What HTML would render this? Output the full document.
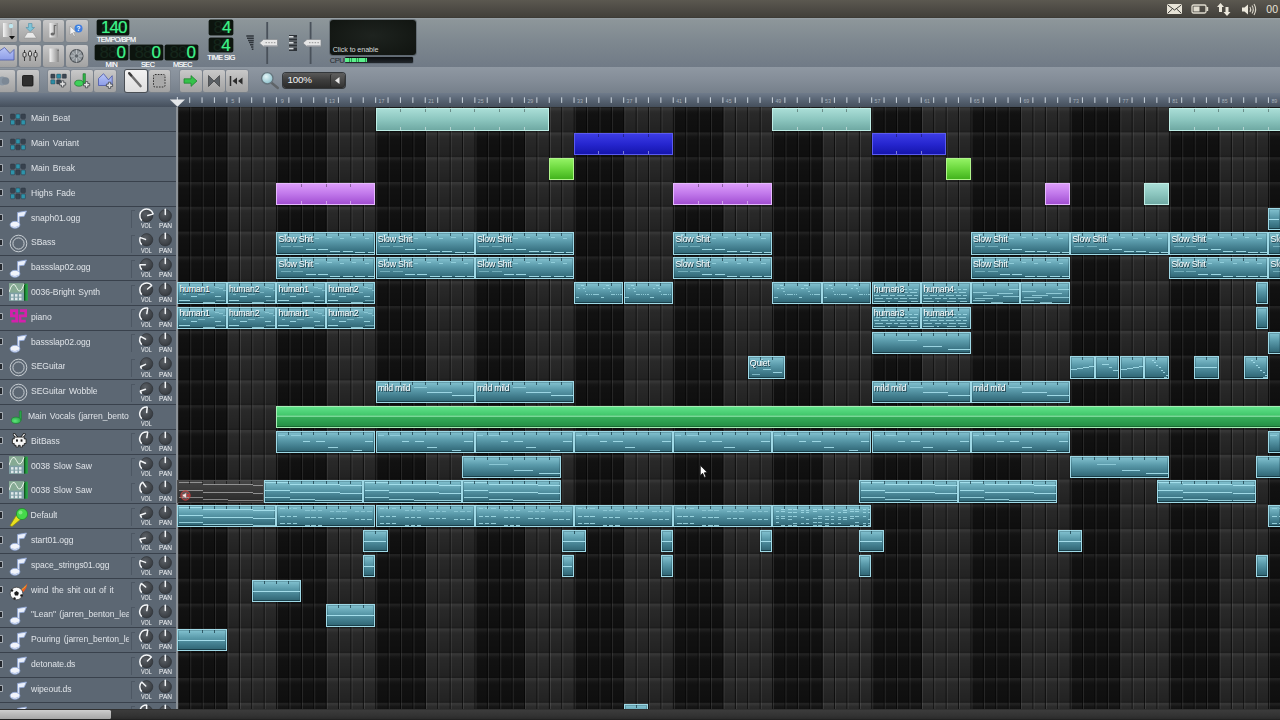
<!DOCTYPE html>
<html><head><meta charset="utf-8"><title>LMMS Song-Editor</title>
<style>
html,body{margin:0;padding:0;background:#2a2a2a;}
body{width:1280px;height:720px;overflow:hidden;position:relative;font-family:"Liberation Sans","DejaVu Sans",sans-serif;}
.abs{position:absolute;}
#top{position:absolute;left:0;top:0;width:1280px;height:18px;background:linear-gradient(#5b5850,#4e4b45 50%,#43413b 92%,#3a3833);}
#tb1{position:absolute;left:0;top:18px;width:1280px;height:50px;background:linear-gradient(#9aa3a8 0,#8d969a 4%,#7d878f 50%,#707a86);}
#tb2{position:absolute;left:0;top:67px;width:1280px;height:26px;background:linear-gradient(#8f98a2,#848d98 50%,#76808b);}
#tl{position:absolute;left:0;top:93px;width:1280px;height:14px;background:linear-gradient(#6f7b8b,#586473 50%,#454f5c);}
.btn{position:absolute;width:21.700px;height:22px;border-radius:2px;background:linear-gradient(#c9c9c9,#b4b4b4 50%,#a2a2a2);box-shadow:0 0 0 1px rgba(120,128,136,.55);}
.btn.on{background:linear-gradient(#f2f2f2,#dedede);box-shadow:0 0 0 1px #4a4f55;}
.lcd{position:absolute;background:#0c140e;border-radius:1.500px;box-shadow:0 0 0 .4px #1c241f;color:#3cf386;font-family:"Liberation Sans","DejaVu Sans",sans-serif;overflow:hidden;}
.lcd span{position:absolute;right:3px;top:0;letter-spacing:-1px;white-space:nowrap;text-shadow:0 0 1px rgba(60,243,134,.6)}
.lcd span.g{color:#15261b;text-shadow:none}
.lcdl{position:absolute;color:#f2f4f6;font-size:7.300px;letter-spacing:-0.55px;white-space:nowrap;text-shadow:0 0 .4px #f2f4f6;}
.trk{position:absolute;left:0;width:177px;background:#5c6773;border-bottom:1px solid #39414c;box-sizing:border-box;overflow:hidden;}
.tn{position:absolute;top:6px;font-size:8.600px;color:#dfe3e8;white-space:nowrap;letter-spacing:-0.05px;word-spacing:1.100px;overflow:hidden;}
.kl{position:absolute;font-size:7.900px;color:#f3f5f7;top:14.300px;transform-origin:0 0;transform:scaleX(.74);white-space:nowrap;}
.clip{position:absolute;box-sizing:border-box;overflow:hidden;}
.pat{background:linear-gradient(#84c3d1,#5a9aaa 40%,#3f7a8a 75%,#2f6472);border:1px solid #9fd9e6;box-shadow:inset 0 -1px 0 0 rgba(15,45,55,.6),inset 0 0 0 1px rgba(20,55,68,.25);}
.pat span{position:absolute;left:1.300px;top:.8px;font-size:8.800px;color:#fff;text-shadow:.7px .7px 0 rgba(15,40,50,.9);white-space:nowrap;letter-spacing:-0.25px;}
.bb{border:1px solid;}
.n{position:absolute;height:1px;background:#a9e2ee;opacity:.85}
.tk{position:absolute;top:0;width:1px;height:3px;background:rgba(10,40,50,.65);}
#w{position:absolute;left:0;top:0;width:1280px;height:720px;overflow:hidden;filter:blur(.35px);}
</style></head><body><div id="w">

<div id="top">
<svg class="abs" style="left:1166px;top:3px" width="18" height="13" viewBox="0 0 18 13"><rect x="1" y="1" width="15" height="10" rx="1.5" fill="#e8e4d8"/><path d="M2 2.2 L8.5 7 L15 2.2 M2 10 L6.3 6 M15 10 L10.7 6" stroke="#3d3c38" stroke-width="1" fill="none"/></svg>
<svg class="abs" style="left:1191px;top:4px" width="18" height="11" viewBox="0 0 18 11"><rect x="1" y="1" width="14" height="8" rx="1.5" fill="none" stroke="#e0dccf" stroke-width="1.3"/><rect x="15.4" y="3" width="1.8" height="4" fill="#e0dccf"/><rect x="2.5" y="2.5" width="6" height="5" fill="#e0dccf"/></svg>
<svg class="abs" style="left:1216px;top:2px" width="16" height="15" viewBox="0 0 16 15"><path d="M4.5 1 L8 5 L6 5 L6 10 L3 10 L3 5 L1 5 Z" fill="#ece8dc"/><path d="M11 14 L7.5 10 L9.5 10 L9.5 5 L12.500 5 L12.5 10 L14.5 10 Z" fill="#ece8dc"/></svg>
<svg class="abs" style="left:1241px;top:2px" width="18" height="15" viewBox="0 0 18 15"><path d="M1 5.5 L3.5 5.500 L7 2.5 L7 12.5 L3.5 9.5 L1 9.5 Z" fill="#ece8dc"/><path d="M9 5 Q10.5 7.5 9 10 M11 3.5 Q13.500 7.5 11 11.5 M13 2 Q16.300 7.500 13 13" stroke="#d9d5c9" stroke-width="1.100" fill="none"/></svg>
<div class="abs" style="left:1266.300px;top:2.800px;color:#e8e4d8;font-size:10.500px;white-space:nowrap">00</div>
</div>
<div id="tb1"></div><div id="tb2"></div><div id="tl"></div>
<div class="btn" style="left:-4.5px;top:19.6px"></div>
<div class="btn" style="left:-4.5px;top:44.8px"></div>
<div class="btn" style="left:19.2px;top:19.6px"></div>
<div class="btn" style="left:19.2px;top:44.8px"></div>
<div class="btn" style="left:42.6px;top:19.6px"></div>
<div class="btn" style="left:42.6px;top:44.8px"></div>
<div class="btn" style="left:65.9px;top:19.6px"></div>
<div class="btn" style="left:65.9px;top:44.8px"></div>
<div class="btn" style="left:-6.5px;top:70px"></div>
<div class="btn" style="left:16.9px;top:70px"></div>
<div class="btn" style="left:47.9px;top:70px"></div>
<div class="btn" style="left:70.9px;top:70px"></div>
<div class="btn" style="left:94.2px;top:70px"></div>
<div class="btn" style="left:148.5px;top:70px"></div>
<div class="btn" style="left:180px;top:70px"></div>
<div class="btn" style="left:203px;top:70px"></div>
<div class="btn" style="left:226px;top:70px"></div>
<div class="btn on" style="left:125px;top:70px"></div>
<svg class="abs" style="left:0;top:18px" width="430" height="76" viewBox="0 18 430 76">
<defs>
<linearGradient id="gpaper" x1="0" y1="0" x2="1" y2="0"><stop offset="0" stop-color="#f4f4f4"/><stop offset="1" stop-color="#9a9a9a"/></linearGradient>
<radialGradient id="glens" cx=".4" cy=".35" r=".7"><stop offset="0" stop-color="#e4f6f8"/><stop offset="1" stop-color="#86bcc8"/></radialGradient><linearGradient id="gblue" x1="0" y1="0" x2="0" y2="1"><stop offset="0" stop-color="#b9c6f6"/><stop offset="1" stop-color="#8d9de8"/></linearGradient>
</defs>
<!-- new-from-template -->
<path d="M3 23 h9 v14 h-9 z" fill="url(#gpaper)"/><path d="M9 36 l6 0 l-3 3.500 z" fill="#111"/><circle cx="11" cy="26" r="2.200" fill="#bfe6ee"/>
<!-- open/download -->
<path d="M28.500 23.500 h3.500 v4 h2.500 l-4.300 4 l-4.300 -4 h2.600 z" fill="#7fc4d8" stroke="#4f8fa6" stroke-width=".6"/><path d="M24 38 l3.500 -5.500 h5.500 l3.500 5.500 z" fill="#e9e9e9" stroke="#8a8a8a" stroke-width=".5"/>
<!-- note page -->
<path d="M49.500 23 h8.500 v14.500 h-8.500 z" fill="url(#gpaper)"/><ellipse cx="52.600" cy="34" rx="2.100" ry="1.600" fill="#6b6b6b"/><path d="M54.300 34 v-8.500 h2" stroke="#6b6b6b" stroke-width="1.200" fill="none"/>
<!-- whatsthis -->
<path d="M70 26 l0 9 l2.200 -2 l1.700 3.300 l1.300 -.7 l-1.600 -3.200 l2.900 -.2 z" fill="#f1f1f1" stroke="#8c8c8c" stroke-width=".5"/><circle cx="78.500" cy="28.500" r="4" fill="#3f7fe0"/><text x="78.500" y="30.800" font-size="6.500" font-weight="bold" fill="#fff" text-anchor="middle" font-family="Liberation Sans, sans-serif">?</text>
<!-- automation -->
<path d="M-2 60 l0 -8 l6.500 -4.500 l5.500 6 l4 -4 l0 10.500 z" fill="url(#gblue)" stroke="#4a58a8" stroke-width=".8"/>
<!-- mixer -->
<g stroke="#2c2c2c" stroke-width=".9" fill="#d8d8d8"><path d="M24.500 50 v11 M30 50 v11 M35.500 50 v11" fill="none"/><rect x="23" y="52.500" width="3" height="4.500" rx="1"/><rect x="28.500" y="51.500" width="3" height="4.500" rx="1"/><rect x="34" y="52.500" width="3" height="4.500" rx="1"/></g>
<!-- project notes -->
<path d="M49.500 48.500 h8 v13.500 h-8 z" fill="url(#gpaper)"/><path d="M57.300 51 l1.600 0 l0 11 l-1.600 0 z" fill="#8f8f8f"/><path d="M58.100 48.500 l.8 2.500 l-1.600 0 z" fill="#555"/>
<!-- controller rack -->
<circle cx="76.500" cy="56" r="6.500" fill="#8e9499" stroke="#4c5156" stroke-width="1.100"/><path d="M76.500 49.500 v13 M70 56 h13 M72 51.500 l9 9 M81 51.500 l-9 9" stroke="#cfd3d7" stroke-width=".7"/><circle cx="76.500" cy="56" r="1.800" fill="#5f656b"/>
<!-- play (cut) / stop -->
<circle cx="2" cy="81" r="4.500" fill="#8996a3"/><circle cx="5.500" cy="81" r="3.800" fill="#7c8895"/>
<rect x="22.500" y="75.500" width="10.500" height="10.500" rx="1" fill="#2f2f2f" stroke="#111" stroke-width=".8"/>
<!-- add bb -->
<g><rect x="50.8" y="74.1" width="4.200" height="4.200" rx=".6" fill="#3c4652" stroke="#27303a" stroke-width=".4"/><rect x="56.6" y="74.1" width="4.200" height="4.200" rx=".6" fill="#2b8da6" stroke="#27303a" stroke-width=".4"/><rect x="62.2" y="74.1" width="4.200" height="4.200" rx=".6" fill="#3c4652" stroke="#27303a" stroke-width=".4"/><rect x="50.8" y="79.8" width="4.200" height="4.200" rx=".6" fill="#2b8da6" stroke="#27303a" stroke-width=".4"/><rect x="56.6" y="79.8" width="4.200" height="4.200" rx=".6" fill="#3c4652" stroke="#27303a" stroke-width=".4"/><path d="M61.45 80.80 h2.30 v1.95 h1.95 v2.30 h-1.95 v1.95 h-2.30 v-1.95 h-1.95 v-2.30 h1.95 z" fill="#e2e2e2" stroke="#3f4347" stroke-width=".8" stroke-linejoin="round"/></g>
<!-- add sample -->
<path d="M83 84 v-10.300 h2.400 v10.300" fill="#2fb648" stroke="#19742a" stroke-width=".6"/><ellipse cx="79" cy="83.200" rx="4.300" ry="3" fill="#3fd15a" stroke="#19742a" stroke-width=".7"/><path d="M85.45 81.60 h2.30 v1.95 h1.95 v2.30 h-1.95 v1.95 h-2.30 v-1.95 h-1.95 v-2.30 h1.95 z" fill="#e2e2e2" stroke="#3f4347" stroke-width=".8" stroke-linejoin="round"/>
<!-- add automation -->
<path d="M98.500 85.500 l0 -7 l5 -4.800 l5 6.200 l3.700 -4.200 l0 9.800 z" fill="url(#gblue)" stroke="#4a58a8" stroke-width=".8" stroke-linejoin="round"/><path d="M108.35 82.20 h2.30 v1.95 h1.95 v2.30 h-1.95 v1.95 h-2.30 v-1.95 h-1.95 v-2.30 h1.95 z" fill="#e2e2e2" stroke="#3f4347" stroke-width=".8" stroke-linejoin="round"/>
<!-- draw mode pencil -->
<path d="M129.500 73.500 l11 12.500" stroke="#6e6e6e" stroke-width="2.600" stroke-linecap="round"/><path d="M129.200 73.200 l2 2.300" stroke="#3a3a3a" stroke-width="2.200" stroke-linecap="round"/>
<!-- select -->
<rect x="153.500" y="74.500" width="11.500" height="12.500" rx="1.500" fill="#a9a9a9" stroke="#333" stroke-width="1" stroke-dasharray="1.600 1.200"/>
<!-- autoscroll arrow -->
<path d="M184 78.800 h7 v-3.200 l6 5.400 l-6 5.400 v-3.200 h-7 z" fill="#35c24a" stroke="#1a7a28" stroke-width=".7"/>
<!-- loop points -->
<path d="M208.500 75.500 l0 11 l5.500 -5.500 z M219.500 75.500 l0 11 l-5.500 -5.500 z" fill="#5a5f64" stroke="#2d2f31" stroke-width=".6"/>
<!-- back to zero -->
<path d="M230.500 76 v10" stroke="#2b2b2b" stroke-width="1.500"/><path d="M237 77.500 l-4.500 3.500 l4.500 3.500 z M242.500 77.500 l-4.500 3.500 l4.500 3.500 z" fill="#2b2b2b"/>
<!-- zoom magnifier -->
<path d="M271.500 82.800 l6.300 5.200" stroke="#5f6468" stroke-width="2.400" stroke-linecap="round"/><circle cx="267.300" cy="78.300" r="5.700" fill="url(#glens)" stroke="#66757d" stroke-width="1.300"/>
<!-- master vol icon -->
<path d="M246.300 36 h7.500 M247 38.200 h6.800 M248 40.400 h5.800 M249 42.600 h4.600 M250 44.800 h3.400 M251 47 h2.400 M251.800 49.200 h1.600" stroke="#30363c" stroke-width="1.500"/>
<!-- sliders -->
<rect x="266.300" y="22" width="1.800" height="42" fill="#49515a"/><rect x="309.700" y="22" width="1.800" height="42" fill="#49515a"/>
<path d="M263.500 39.400 h14 v7.200 h-14 l-4 -3.600 z" fill="#e6e6e6" stroke="#7f8489" stroke-width=".7" stroke-linejoin="round"/><path d="M263.500 45.600 h14" stroke="#a9adb1" stroke-width="1"/><path d="M265.500 42.700 h1.500 M268.300 42.700 h1.500 M271.100 42.700 h1.500 M273.900 42.700 h1.500" stroke="#8a8a8a" stroke-width=".9"/>
<path d="M307 39.400 h14 v7.200 h-14 l-4 -3.600 z" fill="#e6e6e6" stroke="#7f8489" stroke-width=".7" stroke-linejoin="round"/><path d="M307 45.600 h14" stroke="#a9adb1" stroke-width="1"/><path d="M309 42.700 h1.500 M311.800 42.700 h1.500 M314.600 42.700 h1.500 M317.400 42.700 h1.500" stroke="#8a8a8a" stroke-width=".9"/>
<!-- master pitch icon -->
<rect x="289" y="35" width="8" height="16" fill="#2e3338"/><path d="M289 38 h8 M289 41 h8 M289 44 h8 M289 47 h8" stroke="#9ea6ae" stroke-width=".7"/><rect x="289" y="36" width="4.500" height="1.600" fill="#d7dbde"/><rect x="289" y="42" width="4.500" height="1.600" fill="#d7dbde"/><rect x="289" y="47.800" width="4.500" height="1.600" fill="#d7dbde"/>
</svg>
<div class="lcd" style="left:96.9px;top:20px;width:32.5px;height:14.7px;font-size:17px;line-height:15.899999999999999px;"><span class="g">888</span><span>140</span></div>
<div class="lcd" style="left:95px;top:45px;width:32.9px;height:14.5px;font-size:17px;line-height:15.7px;"><span class="g">888</span><span>0</span></div>
<div class="lcd" style="left:130.25px;top:45px;width:32.7px;height:14.5px;font-size:17px;line-height:15.7px;"><span class="g">888</span><span>0</span></div>
<div class="lcd" style="left:165.25px;top:45px;width:32.7px;height:14.5px;font-size:17px;line-height:15.7px;"><span class="g">888</span><span>0</span></div>
<div class="lcd" style="left:209.4px;top:20px;width:24.1px;height:14.7px;font-size:17px;line-height:15.899999999999999px;"><span class="g">88</span><span>4</span></div>
<div class="lcd" style="left:208.5px;top:38.2px;width:24.1px;height:14px;font-size:17px;line-height:15.2px;"><span class="g">88</span><span>4</span></div>
<div class="lcdl" style="left:96.800px;top:35.200px">TEMPO/BPM</div>
<div class="lcdl" style="left:105.500px;top:59.600px">MIN</div>
<div class="lcdl" style="left:141px;top:59.600px">SEC</div>
<div class="lcdl" style="left:173px;top:59.600px">MSEC</div>
<div class="lcdl" style="left:207.300px;top:53px">TIME SIG</div>
<div class="abs" style="left:330px;top:19.500px;width:85.500px;height:35px;border-radius:3px;background:radial-gradient(ellipse at 50% 45%,#1e231f,#111511 90%);box-shadow:0 0 0 1px rgba(70,78,86,.5)"></div>
<div class="abs" style="left:332.700px;top:45.300px;font-size:7.200px;letter-spacing:-.1px;color:#d4d8d6;white-space:nowrap">Click to enable</div>
<div class="abs" style="left:329.800px;top:55.600px;font-size:7.600px;letter-spacing:-.5px;color:#252b31;white-space:nowrap">CPU</div>
<div class="abs" style="left:344.500px;top:57.300px;width:68.500px;height:5.400px;border-radius:1px;background:linear-gradient(#0a0c0e,#22282d);box-shadow:0 0 0 .5px rgba(50,58,66,.5)"><div style="position:absolute;left:.8px;top:.9px;width:21.500px;height:3.600px;background:repeating-linear-gradient(90deg,#5cf08c 0,#5cf08c 1.700px,#2a9a50 1.700px,#2a9a50 2.300px)"></div></div>
<div class="abs" style="left:283px;top:72.500px;width:62px;height:15.500px;border-radius:3px;background:linear-gradient(#5a5a5a,#3e3e3e 45%,#2a2a2a);box-shadow:0 0 0 1px #33373b"></div>
<div class="abs" style="left:287.500px;top:74.300px;font-size:9.800px;color:#f4f4f4;letter-spacing:-.2px">100%</div>
<div class="abs" style="left:331px;top:73.500px;width:13px;height:13.500px;border-radius:2px;background:linear-gradient(#5e5e5e,#343434);box-shadow:-1px 0 0 #2a2a2a"></div>
<svg class="abs" style="left:334px;top:76px" width="7" height="9"><path d="M5.500 1 L5.500 8 L1 4.500 Z" fill="#e8e8e8"/></svg>
<svg class="abs" style="left:0;top:93px" width="1280" height="14" viewBox="0 93 1280 14" font-family="Liberation Sans, sans-serif">
<rect x="189.10" y="97.300" width="1.100" height="5.600" fill="#c9d1da" opacity=".92"/>
<rect x="201.50" y="97.300" width="1.100" height="5.600" fill="#c9d1da" opacity=".92"/>
<rect x="213.90" y="97.300" width="1.100" height="5.600" fill="#c9d1da" opacity=".92"/>
<rect x="226.30" y="97.300" width="1.100" height="5.600" fill="#c9d1da" opacity=".92"/>
<text x="232.70" y="102.800" font-size="5.400" fill="#c3cbd4" opacity=".75" text-anchor="middle" textLength="3.1" lengthAdjust="spacingAndGlyphs">5</text>
<rect x="238.70" y="97.300" width="1.100" height="5.600" fill="#c9d1da" opacity=".92"/>
<rect x="251.10" y="97.300" width="1.100" height="5.600" fill="#c9d1da" opacity=".92"/>
<rect x="263.50" y="97.300" width="1.100" height="5.600" fill="#c9d1da" opacity=".92"/>
<rect x="275.90" y="97.300" width="1.100" height="5.600" fill="#c9d1da" opacity=".92"/>
<text x="282.30" y="102.800" font-size="5.400" fill="#c3cbd4" opacity=".75" text-anchor="middle" textLength="3.1" lengthAdjust="spacingAndGlyphs">9</text>
<rect x="288.30" y="97.300" width="1.100" height="5.600" fill="#c9d1da" opacity=".92"/>
<rect x="300.70" y="97.300" width="1.100" height="5.600" fill="#c9d1da" opacity=".92"/>
<rect x="313.10" y="97.300" width="1.100" height="5.600" fill="#c9d1da" opacity=".92"/>
<rect x="325.50" y="97.300" width="1.100" height="5.600" fill="#c9d1da" opacity=".92"/>
<text x="331.90" y="102.800" font-size="5.400" fill="#c3cbd4" opacity=".75" text-anchor="middle" textLength="5.8" lengthAdjust="spacingAndGlyphs">13</text>
<rect x="337.90" y="97.300" width="1.100" height="5.600" fill="#c9d1da" opacity=".92"/>
<rect x="350.30" y="97.300" width="1.100" height="5.600" fill="#c9d1da" opacity=".92"/>
<rect x="362.70" y="97.300" width="1.100" height="5.600" fill="#c9d1da" opacity=".92"/>
<rect x="375.10" y="97.300" width="1.100" height="5.600" fill="#c9d1da" opacity=".92"/>
<text x="381.50" y="102.800" font-size="5.400" fill="#c3cbd4" opacity=".75" text-anchor="middle" textLength="5.8" lengthAdjust="spacingAndGlyphs">17</text>
<rect x="387.50" y="97.300" width="1.100" height="5.600" fill="#c9d1da" opacity=".92"/>
<rect x="399.90" y="97.300" width="1.100" height="5.600" fill="#c9d1da" opacity=".92"/>
<rect x="412.30" y="97.300" width="1.100" height="5.600" fill="#c9d1da" opacity=".92"/>
<rect x="424.70" y="97.300" width="1.100" height="5.600" fill="#c9d1da" opacity=".92"/>
<text x="431.10" y="102.800" font-size="5.400" fill="#c3cbd4" opacity=".75" text-anchor="middle" textLength="5.8" lengthAdjust="spacingAndGlyphs">21</text>
<rect x="437.10" y="97.300" width="1.100" height="5.600" fill="#c9d1da" opacity=".92"/>
<rect x="449.50" y="97.300" width="1.100" height="5.600" fill="#c9d1da" opacity=".92"/>
<rect x="461.90" y="97.300" width="1.100" height="5.600" fill="#c9d1da" opacity=".92"/>
<rect x="474.30" y="97.300" width="1.100" height="5.600" fill="#c9d1da" opacity=".92"/>
<text x="480.70" y="102.800" font-size="5.400" fill="#c3cbd4" opacity=".75" text-anchor="middle" textLength="5.8" lengthAdjust="spacingAndGlyphs">25</text>
<rect x="486.70" y="97.300" width="1.100" height="5.600" fill="#c9d1da" opacity=".92"/>
<rect x="499.10" y="97.300" width="1.100" height="5.600" fill="#c9d1da" opacity=".92"/>
<rect x="511.50" y="97.300" width="1.100" height="5.600" fill="#c9d1da" opacity=".92"/>
<rect x="523.90" y="97.300" width="1.100" height="5.600" fill="#c9d1da" opacity=".92"/>
<text x="530.30" y="102.800" font-size="5.400" fill="#c3cbd4" opacity=".75" text-anchor="middle" textLength="5.8" lengthAdjust="spacingAndGlyphs">29</text>
<rect x="536.30" y="97.300" width="1.100" height="5.600" fill="#c9d1da" opacity=".92"/>
<rect x="548.70" y="97.300" width="1.100" height="5.600" fill="#c9d1da" opacity=".92"/>
<rect x="561.10" y="97.300" width="1.100" height="5.600" fill="#c9d1da" opacity=".92"/>
<rect x="573.50" y="97.300" width="1.100" height="5.600" fill="#c9d1da" opacity=".92"/>
<text x="579.90" y="102.800" font-size="5.400" fill="#c3cbd4" opacity=".75" text-anchor="middle" textLength="5.8" lengthAdjust="spacingAndGlyphs">33</text>
<rect x="585.90" y="97.300" width="1.100" height="5.600" fill="#c9d1da" opacity=".92"/>
<rect x="598.30" y="97.300" width="1.100" height="5.600" fill="#c9d1da" opacity=".92"/>
<rect x="610.70" y="97.300" width="1.100" height="5.600" fill="#c9d1da" opacity=".92"/>
<rect x="623.10" y="97.300" width="1.100" height="5.600" fill="#c9d1da" opacity=".92"/>
<text x="629.50" y="102.800" font-size="5.400" fill="#c3cbd4" opacity=".75" text-anchor="middle" textLength="5.8" lengthAdjust="spacingAndGlyphs">37</text>
<rect x="635.50" y="97.300" width="1.100" height="5.600" fill="#c9d1da" opacity=".92"/>
<rect x="647.90" y="97.300" width="1.100" height="5.600" fill="#c9d1da" opacity=".92"/>
<rect x="660.30" y="97.300" width="1.100" height="5.600" fill="#c9d1da" opacity=".92"/>
<rect x="672.70" y="97.300" width="1.100" height="5.600" fill="#c9d1da" opacity=".92"/>
<text x="679.10" y="102.800" font-size="5.400" fill="#c3cbd4" opacity=".75" text-anchor="middle" textLength="5.8" lengthAdjust="spacingAndGlyphs">41</text>
<rect x="685.10" y="97.300" width="1.100" height="5.600" fill="#c9d1da" opacity=".92"/>
<rect x="697.50" y="97.300" width="1.100" height="5.600" fill="#c9d1da" opacity=".92"/>
<rect x="709.90" y="97.300" width="1.100" height="5.600" fill="#c9d1da" opacity=".92"/>
<rect x="722.30" y="97.300" width="1.100" height="5.600" fill="#c9d1da" opacity=".92"/>
<text x="728.70" y="102.800" font-size="5.400" fill="#c3cbd4" opacity=".75" text-anchor="middle" textLength="5.8" lengthAdjust="spacingAndGlyphs">45</text>
<rect x="734.70" y="97.300" width="1.100" height="5.600" fill="#c9d1da" opacity=".92"/>
<rect x="747.10" y="97.300" width="1.100" height="5.600" fill="#c9d1da" opacity=".92"/>
<rect x="759.50" y="97.300" width="1.100" height="5.600" fill="#c9d1da" opacity=".92"/>
<rect x="771.90" y="97.300" width="1.100" height="5.600" fill="#c9d1da" opacity=".92"/>
<text x="778.30" y="102.800" font-size="5.400" fill="#c3cbd4" opacity=".75" text-anchor="middle" textLength="5.8" lengthAdjust="spacingAndGlyphs">49</text>
<rect x="784.30" y="97.300" width="1.100" height="5.600" fill="#c9d1da" opacity=".92"/>
<rect x="796.70" y="97.300" width="1.100" height="5.600" fill="#c9d1da" opacity=".92"/>
<rect x="809.10" y="97.300" width="1.100" height="5.600" fill="#c9d1da" opacity=".92"/>
<rect x="821.50" y="97.300" width="1.100" height="5.600" fill="#c9d1da" opacity=".92"/>
<text x="827.90" y="102.800" font-size="5.400" fill="#c3cbd4" opacity=".75" text-anchor="middle" textLength="5.8" lengthAdjust="spacingAndGlyphs">53</text>
<rect x="833.90" y="97.300" width="1.100" height="5.600" fill="#c9d1da" opacity=".92"/>
<rect x="846.30" y="97.300" width="1.100" height="5.600" fill="#c9d1da" opacity=".92"/>
<rect x="858.70" y="97.300" width="1.100" height="5.600" fill="#c9d1da" opacity=".92"/>
<rect x="871.10" y="97.300" width="1.100" height="5.600" fill="#c9d1da" opacity=".92"/>
<text x="877.50" y="102.800" font-size="5.400" fill="#c3cbd4" opacity=".75" text-anchor="middle" textLength="5.8" lengthAdjust="spacingAndGlyphs">57</text>
<rect x="883.50" y="97.300" width="1.100" height="5.600" fill="#c9d1da" opacity=".92"/>
<rect x="895.90" y="97.300" width="1.100" height="5.600" fill="#c9d1da" opacity=".92"/>
<rect x="908.30" y="97.300" width="1.100" height="5.600" fill="#c9d1da" opacity=".92"/>
<rect x="920.70" y="97.300" width="1.100" height="5.600" fill="#c9d1da" opacity=".92"/>
<text x="927.10" y="102.800" font-size="5.400" fill="#c3cbd4" opacity=".75" text-anchor="middle" textLength="5.8" lengthAdjust="spacingAndGlyphs">61</text>
<rect x="933.10" y="97.300" width="1.100" height="5.600" fill="#c9d1da" opacity=".92"/>
<rect x="945.50" y="97.300" width="1.100" height="5.600" fill="#c9d1da" opacity=".92"/>
<rect x="957.90" y="97.300" width="1.100" height="5.600" fill="#c9d1da" opacity=".92"/>
<rect x="970.30" y="97.300" width="1.100" height="5.600" fill="#c9d1da" opacity=".92"/>
<text x="976.70" y="102.800" font-size="5.400" fill="#c3cbd4" opacity=".75" text-anchor="middle" textLength="5.8" lengthAdjust="spacingAndGlyphs">65</text>
<rect x="982.70" y="97.300" width="1.100" height="5.600" fill="#c9d1da" opacity=".92"/>
<rect x="995.10" y="97.300" width="1.100" height="5.600" fill="#c9d1da" opacity=".92"/>
<rect x="1007.50" y="97.300" width="1.100" height="5.600" fill="#c9d1da" opacity=".92"/>
<rect x="1019.90" y="97.300" width="1.100" height="5.600" fill="#c9d1da" opacity=".92"/>
<text x="1026.30" y="102.800" font-size="5.400" fill="#c3cbd4" opacity=".75" text-anchor="middle" textLength="5.8" lengthAdjust="spacingAndGlyphs">69</text>
<rect x="1032.30" y="97.300" width="1.100" height="5.600" fill="#c9d1da" opacity=".92"/>
<rect x="1044.70" y="97.300" width="1.100" height="5.600" fill="#c9d1da" opacity=".92"/>
<rect x="1057.10" y="97.300" width="1.100" height="5.600" fill="#c9d1da" opacity=".92"/>
<rect x="1069.50" y="97.300" width="1.100" height="5.600" fill="#c9d1da" opacity=".92"/>
<text x="1075.90" y="102.800" font-size="5.400" fill="#c3cbd4" opacity=".75" text-anchor="middle" textLength="5.8" lengthAdjust="spacingAndGlyphs">73</text>
<rect x="1081.90" y="97.300" width="1.100" height="5.600" fill="#c9d1da" opacity=".92"/>
<rect x="1094.30" y="97.300" width="1.100" height="5.600" fill="#c9d1da" opacity=".92"/>
<rect x="1106.70" y="97.300" width="1.100" height="5.600" fill="#c9d1da" opacity=".92"/>
<rect x="1119.10" y="97.300" width="1.100" height="5.600" fill="#c9d1da" opacity=".92"/>
<text x="1125.50" y="102.800" font-size="5.400" fill="#c3cbd4" opacity=".75" text-anchor="middle" textLength="5.8" lengthAdjust="spacingAndGlyphs">77</text>
<rect x="1131.50" y="97.300" width="1.100" height="5.600" fill="#c9d1da" opacity=".92"/>
<rect x="1143.90" y="97.300" width="1.100" height="5.600" fill="#c9d1da" opacity=".92"/>
<rect x="1156.30" y="97.300" width="1.100" height="5.600" fill="#c9d1da" opacity=".92"/>
<rect x="1168.70" y="97.300" width="1.100" height="5.600" fill="#c9d1da" opacity=".92"/>
<text x="1175.10" y="102.800" font-size="5.400" fill="#c3cbd4" opacity=".75" text-anchor="middle" textLength="5.8" lengthAdjust="spacingAndGlyphs">81</text>
<rect x="1181.10" y="97.300" width="1.100" height="5.600" fill="#c9d1da" opacity=".92"/>
<rect x="1193.50" y="97.300" width="1.100" height="5.600" fill="#c9d1da" opacity=".92"/>
<rect x="1205.90" y="97.300" width="1.100" height="5.600" fill="#c9d1da" opacity=".92"/>
<rect x="1218.30" y="97.300" width="1.100" height="5.600" fill="#c9d1da" opacity=".92"/>
<text x="1224.70" y="102.800" font-size="5.400" fill="#c3cbd4" opacity=".75" text-anchor="middle" textLength="5.8" lengthAdjust="spacingAndGlyphs">85</text>
<rect x="1230.70" y="97.300" width="1.100" height="5.600" fill="#c9d1da" opacity=".92"/>
<rect x="1243.10" y="97.300" width="1.100" height="5.600" fill="#c9d1da" opacity=".92"/>
<rect x="1255.50" y="97.300" width="1.100" height="5.600" fill="#c9d1da" opacity=".92"/>
<rect x="1267.90" y="97.300" width="1.100" height="5.600" fill="#c9d1da" opacity=".92"/>
<text x="1274.30" y="102.800" font-size="5.400" fill="#c3cbd4" opacity=".75" text-anchor="middle" textLength="5.8" lengthAdjust="spacingAndGlyphs">89</text>
<rect x="1280.30" y="97.300" width="1.100" height="5.600" fill="#c9d1da" opacity=".92"/>
<rect x="176.800" y="97" width="1.200" height="3" fill="#c9d1da"/><path d="M170.300 99.700 L184.500 99.700 L177.400 106.600 Z" fill="#e4e7ea" stroke="#f2f4f6" stroke-width=".4"/>
</svg>
<svg class="abs" style="left:177px;top:106.800px" width="1103" height="603.200" viewBox="177 106.800 1103 603.200">
<defs><linearGradient id="rowg" x1="0" y1="0" x2="0" y2="1"><stop offset="0" stop-color="#fff" stop-opacity=".075"/><stop offset=".07" stop-color="#fff" stop-opacity=".06"/><stop offset=".15" stop-color="#fff" stop-opacity=".02"/><stop offset=".35" stop-color="#000" stop-opacity="0"/><stop offset=".9" stop-color="#000" stop-opacity=".14"/><stop offset="1" stop-color="#000" stop-opacity=".3"/></linearGradient></defs>
<rect x="177" y="106" width="1103" height="604" fill="#151515"/>
<rect x="178.00" y="106" width="49.60" height="604" fill="#111111"/>
<rect x="227.60" y="106" width="49.60" height="604" fill="#282828"/>
<rect x="277.20" y="106" width="49.60" height="604" fill="#111111"/>
<rect x="326.80" y="106" width="49.60" height="604" fill="#282828"/>
<rect x="376.40" y="106" width="49.60" height="604" fill="#111111"/>
<rect x="426.00" y="106" width="49.60" height="604" fill="#282828"/>
<rect x="475.60" y="106" width="49.60" height="604" fill="#111111"/>
<rect x="525.20" y="106" width="49.60" height="604" fill="#282828"/>
<rect x="574.80" y="106" width="49.60" height="604" fill="#111111"/>
<rect x="624.40" y="106" width="49.60" height="604" fill="#282828"/>
<rect x="674.00" y="106" width="49.60" height="604" fill="#111111"/>
<rect x="723.60" y="106" width="49.60" height="604" fill="#282828"/>
<rect x="773.20" y="106" width="49.60" height="604" fill="#111111"/>
<rect x="822.80" y="106" width="49.60" height="604" fill="#282828"/>
<rect x="872.40" y="106" width="49.60" height="604" fill="#111111"/>
<rect x="922.00" y="106" width="49.60" height="604" fill="#282828"/>
<rect x="971.60" y="106" width="49.60" height="604" fill="#111111"/>
<rect x="1021.20" y="106" width="49.60" height="604" fill="#282828"/>
<rect x="1070.80" y="106" width="49.60" height="604" fill="#111111"/>
<rect x="1120.40" y="106" width="49.60" height="604" fill="#282828"/>
<rect x="1170.00" y="106" width="49.60" height="604" fill="#111111"/>
<rect x="1219.60" y="106" width="49.60" height="604" fill="#282828"/>
<rect x="1269.20" y="106" width="49.60" height="604" fill="#111111"/>
<rect x="177" y="107.40" width="1103" height="24.80" fill="url(#rowg)"/>
<rect x="177" y="132.20" width="1103" height="24.80" fill="url(#rowg)"/>
<rect x="177" y="157.00" width="1103" height="24.80" fill="url(#rowg)"/>
<rect x="177" y="181.80" width="1103" height="24.80" fill="url(#rowg)"/>
<rect x="177" y="206.60" width="1103" height="24.80" fill="url(#rowg)"/>
<rect x="177" y="231.40" width="1103" height="24.80" fill="url(#rowg)"/>
<rect x="177" y="256.20" width="1103" height="24.80" fill="url(#rowg)"/>
<rect x="177" y="281.00" width="1103" height="24.80" fill="url(#rowg)"/>
<rect x="177" y="305.80" width="1103" height="24.80" fill="url(#rowg)"/>
<rect x="177" y="330.60" width="1103" height="24.80" fill="url(#rowg)"/>
<rect x="177" y="355.40" width="1103" height="24.80" fill="url(#rowg)"/>
<rect x="177" y="380.20" width="1103" height="24.80" fill="url(#rowg)"/>
<rect x="177" y="405.00" width="1103" height="24.80" fill="url(#rowg)"/>
<rect x="177" y="429.80" width="1103" height="24.80" fill="url(#rowg)"/>
<rect x="177" y="454.60" width="1103" height="24.80" fill="url(#rowg)"/>
<rect x="177" y="479.40" width="1103" height="24.80" fill="url(#rowg)"/>
<rect x="177" y="504.20" width="1103" height="24.80" fill="url(#rowg)"/>
<rect x="177" y="529.00" width="1103" height="24.80" fill="url(#rowg)"/>
<rect x="177" y="553.80" width="1103" height="24.80" fill="url(#rowg)"/>
<rect x="177" y="578.60" width="1103" height="24.80" fill="url(#rowg)"/>
<rect x="177" y="603.40" width="1103" height="24.80" fill="url(#rowg)"/>
<rect x="177" y="628.20" width="1103" height="24.80" fill="url(#rowg)"/>
<rect x="177" y="653.00" width="1103" height="24.80" fill="url(#rowg)"/>
<rect x="177" y="677.80" width="1103" height="24.80" fill="url(#rowg)"/>
<rect x="177" y="702.60" width="1103" height="24.80" fill="url(#rowg)"/>
<rect x="176.90" y="106" width="1" height="604" fill="#050505" opacity=".75"/><rect x="177.90" y="106" width=".9" height="604" fill="#fff" opacity=".12"/>
<rect x="189.30" y="106" width="1" height="604" fill="#050505" opacity=".75"/><rect x="190.30" y="106" width=".9" height="604" fill="#fff" opacity=".12"/>
<rect x="201.70" y="106" width="1" height="604" fill="#050505" opacity=".75"/><rect x="202.70" y="106" width=".9" height="604" fill="#fff" opacity=".12"/>
<rect x="214.10" y="106" width="1" height="604" fill="#050505" opacity=".75"/><rect x="215.10" y="106" width=".9" height="604" fill="#fff" opacity=".12"/>
<rect x="226.50" y="106" width="1" height="604" fill="#050505" opacity=".75"/><rect x="227.50" y="106" width=".9" height="604" fill="#fff" opacity=".12"/>
<rect x="238.90" y="106" width="1" height="604" fill="#050505" opacity=".75"/><rect x="239.90" y="106" width=".9" height="604" fill="#fff" opacity=".12"/>
<rect x="251.30" y="106" width="1" height="604" fill="#050505" opacity=".75"/><rect x="252.30" y="106" width=".9" height="604" fill="#fff" opacity=".12"/>
<rect x="263.70" y="106" width="1" height="604" fill="#050505" opacity=".75"/><rect x="264.70" y="106" width=".9" height="604" fill="#fff" opacity=".12"/>
<rect x="276.10" y="106" width="1" height="604" fill="#050505" opacity=".75"/><rect x="277.10" y="106" width=".9" height="604" fill="#fff" opacity=".12"/>
<rect x="288.50" y="106" width="1" height="604" fill="#050505" opacity=".75"/><rect x="289.50" y="106" width=".9" height="604" fill="#fff" opacity=".12"/>
<rect x="300.90" y="106" width="1" height="604" fill="#050505" opacity=".75"/><rect x="301.90" y="106" width=".9" height="604" fill="#fff" opacity=".12"/>
<rect x="313.30" y="106" width="1" height="604" fill="#050505" opacity=".75"/><rect x="314.30" y="106" width=".9" height="604" fill="#fff" opacity=".12"/>
<rect x="325.70" y="106" width="1" height="604" fill="#050505" opacity=".75"/><rect x="326.70" y="106" width=".9" height="604" fill="#fff" opacity=".12"/>
<rect x="338.10" y="106" width="1" height="604" fill="#050505" opacity=".75"/><rect x="339.10" y="106" width=".9" height="604" fill="#fff" opacity=".12"/>
<rect x="350.50" y="106" width="1" height="604" fill="#050505" opacity=".75"/><rect x="351.50" y="106" width=".9" height="604" fill="#fff" opacity=".12"/>
<rect x="362.90" y="106" width="1" height="604" fill="#050505" opacity=".75"/><rect x="363.90" y="106" width=".9" height="604" fill="#fff" opacity=".12"/>
<rect x="375.30" y="106" width="1" height="604" fill="#050505" opacity=".75"/><rect x="376.30" y="106" width=".9" height="604" fill="#fff" opacity=".12"/>
<rect x="387.70" y="106" width="1" height="604" fill="#050505" opacity=".75"/><rect x="388.70" y="106" width=".9" height="604" fill="#fff" opacity=".12"/>
<rect x="400.10" y="106" width="1" height="604" fill="#050505" opacity=".75"/><rect x="401.10" y="106" width=".9" height="604" fill="#fff" opacity=".12"/>
<rect x="412.50" y="106" width="1" height="604" fill="#050505" opacity=".75"/><rect x="413.50" y="106" width=".9" height="604" fill="#fff" opacity=".12"/>
<rect x="424.90" y="106" width="1" height="604" fill="#050505" opacity=".75"/><rect x="425.90" y="106" width=".9" height="604" fill="#fff" opacity=".12"/>
<rect x="437.30" y="106" width="1" height="604" fill="#050505" opacity=".75"/><rect x="438.30" y="106" width=".9" height="604" fill="#fff" opacity=".12"/>
<rect x="449.70" y="106" width="1" height="604" fill="#050505" opacity=".75"/><rect x="450.70" y="106" width=".9" height="604" fill="#fff" opacity=".12"/>
<rect x="462.10" y="106" width="1" height="604" fill="#050505" opacity=".75"/><rect x="463.10" y="106" width=".9" height="604" fill="#fff" opacity=".12"/>
<rect x="474.50" y="106" width="1" height="604" fill="#050505" opacity=".75"/><rect x="475.50" y="106" width=".9" height="604" fill="#fff" opacity=".12"/>
<rect x="486.90" y="106" width="1" height="604" fill="#050505" opacity=".75"/><rect x="487.90" y="106" width=".9" height="604" fill="#fff" opacity=".12"/>
<rect x="499.30" y="106" width="1" height="604" fill="#050505" opacity=".75"/><rect x="500.30" y="106" width=".9" height="604" fill="#fff" opacity=".12"/>
<rect x="511.70" y="106" width="1" height="604" fill="#050505" opacity=".75"/><rect x="512.70" y="106" width=".9" height="604" fill="#fff" opacity=".12"/>
<rect x="524.10" y="106" width="1" height="604" fill="#050505" opacity=".75"/><rect x="525.10" y="106" width=".9" height="604" fill="#fff" opacity=".12"/>
<rect x="536.50" y="106" width="1" height="604" fill="#050505" opacity=".75"/><rect x="537.50" y="106" width=".9" height="604" fill="#fff" opacity=".12"/>
<rect x="548.90" y="106" width="1" height="604" fill="#050505" opacity=".75"/><rect x="549.90" y="106" width=".9" height="604" fill="#fff" opacity=".12"/>
<rect x="561.30" y="106" width="1" height="604" fill="#050505" opacity=".75"/><rect x="562.30" y="106" width=".9" height="604" fill="#fff" opacity=".12"/>
<rect x="573.70" y="106" width="1" height="604" fill="#050505" opacity=".75"/><rect x="574.70" y="106" width=".9" height="604" fill="#fff" opacity=".12"/>
<rect x="586.10" y="106" width="1" height="604" fill="#050505" opacity=".75"/><rect x="587.10" y="106" width=".9" height="604" fill="#fff" opacity=".12"/>
<rect x="598.50" y="106" width="1" height="604" fill="#050505" opacity=".75"/><rect x="599.50" y="106" width=".9" height="604" fill="#fff" opacity=".12"/>
<rect x="610.90" y="106" width="1" height="604" fill="#050505" opacity=".75"/><rect x="611.90" y="106" width=".9" height="604" fill="#fff" opacity=".12"/>
<rect x="623.30" y="106" width="1" height="604" fill="#050505" opacity=".75"/><rect x="624.30" y="106" width=".9" height="604" fill="#fff" opacity=".12"/>
<rect x="635.70" y="106" width="1" height="604" fill="#050505" opacity=".75"/><rect x="636.70" y="106" width=".9" height="604" fill="#fff" opacity=".12"/>
<rect x="648.10" y="106" width="1" height="604" fill="#050505" opacity=".75"/><rect x="649.10" y="106" width=".9" height="604" fill="#fff" opacity=".12"/>
<rect x="660.50" y="106" width="1" height="604" fill="#050505" opacity=".75"/><rect x="661.50" y="106" width=".9" height="604" fill="#fff" opacity=".12"/>
<rect x="672.90" y="106" width="1" height="604" fill="#050505" opacity=".75"/><rect x="673.90" y="106" width=".9" height="604" fill="#fff" opacity=".12"/>
<rect x="685.30" y="106" width="1" height="604" fill="#050505" opacity=".75"/><rect x="686.30" y="106" width=".9" height="604" fill="#fff" opacity=".12"/>
<rect x="697.70" y="106" width="1" height="604" fill="#050505" opacity=".75"/><rect x="698.70" y="106" width=".9" height="604" fill="#fff" opacity=".12"/>
<rect x="710.10" y="106" width="1" height="604" fill="#050505" opacity=".75"/><rect x="711.10" y="106" width=".9" height="604" fill="#fff" opacity=".12"/>
<rect x="722.50" y="106" width="1" height="604" fill="#050505" opacity=".75"/><rect x="723.50" y="106" width=".9" height="604" fill="#fff" opacity=".12"/>
<rect x="734.90" y="106" width="1" height="604" fill="#050505" opacity=".75"/><rect x="735.90" y="106" width=".9" height="604" fill="#fff" opacity=".12"/>
<rect x="747.30" y="106" width="1" height="604" fill="#050505" opacity=".75"/><rect x="748.30" y="106" width=".9" height="604" fill="#fff" opacity=".12"/>
<rect x="759.70" y="106" width="1" height="604" fill="#050505" opacity=".75"/><rect x="760.70" y="106" width=".9" height="604" fill="#fff" opacity=".12"/>
<rect x="772.10" y="106" width="1" height="604" fill="#050505" opacity=".75"/><rect x="773.10" y="106" width=".9" height="604" fill="#fff" opacity=".12"/>
<rect x="784.50" y="106" width="1" height="604" fill="#050505" opacity=".75"/><rect x="785.50" y="106" width=".9" height="604" fill="#fff" opacity=".12"/>
<rect x="796.90" y="106" width="1" height="604" fill="#050505" opacity=".75"/><rect x="797.90" y="106" width=".9" height="604" fill="#fff" opacity=".12"/>
<rect x="809.30" y="106" width="1" height="604" fill="#050505" opacity=".75"/><rect x="810.30" y="106" width=".9" height="604" fill="#fff" opacity=".12"/>
<rect x="821.70" y="106" width="1" height="604" fill="#050505" opacity=".75"/><rect x="822.70" y="106" width=".9" height="604" fill="#fff" opacity=".12"/>
<rect x="834.10" y="106" width="1" height="604" fill="#050505" opacity=".75"/><rect x="835.10" y="106" width=".9" height="604" fill="#fff" opacity=".12"/>
<rect x="846.50" y="106" width="1" height="604" fill="#050505" opacity=".75"/><rect x="847.50" y="106" width=".9" height="604" fill="#fff" opacity=".12"/>
<rect x="858.90" y="106" width="1" height="604" fill="#050505" opacity=".75"/><rect x="859.90" y="106" width=".9" height="604" fill="#fff" opacity=".12"/>
<rect x="871.30" y="106" width="1" height="604" fill="#050505" opacity=".75"/><rect x="872.30" y="106" width=".9" height="604" fill="#fff" opacity=".12"/>
<rect x="883.70" y="106" width="1" height="604" fill="#050505" opacity=".75"/><rect x="884.70" y="106" width=".9" height="604" fill="#fff" opacity=".12"/>
<rect x="896.10" y="106" width="1" height="604" fill="#050505" opacity=".75"/><rect x="897.10" y="106" width=".9" height="604" fill="#fff" opacity=".12"/>
<rect x="908.50" y="106" width="1" height="604" fill="#050505" opacity=".75"/><rect x="909.50" y="106" width=".9" height="604" fill="#fff" opacity=".12"/>
<rect x="920.90" y="106" width="1" height="604" fill="#050505" opacity=".75"/><rect x="921.90" y="106" width=".9" height="604" fill="#fff" opacity=".12"/>
<rect x="933.30" y="106" width="1" height="604" fill="#050505" opacity=".75"/><rect x="934.30" y="106" width=".9" height="604" fill="#fff" opacity=".12"/>
<rect x="945.70" y="106" width="1" height="604" fill="#050505" opacity=".75"/><rect x="946.70" y="106" width=".9" height="604" fill="#fff" opacity=".12"/>
<rect x="958.10" y="106" width="1" height="604" fill="#050505" opacity=".75"/><rect x="959.10" y="106" width=".9" height="604" fill="#fff" opacity=".12"/>
<rect x="970.50" y="106" width="1" height="604" fill="#050505" opacity=".75"/><rect x="971.50" y="106" width=".9" height="604" fill="#fff" opacity=".12"/>
<rect x="982.90" y="106" width="1" height="604" fill="#050505" opacity=".75"/><rect x="983.90" y="106" width=".9" height="604" fill="#fff" opacity=".12"/>
<rect x="995.30" y="106" width="1" height="604" fill="#050505" opacity=".75"/><rect x="996.30" y="106" width=".9" height="604" fill="#fff" opacity=".12"/>
<rect x="1007.70" y="106" width="1" height="604" fill="#050505" opacity=".75"/><rect x="1008.70" y="106" width=".9" height="604" fill="#fff" opacity=".12"/>
<rect x="1020.10" y="106" width="1" height="604" fill="#050505" opacity=".75"/><rect x="1021.10" y="106" width=".9" height="604" fill="#fff" opacity=".12"/>
<rect x="1032.50" y="106" width="1" height="604" fill="#050505" opacity=".75"/><rect x="1033.50" y="106" width=".9" height="604" fill="#fff" opacity=".12"/>
<rect x="1044.90" y="106" width="1" height="604" fill="#050505" opacity=".75"/><rect x="1045.90" y="106" width=".9" height="604" fill="#fff" opacity=".12"/>
<rect x="1057.30" y="106" width="1" height="604" fill="#050505" opacity=".75"/><rect x="1058.30" y="106" width=".9" height="604" fill="#fff" opacity=".12"/>
<rect x="1069.70" y="106" width="1" height="604" fill="#050505" opacity=".75"/><rect x="1070.70" y="106" width=".9" height="604" fill="#fff" opacity=".12"/>
<rect x="1082.10" y="106" width="1" height="604" fill="#050505" opacity=".75"/><rect x="1083.10" y="106" width=".9" height="604" fill="#fff" opacity=".12"/>
<rect x="1094.50" y="106" width="1" height="604" fill="#050505" opacity=".75"/><rect x="1095.50" y="106" width=".9" height="604" fill="#fff" opacity=".12"/>
<rect x="1106.90" y="106" width="1" height="604" fill="#050505" opacity=".75"/><rect x="1107.90" y="106" width=".9" height="604" fill="#fff" opacity=".12"/>
<rect x="1119.30" y="106" width="1" height="604" fill="#050505" opacity=".75"/><rect x="1120.30" y="106" width=".9" height="604" fill="#fff" opacity=".12"/>
<rect x="1131.70" y="106" width="1" height="604" fill="#050505" opacity=".75"/><rect x="1132.70" y="106" width=".9" height="604" fill="#fff" opacity=".12"/>
<rect x="1144.10" y="106" width="1" height="604" fill="#050505" opacity=".75"/><rect x="1145.10" y="106" width=".9" height="604" fill="#fff" opacity=".12"/>
<rect x="1156.50" y="106" width="1" height="604" fill="#050505" opacity=".75"/><rect x="1157.50" y="106" width=".9" height="604" fill="#fff" opacity=".12"/>
<rect x="1168.90" y="106" width="1" height="604" fill="#050505" opacity=".75"/><rect x="1169.90" y="106" width=".9" height="604" fill="#fff" opacity=".12"/>
<rect x="1181.30" y="106" width="1" height="604" fill="#050505" opacity=".75"/><rect x="1182.30" y="106" width=".9" height="604" fill="#fff" opacity=".12"/>
<rect x="1193.70" y="106" width="1" height="604" fill="#050505" opacity=".75"/><rect x="1194.70" y="106" width=".9" height="604" fill="#fff" opacity=".12"/>
<rect x="1206.10" y="106" width="1" height="604" fill="#050505" opacity=".75"/><rect x="1207.10" y="106" width=".9" height="604" fill="#fff" opacity=".12"/>
<rect x="1218.50" y="106" width="1" height="604" fill="#050505" opacity=".75"/><rect x="1219.50" y="106" width=".9" height="604" fill="#fff" opacity=".12"/>
<rect x="1230.90" y="106" width="1" height="604" fill="#050505" opacity=".75"/><rect x="1231.90" y="106" width=".9" height="604" fill="#fff" opacity=".12"/>
<rect x="1243.30" y="106" width="1" height="604" fill="#050505" opacity=".75"/><rect x="1244.30" y="106" width=".9" height="604" fill="#fff" opacity=".12"/>
<rect x="1255.70" y="106" width="1" height="604" fill="#050505" opacity=".75"/><rect x="1256.70" y="106" width=".9" height="604" fill="#fff" opacity=".12"/>
<rect x="1268.10" y="106" width="1" height="604" fill="#050505" opacity=".75"/><rect x="1269.10" y="106" width=".9" height="604" fill="#fff" opacity=".12"/>
<rect x="1280.50" y="106" width="1" height="604" fill="#050505" opacity=".75"/><rect x="1281.50" y="106" width=".9" height="604" fill="#fff" opacity=".12"/>
</svg>
<svg width="0" height="0" style="position:absolute"><defs><radialGradient id="kg" cx=".4" cy=".35" r=".8"><stop offset="0" stop-color="#5a5f65"/><stop offset="1" stop-color="#2e3237"/></radialGradient></defs></svg>
<div class="trk" style="top:107.40px;height:25.10px">
<div class="abs" style="left:-1px;top:8.300px;width:3.200px;height:5.400px;background:#23272d;box-shadow:0 0 0 .7px #c4c9ce"></div>
<svg class="abs" style="left:10px;top:5.500px" width="17" height="14" viewBox="0 0 17 14"><g><rect x="0.5" y="1.0" width="4.300" height="4.800" rx=".8" fill="#38424e" stroke="#2b3440" stroke-width=".5"/><rect x="5.8" y="1.0" width="4.300" height="4.800" rx=".8" fill="#2e93aa" stroke="#2b3440" stroke-width=".5"/><rect x="11.1" y="1.0" width="4.300" height="4.800" rx=".8" fill="#38424e" stroke="#2b3440" stroke-width=".5"/><rect x="0.5" y="7.0" width="4.300" height="4.800" rx=".8" fill="#2e93aa" stroke="#2b3440" stroke-width=".5"/><rect x="5.8" y="7.0" width="4.300" height="4.800" rx=".8" fill="#38424e" stroke="#2b3440" stroke-width=".5"/><rect x="11.1" y="7.0" width="4.300" height="4.800" rx=".8" fill="#2e93aa" stroke="#2b3440" stroke-width=".5"/></g></svg>
<div class="tn" style="left:31px;max-width:97.6px">Main Beat</div>
</div>
<div class="trk" style="top:132.20px;height:25.10px">
<div class="abs" style="left:-1px;top:8.300px;width:3.200px;height:5.400px;background:#23272d;box-shadow:0 0 0 .7px #c4c9ce"></div>
<svg class="abs" style="left:10px;top:5.500px" width="17" height="14" viewBox="0 0 17 14"><g><rect x="0.5" y="1.0" width="4.300" height="4.800" rx=".8" fill="#38424e" stroke="#2b3440" stroke-width=".5"/><rect x="5.8" y="1.0" width="4.300" height="4.800" rx=".8" fill="#2e93aa" stroke="#2b3440" stroke-width=".5"/><rect x="11.1" y="1.0" width="4.300" height="4.800" rx=".8" fill="#38424e" stroke="#2b3440" stroke-width=".5"/><rect x="0.5" y="7.0" width="4.300" height="4.800" rx=".8" fill="#2e93aa" stroke="#2b3440" stroke-width=".5"/><rect x="5.8" y="7.0" width="4.300" height="4.800" rx=".8" fill="#38424e" stroke="#2b3440" stroke-width=".5"/><rect x="11.1" y="7.0" width="4.300" height="4.800" rx=".8" fill="#2e93aa" stroke="#2b3440" stroke-width=".5"/></g></svg>
<div class="tn" style="left:31px;max-width:97.6px">Main Variant</div>
</div>
<div class="trk" style="top:157.00px;height:25.10px">
<div class="abs" style="left:-1px;top:8.300px;width:3.200px;height:5.400px;background:#23272d;box-shadow:0 0 0 .7px #c4c9ce"></div>
<svg class="abs" style="left:10px;top:5.500px" width="17" height="14" viewBox="0 0 17 14"><g><rect x="0.5" y="1.0" width="4.300" height="4.800" rx=".8" fill="#38424e" stroke="#2b3440" stroke-width=".5"/><rect x="5.8" y="1.0" width="4.300" height="4.800" rx=".8" fill="#2e93aa" stroke="#2b3440" stroke-width=".5"/><rect x="11.1" y="1.0" width="4.300" height="4.800" rx=".8" fill="#38424e" stroke="#2b3440" stroke-width=".5"/><rect x="0.5" y="7.0" width="4.300" height="4.800" rx=".8" fill="#2e93aa" stroke="#2b3440" stroke-width=".5"/><rect x="5.8" y="7.0" width="4.300" height="4.800" rx=".8" fill="#38424e" stroke="#2b3440" stroke-width=".5"/><rect x="11.1" y="7.0" width="4.300" height="4.800" rx=".8" fill="#2e93aa" stroke="#2b3440" stroke-width=".5"/></g></svg>
<div class="tn" style="left:31px;max-width:97.6px">Main Break</div>
</div>
<div class="trk" style="top:181.80px;height:25.10px">
<div class="abs" style="left:-1px;top:8.300px;width:3.200px;height:5.400px;background:#23272d;box-shadow:0 0 0 .7px #c4c9ce"></div>
<svg class="abs" style="left:10px;top:5.500px" width="17" height="14" viewBox="0 0 17 14"><g><rect x="0.5" y="1.0" width="4.300" height="4.800" rx=".8" fill="#38424e" stroke="#2b3440" stroke-width=".5"/><rect x="5.8" y="1.0" width="4.300" height="4.800" rx=".8" fill="#2e93aa" stroke="#2b3440" stroke-width=".5"/><rect x="11.1" y="1.0" width="4.300" height="4.800" rx=".8" fill="#38424e" stroke="#2b3440" stroke-width=".5"/><rect x="0.5" y="7.0" width="4.300" height="4.800" rx=".8" fill="#2e93aa" stroke="#2b3440" stroke-width=".5"/><rect x="5.8" y="7.0" width="4.300" height="4.800" rx=".8" fill="#38424e" stroke="#2b3440" stroke-width=".5"/><rect x="11.1" y="7.0" width="4.300" height="4.800" rx=".8" fill="#2e93aa" stroke="#2b3440" stroke-width=".5"/></g></svg>
<div class="tn" style="left:31px;max-width:97.6px">Highs Fade</div>
</div>
<div class="trk" style="top:206.60px;height:25.10px">
<div class="abs" style="left:-1px;top:8.300px;width:3.200px;height:5.400px;background:#23272d;box-shadow:0 0 0 .7px #c4c9ce"></div>
<svg class="abs" style="left:9px;top:3px" width="19" height="20" viewBox="0 0 19 20"><path d="M8.500 2.500 L17.500 1 L15.200 6.200 L10.300 6.800 L10.300 14.500 L8.500 14.500 Z" fill="#eaf0fb" stroke="#8ea6d8" stroke-width=".8"/><ellipse cx="6" cy="14.800" rx="4.900" ry="3.500" fill="#f1f4fb" stroke="#8ea6d8" stroke-width=".8"/><path d="M2.500 16.500 q3.500 2.200 7 -.5" stroke="#b8c8ea" stroke-width="1" fill="none"/></svg>
<div class="tn" style="left:31px;max-width:97.6px">snaph01.ogg</div>
<div class="abs" style="left:131px;top:3.500px;width:1.200px;height:18px;background:#4d5763"></div><div class="abs" style="left:132.200px;top:3.500px;width:3px;height:1px;background:#4d5763"></div>
<svg class="abs" style="left:136px;top:0" width="41" height="25" viewBox="136 0 41 25">
<circle cx="146.6" cy="8.8" r="6.2" fill="url(#kg)" stroke="#2b2f34" stroke-width=".6"/><path d="M141.79 13.61 A6.8 6.8 0 1 1 153.17 7.04" stroke="#f4f6f8" stroke-width="1.500" fill="none"/><path d="M147.76 8.49 L152.88 7.12" stroke="#f4f6f8" stroke-width="1.500" stroke-linecap="round"/>
<circle cx="165.3" cy="8.8" r="6.2" fill="url(#kg)" stroke="#2b2f34" stroke-width=".6"/><path d="M165.30 7.60 L165.30 2.30" stroke="#f4f6f8" stroke-width="1.500" stroke-linecap="round"/>
</svg>
<div class="kl" style="left:140.800px;transform:scaleX(.68)">VOL</div>
<div class="kl" style="left:159.200px;transform:scaleX(.83)">PAN</div>
</div>
<div class="trk" style="top:231.40px;height:25.10px">
<div class="abs" style="left:-1px;top:8.300px;width:3.200px;height:5.400px;background:#23272d;box-shadow:0 0 0 .7px #c4c9ce"></div>
<svg class="abs" style="left:9px;top:3px" width="19" height="19" viewBox="0 0 19 19"><circle cx="9.500" cy="9.500" r="8.300" fill="none" stroke="#d4d9de" stroke-width=".9"/><circle cx="9.500" cy="9.500" r="5.600" fill="none" stroke="#d4d9de" stroke-width=".9"/></svg>
<div class="tn" style="left:31px;max-width:97.6px">SBass</div>
<div class="abs" style="left:131px;top:3.500px;width:1.200px;height:18px;background:#4d5763"></div><div class="abs" style="left:132.200px;top:3.500px;width:3px;height:1px;background:#4d5763"></div>
<svg class="abs" style="left:136px;top:0" width="41" height="25" viewBox="136 0 41 25">
<circle cx="146.6" cy="8.8" r="6.2" fill="url(#kg)" stroke="#2b2f34" stroke-width=".6"/><path d="M141.79 13.61 A6.8 6.8 0 0 1 140.21 6.47" stroke="#f4f6f8" stroke-width="1.500" fill="none"/><path d="M145.47 8.39 L140.49 6.58" stroke="#f4f6f8" stroke-width="1.500" stroke-linecap="round"/>
<circle cx="165.3" cy="8.8" r="6.2" fill="url(#kg)" stroke="#2b2f34" stroke-width=".6"/><path d="M165.30 7.60 L165.30 2.30" stroke="#f4f6f8" stroke-width="1.500" stroke-linecap="round"/>
</svg>
<div class="kl" style="left:140.800px;transform:scaleX(.68)">VOL</div>
<div class="kl" style="left:159.200px;transform:scaleX(.83)">PAN</div>
</div>
<div class="trk" style="top:256.20px;height:25.10px">
<div class="abs" style="left:-1px;top:8.300px;width:3.200px;height:5.400px;background:#23272d;box-shadow:0 0 0 .7px #c4c9ce"></div>
<svg class="abs" style="left:9px;top:3px" width="19" height="20" viewBox="0 0 19 20"><path d="M8.500 2.500 L17.500 1 L15.200 6.200 L10.300 6.800 L10.300 14.500 L8.500 14.500 Z" fill="#eaf0fb" stroke="#8ea6d8" stroke-width=".8"/><ellipse cx="6" cy="14.800" rx="4.900" ry="3.500" fill="#f1f4fb" stroke="#8ea6d8" stroke-width=".8"/><path d="M2.500 16.500 q3.500 2.200 7 -.5" stroke="#b8c8ea" stroke-width="1" fill="none"/></svg>
<div class="tn" style="left:31px;max-width:97.6px">bassslap02.ogg</div>
<div class="abs" style="left:131px;top:3.500px;width:1.200px;height:18px;background:#4d5763"></div><div class="abs" style="left:132.200px;top:3.500px;width:3px;height:1px;background:#4d5763"></div>
<svg class="abs" style="left:136px;top:0" width="41" height="25" viewBox="136 0 41 25">
<circle cx="146.6" cy="8.8" r="6.2" fill="url(#kg)" stroke="#2b2f34" stroke-width=".6"/><path d="M141.79 13.61 A6.8 6.8 0 0 1 139.80 8.80" stroke="#f4f6f8" stroke-width="1.500" fill="none"/><path d="M145.40 8.80 L140.10 8.80" stroke="#f4f6f8" stroke-width="1.500" stroke-linecap="round"/>
<circle cx="165.3" cy="8.8" r="6.2" fill="url(#kg)" stroke="#2b2f34" stroke-width=".6"/><path d="M165.30 7.60 L165.30 2.30" stroke="#f4f6f8" stroke-width="1.500" stroke-linecap="round"/>
</svg>
<div class="kl" style="left:140.800px;transform:scaleX(.68)">VOL</div>
<div class="kl" style="left:159.200px;transform:scaleX(.83)">PAN</div>
</div>
<div class="trk" style="top:281.00px;height:25.10px">
<div class="abs" style="left:-1px;top:8.300px;width:3.200px;height:5.400px;background:#23272d;box-shadow:0 0 0 .7px #c4c9ce"></div>
<svg class="abs" style="left:9.200px;top:1.900px" width="19" height="18.300" viewBox="0 0 19 18"><defs><linearGradient id="sg" x1="0" y1="0" x2="1" y2="0"><stop offset="0" stop-color="#0c3a16"/><stop offset=".5" stop-color="#1f9a3c"/><stop offset="1" stop-color="#2aa848"/></linearGradient></defs><rect x="0" y="0" width="15" height="17.500" fill="#86aa94"/><rect x="0" y="9.500" width="15" height="8" fill="#7f9fa6"/><rect x="15" y="0.500" width="3.800" height="17" fill="url(#sg)"/><path d="M0 9 Q4 -4 7.500 4.500 T15 1" stroke="#e9f3ea" stroke-width="1" fill="none"/><g fill="#dfe8ea"><rect x="2" y="11" width="2.500" height="2.500"/><rect x="6" y="11" width="2.500" height="2.500"/><rect x="10" y="11" width="2.500" height="2.500"/><rect x="2" y="14.500" width="2.500" height="2.500"/><rect x="6" y="14.500" width="2.500" height="2.500"/><rect x="10" y="14.500" width="2.500" height="2.500"/></g></svg>
<div class="tn" style="left:31px;max-width:97.6px">0036-Bright Synth</div>
<div class="abs" style="left:131px;top:3.500px;width:1.200px;height:18px;background:#4d5763"></div><div class="abs" style="left:132.200px;top:3.500px;width:3px;height:1px;background:#4d5763"></div>
<svg class="abs" style="left:136px;top:0" width="41" height="25" viewBox="136 0 41 25">
<circle cx="146.6" cy="8.8" r="6.2" fill="url(#kg)" stroke="#2b2f34" stroke-width=".6"/><path d="M141.79 13.61 A6.8 6.8 0 1 1 151.81 4.43" stroke="#f4f6f8" stroke-width="1.500" fill="none"/><path d="M147.52 8.03 L151.58 4.62" stroke="#f4f6f8" stroke-width="1.500" stroke-linecap="round"/>
<circle cx="165.3" cy="8.8" r="6.2" fill="url(#kg)" stroke="#2b2f34" stroke-width=".6"/><path d="M165.30 7.60 L165.30 2.30" stroke="#f4f6f8" stroke-width="1.500" stroke-linecap="round"/>
</svg>
<div class="kl" style="left:140.800px;transform:scaleX(.68)">VOL</div>
<div class="kl" style="left:159.200px;transform:scaleX(.83)">PAN</div>
</div>
<div class="trk" style="top:305.80px;height:25.10px">
<div class="abs" style="left:-1px;top:8.300px;width:3.200px;height:5.400px;background:#23272d;box-shadow:0 0 0 .7px #c4c9ce"></div>
<svg class="abs" style="left:9.800px;top:3.600px" width="17.200" height="13.600" viewBox="0 0 18 14"><g fill="none" stroke="#d320ac" stroke-width="2.900"><path d="M7 7 h-5.500 v-5.500 h5.500 v11 h-5.500"/><path d="M10.500 1.500 h6 v5.500 h-6 v5.500 h6"/></g></svg>
<div class="tn" style="left:31px;max-width:97.6px">piano</div>
<div class="abs" style="left:131px;top:3.500px;width:1.200px;height:18px;background:#4d5763"></div><div class="abs" style="left:132.200px;top:3.500px;width:3px;height:1px;background:#4d5763"></div>
<svg class="abs" style="left:136px;top:0" width="41" height="25" viewBox="136 0 41 25">
<circle cx="146.6" cy="8.8" r="6.2" fill="url(#kg)" stroke="#2b2f34" stroke-width=".6"/><path d="M141.79 13.61 A6.8 6.8 0 0 1 147.78 2.10" stroke="#f4f6f8" stroke-width="1.500" fill="none"/><path d="M146.81 7.62 L147.73 2.40" stroke="#f4f6f8" stroke-width="1.500" stroke-linecap="round"/>
<circle cx="165.3" cy="8.8" r="6.2" fill="url(#kg)" stroke="#2b2f34" stroke-width=".6"/><path d="M165.30 7.60 L165.30 2.30" stroke="#f4f6f8" stroke-width="1.500" stroke-linecap="round"/>
</svg>
<div class="kl" style="left:140.800px;transform:scaleX(.68)">VOL</div>
<div class="kl" style="left:159.200px;transform:scaleX(.83)">PAN</div>
</div>
<div class="trk" style="top:330.60px;height:25.10px">
<div class="abs" style="left:-1px;top:8.300px;width:3.200px;height:5.400px;background:#23272d;box-shadow:0 0 0 .7px #c4c9ce"></div>
<svg class="abs" style="left:9px;top:3px" width="19" height="20" viewBox="0 0 19 20"><path d="M8.500 2.500 L17.500 1 L15.200 6.200 L10.300 6.800 L10.300 14.500 L8.500 14.500 Z" fill="#eaf0fb" stroke="#8ea6d8" stroke-width=".8"/><ellipse cx="6" cy="14.800" rx="4.900" ry="3.500" fill="#f1f4fb" stroke="#8ea6d8" stroke-width=".8"/><path d="M2.500 16.500 q3.500 2.200 7 -.5" stroke="#b8c8ea" stroke-width="1" fill="none"/></svg>
<div class="tn" style="left:31px;max-width:97.6px">bassslap02.ogg</div>
<div class="abs" style="left:131px;top:3.500px;width:1.200px;height:18px;background:#4d5763"></div><div class="abs" style="left:132.200px;top:3.500px;width:3px;height:1px;background:#4d5763"></div>
<svg class="abs" style="left:136px;top:0" width="41" height="25" viewBox="136 0 41 25">
<circle cx="146.6" cy="8.8" r="6.2" fill="url(#kg)" stroke="#2b2f34" stroke-width=".6"/><path d="M141.79 13.61 A6.8 6.8 0 0 1 140.71 5.40" stroke="#f4f6f8" stroke-width="1.500" fill="none"/><path d="M145.56 8.20 L140.97 5.55" stroke="#f4f6f8" stroke-width="1.500" stroke-linecap="round"/>
<circle cx="165.3" cy="8.8" r="6.2" fill="url(#kg)" stroke="#2b2f34" stroke-width=".6"/><path d="M165.30 7.60 L165.30 2.30" stroke="#f4f6f8" stroke-width="1.500" stroke-linecap="round"/>
</svg>
<div class="kl" style="left:140.800px;transform:scaleX(.68)">VOL</div>
<div class="kl" style="left:159.200px;transform:scaleX(.83)">PAN</div>
</div>
<div class="trk" style="top:355.40px;height:25.10px">
<div class="abs" style="left:-1px;top:8.300px;width:3.200px;height:5.400px;background:#23272d;box-shadow:0 0 0 .7px #c4c9ce"></div>
<svg class="abs" style="left:9px;top:3px" width="19" height="19" viewBox="0 0 19 19"><circle cx="9.500" cy="9.500" r="8.300" fill="none" stroke="#d4d9de" stroke-width=".9"/><circle cx="9.500" cy="9.500" r="5.600" fill="none" stroke="#d4d9de" stroke-width=".9"/></svg>
<div class="tn" style="left:31px;max-width:97.6px">SEGuitar</div>
<div class="abs" style="left:131px;top:3.500px;width:1.200px;height:18px;background:#4d5763"></div><div class="abs" style="left:132.200px;top:3.500px;width:3px;height:1px;background:#4d5763"></div>
<svg class="abs" style="left:136px;top:0" width="41" height="25" viewBox="136 0 41 25">
<circle cx="146.6" cy="8.8" r="6.2" fill="url(#kg)" stroke="#2b2f34" stroke-width=".6"/><path d="M141.79 13.61 A6.8 6.8 0 0 1 140.44 11.67" stroke="#f4f6f8" stroke-width="1.500" fill="none"/><path d="M145.51 9.31 L140.71 11.55" stroke="#f4f6f8" stroke-width="1.500" stroke-linecap="round"/>
<circle cx="165.3" cy="8.8" r="6.2" fill="url(#kg)" stroke="#2b2f34" stroke-width=".6"/><path d="M165.30 7.60 L165.30 2.30" stroke="#f4f6f8" stroke-width="1.500" stroke-linecap="round"/>
</svg>
<div class="kl" style="left:140.800px;transform:scaleX(.68)">VOL</div>
<div class="kl" style="left:159.200px;transform:scaleX(.83)">PAN</div>
</div>
<div class="trk" style="top:380.20px;height:25.10px">
<div class="abs" style="left:-1px;top:8.300px;width:3.200px;height:5.400px;background:#23272d;box-shadow:0 0 0 .7px #c4c9ce"></div>
<svg class="abs" style="left:9px;top:3px" width="19" height="19" viewBox="0 0 19 19"><circle cx="9.500" cy="9.500" r="8.300" fill="none" stroke="#d4d9de" stroke-width=".9"/><circle cx="9.500" cy="9.500" r="5.600" fill="none" stroke="#d4d9de" stroke-width=".9"/></svg>
<div class="tn" style="left:31px;max-width:97.6px">SEGuitar Wobble</div>
<div class="abs" style="left:131px;top:3.500px;width:1.200px;height:18px;background:#4d5763"></div><div class="abs" style="left:132.200px;top:3.500px;width:3px;height:1px;background:#4d5763"></div>
<svg class="abs" style="left:136px;top:0" width="41" height="25" viewBox="136 0 41 25">
<circle cx="146.6" cy="8.8" r="6.2" fill="url(#kg)" stroke="#2b2f34" stroke-width=".6"/><path d="M141.79 13.61 A6.8 6.8 0 0 1 140.21 11.13" stroke="#f4f6f8" stroke-width="1.500" fill="none"/><path d="M145.47 9.21 L140.49 11.02" stroke="#f4f6f8" stroke-width="1.500" stroke-linecap="round"/>
<circle cx="165.3" cy="8.8" r="6.2" fill="url(#kg)" stroke="#2b2f34" stroke-width=".6"/><path d="M165.30 7.60 L165.30 2.30" stroke="#f4f6f8" stroke-width="1.500" stroke-linecap="round"/>
</svg>
<div class="kl" style="left:140.800px;transform:scaleX(.68)">VOL</div>
<div class="kl" style="left:159.200px;transform:scaleX(.83)">PAN</div>
</div>
<div class="trk" style="top:405.00px;height:25.10px">
<div class="abs" style="left:-1px;top:8.300px;width:3.200px;height:5.400px;background:#23272d;box-shadow:0 0 0 .7px #c4c9ce"></div>
<svg class="abs" style="left:10.800px;top:4.600px" width="13" height="14" viewBox="0 0 15 16"><defs><radialGradient id="gn" cx=".4" cy=".6" r=".7"><stop offset="0" stop-color="#5ee87a"/><stop offset="1" stop-color="#25a144"/></radialGradient></defs><path d="M9.600 12 V1 h2.400 V12" fill="#2aa84a" stroke="#1d7a33" stroke-width=".7"/><ellipse cx="5.800" cy="11.800" rx="5.400" ry="3.700" fill="url(#gn)" stroke="#1d7a33" stroke-width=".7"/></svg>
<div class="tn" style="left:28px;max-width:100.6px">Main Vocals (jarren_benton</div>
<svg class="abs" style="left:136px;top:0" width="41" height="25" viewBox="136 0 41 25">
<circle cx="146.6" cy="8.8" r="6.2" fill="url(#kg)" stroke="#2b2f34" stroke-width=".6"/><path d="M141.79 13.61 A6.8 6.8 0 0 1 147.19 2.03" stroke="#f4f6f8" stroke-width="1.500" fill="none"/><path d="M146.70 7.60 L147.17 2.32" stroke="#f4f6f8" stroke-width="1.500" stroke-linecap="round"/>
</svg>
<div class="kl" style="left:140.800px;transform:scaleX(.68)">VOL</div>
</div>
<div class="trk" style="top:429.80px;height:25.10px">
<div class="abs" style="left:-1px;top:8.300px;width:3.200px;height:5.400px;background:#23272d;box-shadow:0 0 0 .7px #c4c9ce"></div>
<svg class="abs" style="left:10.700px;top:3.700px" width="16.500" height="15.500" viewBox="0 0 17 17"><path d="M3 1.500 l2.800 3.500 M14 1.500 l-2.800 3.500" stroke="#1a1a1a" stroke-width="3" stroke-linecap="round"/><path d="M3 1.500 l2.800 3.500 M14 1.500 l-2.800 3.500" stroke="#f0f0f0" stroke-width="1.400" stroke-linecap="round"/><g fill="#f6f6f6" stroke="#1a1a1a" stroke-width=".9"><path d="M3 4.500 h11 v2 h2 v5 h-2 v2 h-2 v2 h-2.500 v-2 h-2 v2 h-2.500 v-2 h-2 v-2 h-2 v-5 h2 z"/></g><rect x="5" y="7" width="2" height="2.500" fill="#111"/><rect x="10" y="7" width="2" height="2.500" fill="#111"/></svg>
<div class="tn" style="left:31px;max-width:97.6px">BitBass</div>
<div class="abs" style="left:131px;top:3.500px;width:1.200px;height:18px;background:#4d5763"></div><div class="abs" style="left:132.200px;top:3.500px;width:3px;height:1px;background:#4d5763"></div>
<svg class="abs" style="left:136px;top:0" width="41" height="25" viewBox="136 0 41 25">
<circle cx="146.6" cy="8.8" r="6.2" fill="url(#kg)" stroke="#2b2f34" stroke-width=".6"/><path d="M141.79 13.61 A6.8 6.8 0 0 1 147.78 2.10" stroke="#f4f6f8" stroke-width="1.500" fill="none"/><path d="M146.81 7.62 L147.73 2.40" stroke="#f4f6f8" stroke-width="1.500" stroke-linecap="round"/>
<circle cx="165.3" cy="8.8" r="6.2" fill="url(#kg)" stroke="#2b2f34" stroke-width=".6"/><path d="M165.30 7.60 L165.30 2.30" stroke="#f4f6f8" stroke-width="1.500" stroke-linecap="round"/>
</svg>
<div class="kl" style="left:140.800px;transform:scaleX(.68)">VOL</div>
<div class="kl" style="left:159.200px;transform:scaleX(.83)">PAN</div>
</div>
<div class="trk" style="top:454.60px;height:25.10px">
<div class="abs" style="left:-1px;top:8.300px;width:3.200px;height:5.400px;background:#23272d;box-shadow:0 0 0 .7px #c4c9ce"></div>
<svg class="abs" style="left:9.200px;top:1.900px" width="19" height="18.300" viewBox="0 0 19 18"><defs><linearGradient id="sg" x1="0" y1="0" x2="1" y2="0"><stop offset="0" stop-color="#0c3a16"/><stop offset=".5" stop-color="#1f9a3c"/><stop offset="1" stop-color="#2aa848"/></linearGradient></defs><rect x="0" y="0" width="15" height="17.500" fill="#86aa94"/><rect x="0" y="9.500" width="15" height="8" fill="#7f9fa6"/><rect x="15" y="0.500" width="3.800" height="17" fill="url(#sg)"/><path d="M0 9 Q4 -4 7.500 4.500 T15 1" stroke="#e9f3ea" stroke-width="1" fill="none"/><g fill="#dfe8ea"><rect x="2" y="11" width="2.500" height="2.500"/><rect x="6" y="11" width="2.500" height="2.500"/><rect x="10" y="11" width="2.500" height="2.500"/><rect x="2" y="14.500" width="2.500" height="2.500"/><rect x="6" y="14.500" width="2.500" height="2.500"/><rect x="10" y="14.500" width="2.500" height="2.500"/></g></svg>
<div class="tn" style="left:31px;max-width:97.6px">0038 Slow Saw</div>
<div class="abs" style="left:131px;top:3.500px;width:1.200px;height:18px;background:#4d5763"></div><div class="abs" style="left:132.200px;top:3.500px;width:3px;height:1px;background:#4d5763"></div>
<svg class="abs" style="left:136px;top:0" width="41" height="25" viewBox="136 0 41 25">
<circle cx="146.6" cy="8.8" r="6.2" fill="url(#kg)" stroke="#2b2f34" stroke-width=".6"/><path d="M141.79 13.61 A6.8 6.8 0 0 1 140.44 5.93" stroke="#f4f6f8" stroke-width="1.500" fill="none"/><path d="M145.51 8.29 L140.71 6.05" stroke="#f4f6f8" stroke-width="1.500" stroke-linecap="round"/>
<circle cx="165.3" cy="8.8" r="6.2" fill="url(#kg)" stroke="#2b2f34" stroke-width=".6"/><path d="M165.30 7.60 L165.30 2.30" stroke="#f4f6f8" stroke-width="1.500" stroke-linecap="round"/>
</svg>
<div class="kl" style="left:140.800px;transform:scaleX(.68)">VOL</div>
<div class="kl" style="left:159.200px;transform:scaleX(.83)">PAN</div>
</div>
<div class="trk" style="top:479.40px;height:25.10px">
<div class="abs" style="left:-1px;top:8.300px;width:3.200px;height:5.400px;background:#23272d;box-shadow:0 0 0 .7px #c4c9ce"></div>
<svg class="abs" style="left:9.200px;top:1.900px" width="19" height="18.300" viewBox="0 0 19 18"><defs><linearGradient id="sg" x1="0" y1="0" x2="1" y2="0"><stop offset="0" stop-color="#0c3a16"/><stop offset=".5" stop-color="#1f9a3c"/><stop offset="1" stop-color="#2aa848"/></linearGradient></defs><rect x="0" y="0" width="15" height="17.500" fill="#86aa94"/><rect x="0" y="9.500" width="15" height="8" fill="#7f9fa6"/><rect x="15" y="0.500" width="3.800" height="17" fill="url(#sg)"/><path d="M0 9 Q4 -4 7.500 4.500 T15 1" stroke="#e9f3ea" stroke-width="1" fill="none"/><g fill="#dfe8ea"><rect x="2" y="11" width="2.500" height="2.500"/><rect x="6" y="11" width="2.500" height="2.500"/><rect x="10" y="11" width="2.500" height="2.500"/><rect x="2" y="14.500" width="2.500" height="2.500"/><rect x="6" y="14.500" width="2.500" height="2.500"/><rect x="10" y="14.500" width="2.500" height="2.500"/></g></svg>
<div class="tn" style="left:31px;max-width:97.6px">0038 Slow Saw</div>
<div class="abs" style="left:131px;top:3.500px;width:1.200px;height:18px;background:#4d5763"></div><div class="abs" style="left:132.200px;top:3.500px;width:3px;height:1px;background:#4d5763"></div>
<svg class="abs" style="left:136px;top:0" width="41" height="25" viewBox="136 0 41 25">
<circle cx="146.6" cy="8.8" r="6.2" fill="url(#kg)" stroke="#2b2f34" stroke-width=".6"/><path d="M141.79 13.61 A6.8 6.8 0 0 1 142.70 3.23" stroke="#f4f6f8" stroke-width="1.500" fill="none"/><path d="M145.91 7.82 L142.87 3.48" stroke="#f4f6f8" stroke-width="1.500" stroke-linecap="round"/>
<circle cx="165.3" cy="8.8" r="6.2" fill="url(#kg)" stroke="#2b2f34" stroke-width=".6"/><path d="M165.30 7.60 L165.30 2.30" stroke="#f4f6f8" stroke-width="1.500" stroke-linecap="round"/>
</svg>
<div class="kl" style="left:140.800px;transform:scaleX(.68)">VOL</div>
<div class="kl" style="left:159.200px;transform:scaleX(.83)">PAN</div>
</div>
<div class="trk" style="top:504.20px;height:25.10px">
<div class="abs" style="left:-1px;top:8.300px;width:3.200px;height:5.400px;background:#23272d;box-shadow:0 0 0 .7px #c4c9ce"></div>
<svg class="abs" style="left:8px;top:2.500px" width="21" height="20" viewBox="0 0 21 20"><path d="M2 18.500 L8.500 8 L13 12 L4 19.500 Z" fill="#e8e01f" stroke="#8a8510" stroke-width=".7"/><circle cx="14" cy="7" r="5.600" fill="#45d84a" stroke="#1f8a2a" stroke-width=".8"/><circle cx="12.500" cy="5.500" r="2" fill="#9af09a" opacity=".7"/></svg>
<div class="tn" style="left:30.5px;max-width:98.1px">Default</div>
<div class="abs" style="left:131px;top:3.500px;width:1.200px;height:18px;background:#4d5763"></div><div class="abs" style="left:132.200px;top:3.500px;width:3px;height:1px;background:#4d5763"></div>
<svg class="abs" style="left:136px;top:0" width="41" height="25" viewBox="136 0 41 25">
<circle cx="146.6" cy="8.8" r="6.2" fill="url(#kg)" stroke="#2b2f34" stroke-width=".6"/><path d="M141.79 13.61 A6.8 6.8 0 0 1 140.21 11.13" stroke="#f4f6f8" stroke-width="1.500" fill="none"/><path d="M145.47 9.21 L140.49 11.02" stroke="#f4f6f8" stroke-width="1.500" stroke-linecap="round"/>
<circle cx="165.3" cy="8.8" r="6.2" fill="url(#kg)" stroke="#2b2f34" stroke-width=".6"/><path d="M165.30 7.60 L165.30 2.30" stroke="#f4f6f8" stroke-width="1.500" stroke-linecap="round"/>
</svg>
<div class="kl" style="left:140.800px;transform:scaleX(.68)">VOL</div>
<div class="kl" style="left:159.200px;transform:scaleX(.83)">PAN</div>
</div>
<div class="trk" style="top:529.00px;height:25.10px">
<div class="abs" style="left:-1px;top:8.300px;width:3.200px;height:5.400px;background:#23272d;box-shadow:0 0 0 .7px #c4c9ce"></div>
<svg class="abs" style="left:9px;top:3px" width="19" height="20" viewBox="0 0 19 20"><path d="M8.500 2.500 L17.500 1 L15.200 6.200 L10.300 6.800 L10.300 14.500 L8.500 14.500 Z" fill="#eaf0fb" stroke="#8ea6d8" stroke-width=".8"/><ellipse cx="6" cy="14.800" rx="4.900" ry="3.500" fill="#f1f4fb" stroke="#8ea6d8" stroke-width=".8"/><path d="M2.500 16.500 q3.500 2.200 7 -.5" stroke="#b8c8ea" stroke-width="1" fill="none"/></svg>
<div class="tn" style="left:31px;max-width:97.6px">start01.ogg</div>
<div class="abs" style="left:131px;top:3.500px;width:1.200px;height:18px;background:#4d5763"></div><div class="abs" style="left:132.200px;top:3.500px;width:3px;height:1px;background:#4d5763"></div>
<svg class="abs" style="left:136px;top:0" width="41" height="25" viewBox="136 0 41 25">
<circle cx="146.6" cy="8.8" r="6.2" fill="url(#kg)" stroke="#2b2f34" stroke-width=".6"/><path d="M141.79 13.61 A6.8 6.8 0 0 1 139.90 9.98" stroke="#f4f6f8" stroke-width="1.500" fill="none"/><path d="M145.42 9.01 L140.20 9.93" stroke="#f4f6f8" stroke-width="1.500" stroke-linecap="round"/>
<circle cx="165.3" cy="8.8" r="6.2" fill="url(#kg)" stroke="#2b2f34" stroke-width=".6"/><path d="M165.30 7.60 L165.30 2.30" stroke="#f4f6f8" stroke-width="1.500" stroke-linecap="round"/>
</svg>
<div class="kl" style="left:140.800px;transform:scaleX(.68)">VOL</div>
<div class="kl" style="left:159.200px;transform:scaleX(.83)">PAN</div>
</div>
<div class="trk" style="top:553.80px;height:25.10px">
<div class="abs" style="left:-1px;top:8.300px;width:3.200px;height:5.400px;background:#23272d;box-shadow:0 0 0 .7px #c4c9ce"></div>
<svg class="abs" style="left:9px;top:3px" width="19" height="20" viewBox="0 0 19 20"><path d="M8.500 2.500 L17.500 1 L15.200 6.200 L10.300 6.800 L10.300 14.500 L8.500 14.500 Z" fill="#eaf0fb" stroke="#8ea6d8" stroke-width=".8"/><ellipse cx="6" cy="14.800" rx="4.900" ry="3.500" fill="#f1f4fb" stroke="#8ea6d8" stroke-width=".8"/><path d="M2.500 16.500 q3.500 2.200 7 -.5" stroke="#b8c8ea" stroke-width="1" fill="none"/></svg>
<div class="tn" style="left:31px;max-width:97.6px">space_strings01.ogg</div>
<div class="abs" style="left:131px;top:3.500px;width:1.200px;height:18px;background:#4d5763"></div><div class="abs" style="left:132.200px;top:3.500px;width:3px;height:1px;background:#4d5763"></div>
<svg class="abs" style="left:136px;top:0" width="41" height="25" viewBox="136 0 41 25">
<circle cx="146.6" cy="8.8" r="6.2" fill="url(#kg)" stroke="#2b2f34" stroke-width=".6"/><path d="M141.79 13.61 A6.8 6.8 0 0 1 140.21 6.47" stroke="#f4f6f8" stroke-width="1.500" fill="none"/><path d="M145.47 8.39 L140.49 6.58" stroke="#f4f6f8" stroke-width="1.500" stroke-linecap="round"/>
<circle cx="165.3" cy="8.8" r="6.2" fill="url(#kg)" stroke="#2b2f34" stroke-width=".6"/><path d="M165.30 7.60 L165.30 2.30" stroke="#f4f6f8" stroke-width="1.500" stroke-linecap="round"/>
</svg>
<div class="kl" style="left:140.800px;transform:scaleX(.68)">VOL</div>
<div class="kl" style="left:159.200px;transform:scaleX(.83)">PAN</div>
</div>
<div class="trk" style="top:578.60px;height:25.10px">
<div class="abs" style="left:-1px;top:8.300px;width:3.200px;height:5.400px;background:#23272d;box-shadow:0 0 0 .7px #c4c9ce"></div>
<svg class="abs" style="left:8.500px;top:3px" width="20" height="19" viewBox="0 0 20 19"><path d="M11 8 Q15 7 18.500 1 Q18 6 14.500 10 Z" fill="#f05a1e"/><path d="M12 8 Q15 6.500 17 3.500" stroke="#f9b02a" stroke-width="1" fill="none"/><circle cx="7.500" cy="11.500" r="6.300" fill="#fafafa" stroke="#333" stroke-width=".7"/><path d="M7.500 9 l2.400 1.700 l-.9 2.800 h-3 l-.9 -2.800 z" fill="#1b1b1b"/><circle cx="3" cy="8.500" r="1.200" fill="#1b1b1b"/><circle cx="12.500" cy="13.500" r="1.300" fill="#1b1b1b"/><circle cx="5.500" cy="16.500" r="1.200" fill="#1b1b1b"/></svg>
<div class="tn" style="left:31px;max-width:97.6px">wind the shit out of it</div>
<div class="abs" style="left:131px;top:3.500px;width:1.200px;height:18px;background:#4d5763"></div><div class="abs" style="left:132.200px;top:3.500px;width:3px;height:1px;background:#4d5763"></div>
<svg class="abs" style="left:136px;top:0" width="41" height="25" viewBox="136 0 41 25">
<circle cx="146.6" cy="8.8" r="6.2" fill="url(#kg)" stroke="#2b2f34" stroke-width=".6"/><path d="M141.79 13.61 A6.8 6.8 0 0 1 141.39 4.43" stroke="#f4f6f8" stroke-width="1.500" fill="none"/><path d="M145.68 8.03 L141.62 4.62" stroke="#f4f6f8" stroke-width="1.500" stroke-linecap="round"/>
<circle cx="165.3" cy="8.8" r="6.2" fill="url(#kg)" stroke="#2b2f34" stroke-width=".6"/><path d="M165.30 7.60 L165.30 2.30" stroke="#f4f6f8" stroke-width="1.500" stroke-linecap="round"/>
</svg>
<div class="kl" style="left:140.800px;transform:scaleX(.68)">VOL</div>
<div class="kl" style="left:159.200px;transform:scaleX(.83)">PAN</div>
</div>
<div class="trk" style="top:603.40px;height:25.10px">
<div class="abs" style="left:-1px;top:8.300px;width:3.200px;height:5.400px;background:#23272d;box-shadow:0 0 0 .7px #c4c9ce"></div>
<svg class="abs" style="left:9px;top:3px" width="19" height="20" viewBox="0 0 19 20"><path d="M8.500 2.500 L17.500 1 L15.200 6.200 L10.300 6.800 L10.300 14.500 L8.500 14.500 Z" fill="#eaf0fb" stroke="#8ea6d8" stroke-width=".8"/><ellipse cx="6" cy="14.800" rx="4.900" ry="3.500" fill="#f1f4fb" stroke="#8ea6d8" stroke-width=".8"/><path d="M2.500 16.500 q3.500 2.200 7 -.5" stroke="#b8c8ea" stroke-width="1" fill="none"/></svg>
<div class="tn" style="left:31px;max-width:97.6px">&quot;Lean&quot; (jarren_benton_lea</div>
<div class="abs" style="left:131px;top:3.500px;width:1.200px;height:18px;background:#4d5763"></div><div class="abs" style="left:132.200px;top:3.500px;width:3px;height:1px;background:#4d5763"></div>
<svg class="abs" style="left:136px;top:0" width="41" height="25" viewBox="136 0 41 25">
<circle cx="146.6" cy="8.8" r="6.2" fill="url(#kg)" stroke="#2b2f34" stroke-width=".6"/><path d="M141.79 13.61 A6.8 6.8 0 0 1 147.78 2.10" stroke="#f4f6f8" stroke-width="1.500" fill="none"/><path d="M146.81 7.62 L147.73 2.40" stroke="#f4f6f8" stroke-width="1.500" stroke-linecap="round"/>
<circle cx="165.3" cy="8.8" r="6.2" fill="url(#kg)" stroke="#2b2f34" stroke-width=".6"/><path d="M165.30 7.60 L165.30 2.30" stroke="#f4f6f8" stroke-width="1.500" stroke-linecap="round"/>
</svg>
<div class="kl" style="left:140.800px;transform:scaleX(.68)">VOL</div>
<div class="kl" style="left:159.200px;transform:scaleX(.83)">PAN</div>
</div>
<div class="trk" style="top:628.20px;height:25.10px">
<div class="abs" style="left:-1px;top:8.300px;width:3.200px;height:5.400px;background:#23272d;box-shadow:0 0 0 .7px #c4c9ce"></div>
<svg class="abs" style="left:9px;top:3px" width="19" height="20" viewBox="0 0 19 20"><path d="M8.500 2.500 L17.500 1 L15.200 6.200 L10.300 6.800 L10.300 14.500 L8.500 14.500 Z" fill="#eaf0fb" stroke="#8ea6d8" stroke-width=".8"/><ellipse cx="6" cy="14.800" rx="4.900" ry="3.500" fill="#f1f4fb" stroke="#8ea6d8" stroke-width=".8"/><path d="M2.500 16.500 q3.500 2.200 7 -.5" stroke="#b8c8ea" stroke-width="1" fill="none"/></svg>
<div class="tn" style="left:31px;max-width:97.6px">Pouring (jarren_benton_le</div>
<div class="abs" style="left:131px;top:3.500px;width:1.200px;height:18px;background:#4d5763"></div><div class="abs" style="left:132.200px;top:3.500px;width:3px;height:1px;background:#4d5763"></div>
<svg class="abs" style="left:136px;top:0" width="41" height="25" viewBox="136 0 41 25">
<circle cx="146.6" cy="8.8" r="6.2" fill="url(#kg)" stroke="#2b2f34" stroke-width=".6"/><path d="M141.79 13.61 A6.8 6.8 0 0 1 147.78 2.10" stroke="#f4f6f8" stroke-width="1.500" fill="none"/><path d="M146.81 7.62 L147.73 2.40" stroke="#f4f6f8" stroke-width="1.500" stroke-linecap="round"/>
<circle cx="165.3" cy="8.8" r="6.2" fill="url(#kg)" stroke="#2b2f34" stroke-width=".6"/><path d="M165.30 7.60 L165.30 2.30" stroke="#f4f6f8" stroke-width="1.500" stroke-linecap="round"/>
</svg>
<div class="kl" style="left:140.800px;transform:scaleX(.68)">VOL</div>
<div class="kl" style="left:159.200px;transform:scaleX(.83)">PAN</div>
</div>
<div class="trk" style="top:653.00px;height:25.10px">
<div class="abs" style="left:-1px;top:8.300px;width:3.200px;height:5.400px;background:#23272d;box-shadow:0 0 0 .7px #c4c9ce"></div>
<svg class="abs" style="left:9px;top:3px" width="19" height="20" viewBox="0 0 19 20"><path d="M8.500 2.500 L17.500 1 L15.200 6.200 L10.300 6.800 L10.300 14.500 L8.500 14.500 Z" fill="#eaf0fb" stroke="#8ea6d8" stroke-width=".8"/><ellipse cx="6" cy="14.800" rx="4.900" ry="3.500" fill="#f1f4fb" stroke="#8ea6d8" stroke-width=".8"/><path d="M2.500 16.500 q3.500 2.200 7 -.5" stroke="#b8c8ea" stroke-width="1" fill="none"/></svg>
<div class="tn" style="left:31px;max-width:97.6px">detonate.ds</div>
<div class="abs" style="left:131px;top:3.500px;width:1.200px;height:18px;background:#4d5763"></div><div class="abs" style="left:132.200px;top:3.500px;width:3px;height:1px;background:#4d5763"></div>
<svg class="abs" style="left:136px;top:0" width="41" height="25" viewBox="136 0 41 25">
<circle cx="146.6" cy="8.8" r="6.2" fill="url(#kg)" stroke="#2b2f34" stroke-width=".6"/><path d="M141.79 13.61 A6.8 6.8 0 0 1 151.41 3.99" stroke="#f4f6f8" stroke-width="1.500" fill="none"/><path d="M147.45 7.95 L151.20 4.20" stroke="#f4f6f8" stroke-width="1.500" stroke-linecap="round"/>
<circle cx="165.3" cy="8.8" r="6.2" fill="url(#kg)" stroke="#2b2f34" stroke-width=".6"/><path d="M165.30 7.60 L165.30 2.30" stroke="#f4f6f8" stroke-width="1.500" stroke-linecap="round"/>
</svg>
<div class="kl" style="left:140.800px;transform:scaleX(.68)">VOL</div>
<div class="kl" style="left:159.200px;transform:scaleX(.83)">PAN</div>
</div>
<div class="trk" style="top:677.80px;height:25.10px">
<div class="abs" style="left:-1px;top:8.300px;width:3.200px;height:5.400px;background:#23272d;box-shadow:0 0 0 .7px #c4c9ce"></div>
<svg class="abs" style="left:9px;top:3px" width="19" height="20" viewBox="0 0 19 20"><path d="M8.500 2.500 L17.500 1 L15.200 6.200 L10.300 6.800 L10.300 14.500 L8.500 14.500 Z" fill="#eaf0fb" stroke="#8ea6d8" stroke-width=".8"/><ellipse cx="6" cy="14.800" rx="4.900" ry="3.500" fill="#f1f4fb" stroke="#8ea6d8" stroke-width=".8"/><path d="M2.500 16.500 q3.500 2.200 7 -.5" stroke="#b8c8ea" stroke-width="1" fill="none"/></svg>
<div class="tn" style="left:31px;max-width:97.6px">wipeout.ds</div>
<div class="abs" style="left:131px;top:3.500px;width:1.200px;height:18px;background:#4d5763"></div><div class="abs" style="left:132.200px;top:3.500px;width:3px;height:1px;background:#4d5763"></div>
<svg class="abs" style="left:136px;top:0" width="41" height="25" viewBox="136 0 41 25">
<circle cx="146.6" cy="8.8" r="6.2" fill="url(#kg)" stroke="#2b2f34" stroke-width=".6"/><path d="M141.79 13.61 A6.8 6.8 0 0 1 141.79 3.99" stroke="#f4f6f8" stroke-width="1.500" fill="none"/><path d="M145.75 7.95 L142.00 4.20" stroke="#f4f6f8" stroke-width="1.500" stroke-linecap="round"/>
<circle cx="165.3" cy="8.8" r="6.2" fill="url(#kg)" stroke="#2b2f34" stroke-width=".6"/><path d="M165.30 7.60 L165.30 2.30" stroke="#f4f6f8" stroke-width="1.500" stroke-linecap="round"/>
</svg>
<div class="kl" style="left:140.800px;transform:scaleX(.68)">VOL</div>
<div class="kl" style="left:159.200px;transform:scaleX(.83)">PAN</div>
</div>
<div class="trk" style="top:702.60px;height:25.10px">
<div class="abs" style="left:-1px;top:8.300px;width:3.200px;height:5.400px;background:#23272d;box-shadow:0 0 0 .7px #c4c9ce"></div>
<svg class="abs" style="left:9px;top:3px" width="19" height="20" viewBox="0 0 19 20"><path d="M8.500 2.500 L17.500 1 L15.200 6.200 L10.300 6.800 L10.300 14.500 L8.500 14.500 Z" fill="#eaf0fb" stroke="#8ea6d8" stroke-width=".8"/><ellipse cx="6" cy="14.800" rx="4.900" ry="3.500" fill="#f1f4fb" stroke="#8ea6d8" stroke-width=".8"/><path d="M2.500 16.500 q3.500 2.200 7 -.5" stroke="#b8c8ea" stroke-width="1" fill="none"/></svg>
<div class="tn" style="left:31px;max-width:97.6px"></div>
<div class="abs" style="left:131px;top:3.500px;width:1.200px;height:18px;background:#4d5763"></div><div class="abs" style="left:132.200px;top:3.500px;width:3px;height:1px;background:#4d5763"></div>
<svg class="abs" style="left:136px;top:0" width="41" height="25" viewBox="136 0 41 25">
<circle cx="146.6" cy="8.8" r="6.2" fill="url(#kg)" stroke="#2b2f34" stroke-width=".6"/><path d="M141.79 13.61 A6.8 6.8 0 0 1 146.60 2.00" stroke="#f4f6f8" stroke-width="1.500" fill="none"/><path d="M146.60 7.60 L146.60 2.30" stroke="#f4f6f8" stroke-width="1.500" stroke-linecap="round"/>
<circle cx="165.3" cy="8.8" r="6.2" fill="url(#kg)" stroke="#2b2f34" stroke-width=".6"/><path d="M165.30 7.60 L165.30 2.30" stroke="#f4f6f8" stroke-width="1.500" stroke-linecap="round"/>
</svg>
<div class="kl" style="left:140.800px;transform:scaleX(.68)">VOL</div>
<div class="kl" style="left:159.200px;transform:scaleX(.83)">PAN</div>
</div>
<div class="abs" style="left:0;top:106.700px;width:177px;height:1px;background:#5c6773"></div>
<div class="abs" style="left:175.800px;top:106.500px;width:2px;height:603px;background:#8b9197"></div>
<div class="clip bb" style="left:375.50px;top:108.30px;width:173.60px;height:22.3px;background:linear-gradient(#a9ddd6,#8cc6bf 50%,#6fa9a3);border-color:#bfeee6"><div class="tk" style="left:23.50px;background:rgba(0,0,0,.35)"></div><div class="tk" style="left:23.50px;top:auto;bottom:0;background:rgba(255,255,255,.45)"></div><div class="tk" style="left:48.30px;background:rgba(0,0,0,.35)"></div><div class="tk" style="left:48.30px;top:auto;bottom:0;background:rgba(255,255,255,.45)"></div><div class="tk" style="left:73.10px;background:rgba(0,0,0,.35)"></div><div class="tk" style="left:73.10px;top:auto;bottom:0;background:rgba(255,255,255,.45)"></div><div class="tk" style="left:97.90px;background:rgba(0,0,0,.35)"></div><div class="tk" style="left:97.90px;top:auto;bottom:0;background:rgba(255,255,255,.45)"></div><div class="tk" style="left:122.70px;background:rgba(0,0,0,.35)"></div><div class="tk" style="left:122.70px;top:auto;bottom:0;background:rgba(255,255,255,.45)"></div><div class="tk" style="left:147.50px;background:rgba(0,0,0,.35)"></div><div class="tk" style="left:147.50px;top:auto;bottom:0;background:rgba(255,255,255,.45)"></div></div>
<div class="clip bb" style="left:772.30px;top:108.30px;width:99.20px;height:22.3px;background:linear-gradient(#a9ddd6,#8cc6bf 50%,#6fa9a3);border-color:#bfeee6"><div class="tk" style="left:23.50px;background:rgba(0,0,0,.35)"></div><div class="tk" style="left:23.50px;top:auto;bottom:0;background:rgba(255,255,255,.45)"></div><div class="tk" style="left:48.30px;background:rgba(0,0,0,.35)"></div><div class="tk" style="left:48.30px;top:auto;bottom:0;background:rgba(255,255,255,.45)"></div><div class="tk" style="left:73.10px;background:rgba(0,0,0,.35)"></div><div class="tk" style="left:73.10px;top:auto;bottom:0;background:rgba(255,255,255,.45)"></div></div>
<div class="clip bb" style="left:1169.10px;top:108.30px;width:111.90px;height:22.3px;background:linear-gradient(#a9ddd6,#8cc6bf 50%,#6fa9a3);border-color:#bfeee6"><div class="tk" style="left:23.50px;background:rgba(0,0,0,.35)"></div><div class="tk" style="left:23.50px;top:auto;bottom:0;background:rgba(255,255,255,.45)"></div><div class="tk" style="left:48.30px;background:rgba(0,0,0,.35)"></div><div class="tk" style="left:48.30px;top:auto;bottom:0;background:rgba(255,255,255,.45)"></div><div class="tk" style="left:73.10px;background:rgba(0,0,0,.35)"></div><div class="tk" style="left:73.10px;top:auto;bottom:0;background:rgba(255,255,255,.45)"></div><div class="tk" style="left:97.90px;background:rgba(0,0,0,.35)"></div><div class="tk" style="left:97.90px;top:auto;bottom:0;background:rgba(255,255,255,.45)"></div></div>
<div class="clip bb" style="left:573.90px;top:133.10px;width:99.20px;height:22.3px;background:linear-gradient(#3c3ce4,#2626cf 50%,#1515ad);border-color:#5b5bf0"><div class="tk" style="left:23.50px;background:rgba(0,0,0,.35)"></div><div class="tk" style="left:23.50px;top:auto;bottom:0;background:rgba(255,255,255,.45)"></div><div class="tk" style="left:48.30px;background:rgba(0,0,0,.35)"></div><div class="tk" style="left:48.30px;top:auto;bottom:0;background:rgba(255,255,255,.45)"></div><div class="tk" style="left:73.10px;background:rgba(0,0,0,.35)"></div><div class="tk" style="left:73.10px;top:auto;bottom:0;background:rgba(255,255,255,.45)"></div></div>
<div class="clip bb" style="left:871.50px;top:133.10px;width:74.40px;height:22.3px;background:linear-gradient(#3c3ce4,#2626cf 50%,#1515ad);border-color:#5b5bf0"><div class="tk" style="left:23.50px;background:rgba(0,0,0,.35)"></div><div class="tk" style="left:23.50px;top:auto;bottom:0;background:rgba(255,255,255,.45)"></div><div class="tk" style="left:48.30px;background:rgba(0,0,0,.35)"></div><div class="tk" style="left:48.30px;top:auto;bottom:0;background:rgba(255,255,255,.45)"></div></div>
<div class="clip bb" style="left:549.10px;top:157.90px;width:24.80px;height:22.3px;background:linear-gradient(#93f264,#6ad73c 50%,#43b31d);border-color:#b0f58c"></div>
<div class="clip bb" style="left:945.90px;top:157.90px;width:24.80px;height:22.3px;background:linear-gradient(#93f264,#6ad73c 50%,#43b31d);border-color:#b0f58c"></div>
<div class="clip bb" style="left:276.30px;top:182.70px;width:99.20px;height:22.3px;background:linear-gradient(#dc9cf9,#c077ea 50%,#a24fd2);border-color:#e6b8ff"><div class="tk" style="left:23.50px;background:rgba(0,0,0,.35)"></div><div class="tk" style="left:23.50px;top:auto;bottom:0;background:rgba(255,255,255,.45)"></div><div class="tk" style="left:48.30px;background:rgba(0,0,0,.35)"></div><div class="tk" style="left:48.30px;top:auto;bottom:0;background:rgba(255,255,255,.45)"></div><div class="tk" style="left:73.10px;background:rgba(0,0,0,.35)"></div><div class="tk" style="left:73.10px;top:auto;bottom:0;background:rgba(255,255,255,.45)"></div></div>
<div class="clip bb" style="left:673.10px;top:182.70px;width:99.20px;height:22.3px;background:linear-gradient(#dc9cf9,#c077ea 50%,#a24fd2);border-color:#e6b8ff"><div class="tk" style="left:23.50px;background:rgba(0,0,0,.35)"></div><div class="tk" style="left:23.50px;top:auto;bottom:0;background:rgba(255,255,255,.45)"></div><div class="tk" style="left:48.30px;background:rgba(0,0,0,.35)"></div><div class="tk" style="left:48.30px;top:auto;bottom:0;background:rgba(255,255,255,.45)"></div><div class="tk" style="left:73.10px;background:rgba(0,0,0,.35)"></div><div class="tk" style="left:73.10px;top:auto;bottom:0;background:rgba(255,255,255,.45)"></div></div>
<div class="clip bb" style="left:1045.10px;top:182.70px;width:24.80px;height:22.3px;background:linear-gradient(#dc9cf9,#c077ea 50%,#a24fd2);border-color:#e6b8ff"></div>
<div class="clip bb" style="left:1144.30px;top:182.70px;width:24.80px;height:22.3px;background:linear-gradient(#a9ddd6,#8cc6bf 50%,#6fa9a3);border-color:#bfeee6"></div>
<div class="clip pat" style="left:1268.30px;top:207.50px;width:12.70px;height:22.3px"><div class="n" style="left:0.0px;top:10.0px;width:10.2px;opacity:0.95"></div></div>
<div class="clip pat" style="left:276.30px;top:232.30px;width:99.20px;height:22.3px"><div class="n" style="left:3.6px;top:13.1px;width:10.0px;opacity:0.45"></div><div class="n" style="left:16.0px;top:13.1px;width:10.0px;opacity:0.45"></div><div class="n" style="left:28.4px;top:15.6px;width:10.0px;opacity:0.9"></div><div class="n" style="left:40.8px;top:15.6px;width:10.0px;opacity:0.9"></div><div class="n" style="left:53.2px;top:17.5px;width:10.0px;opacity:0.9"></div><div class="n" style="left:65.6px;top:17.5px;width:10.0px;opacity:0.9"></div><div class="n" style="left:78.0px;top:18.4px;width:10.0px;opacity:0.9"></div><div class="n" style="left:90.4px;top:18.4px;width:10.0px;opacity:0.9"></div><div class="n" style="left:37.7px;top:5.0px;width:4.2px;opacity:0.6"></div><div class="n" style="left:50.1px;top:4.2px;width:4.2px;opacity:0.6"></div><div class="n" style="left:62.5px;top:5.0px;width:4.2px;opacity:0.6"></div><div class="n" style="left:74.9px;top:4.2px;width:4.2px;opacity:0.6"></div><div class="n" style="left:87.3px;top:5.0px;width:4.2px;opacity:0.6"></div><div class="n" style="left:6.5px;top:1.2px;width:3.5px;opacity:0.7"></div><div class="tk" style="left:11.10px"></div><div class="tk" style="left:23.50px"></div><div class="tk" style="left:35.90px"></div><div class="tk" style="left:48.30px"></div><div class="tk" style="left:60.70px"></div><div class="tk" style="left:73.10px"></div><div class="tk" style="left:85.50px"></div><span>Slow Shit</span></div>
<div class="clip pat" style="left:375.50px;top:232.30px;width:99.20px;height:22.3px"><div class="n" style="left:3.6px;top:13.1px;width:10.0px;opacity:0.45"></div><div class="n" style="left:16.0px;top:13.1px;width:10.0px;opacity:0.45"></div><div class="n" style="left:28.4px;top:15.6px;width:10.0px;opacity:0.9"></div><div class="n" style="left:40.8px;top:15.6px;width:10.0px;opacity:0.9"></div><div class="n" style="left:53.2px;top:17.5px;width:10.0px;opacity:0.9"></div><div class="n" style="left:65.6px;top:17.5px;width:10.0px;opacity:0.9"></div><div class="n" style="left:78.0px;top:18.4px;width:10.0px;opacity:0.9"></div><div class="n" style="left:90.4px;top:18.4px;width:10.0px;opacity:0.9"></div><div class="n" style="left:37.7px;top:5.0px;width:4.2px;opacity:0.6"></div><div class="n" style="left:50.1px;top:4.2px;width:4.2px;opacity:0.6"></div><div class="n" style="left:62.5px;top:5.0px;width:4.2px;opacity:0.6"></div><div class="n" style="left:74.9px;top:4.2px;width:4.2px;opacity:0.6"></div><div class="n" style="left:87.3px;top:5.0px;width:4.2px;opacity:0.6"></div><div class="n" style="left:6.5px;top:1.2px;width:3.5px;opacity:0.7"></div><div class="tk" style="left:11.10px"></div><div class="tk" style="left:23.50px"></div><div class="tk" style="left:35.90px"></div><div class="tk" style="left:48.30px"></div><div class="tk" style="left:60.70px"></div><div class="tk" style="left:73.10px"></div><div class="tk" style="left:85.50px"></div><span>Slow Shit</span></div>
<div class="clip pat" style="left:474.70px;top:232.30px;width:99.20px;height:22.3px"><div class="n" style="left:3.6px;top:13.1px;width:10.0px;opacity:0.45"></div><div class="n" style="left:16.0px;top:13.1px;width:10.0px;opacity:0.45"></div><div class="n" style="left:28.4px;top:15.6px;width:10.0px;opacity:0.9"></div><div class="n" style="left:40.8px;top:15.6px;width:10.0px;opacity:0.9"></div><div class="n" style="left:53.2px;top:17.5px;width:10.0px;opacity:0.9"></div><div class="n" style="left:65.6px;top:17.5px;width:10.0px;opacity:0.9"></div><div class="n" style="left:78.0px;top:18.4px;width:10.0px;opacity:0.9"></div><div class="n" style="left:90.4px;top:18.4px;width:10.0px;opacity:0.9"></div><div class="n" style="left:37.7px;top:5.0px;width:4.2px;opacity:0.6"></div><div class="n" style="left:50.1px;top:4.2px;width:4.2px;opacity:0.6"></div><div class="n" style="left:62.5px;top:5.0px;width:4.2px;opacity:0.6"></div><div class="n" style="left:74.9px;top:4.2px;width:4.2px;opacity:0.6"></div><div class="n" style="left:87.3px;top:5.0px;width:4.2px;opacity:0.6"></div><div class="n" style="left:6.5px;top:1.2px;width:3.5px;opacity:0.7"></div><div class="tk" style="left:11.10px"></div><div class="tk" style="left:23.50px"></div><div class="tk" style="left:35.90px"></div><div class="tk" style="left:48.30px"></div><div class="tk" style="left:60.70px"></div><div class="tk" style="left:73.10px"></div><div class="tk" style="left:85.50px"></div><span>Slow Shit</span></div>
<div class="clip pat" style="left:673.10px;top:232.30px;width:99.20px;height:22.3px"><div class="n" style="left:3.6px;top:13.1px;width:10.0px;opacity:0.45"></div><div class="n" style="left:16.0px;top:13.1px;width:10.0px;opacity:0.45"></div><div class="n" style="left:28.4px;top:15.6px;width:10.0px;opacity:0.9"></div><div class="n" style="left:40.8px;top:15.6px;width:10.0px;opacity:0.9"></div><div class="n" style="left:53.2px;top:17.5px;width:10.0px;opacity:0.9"></div><div class="n" style="left:65.6px;top:17.5px;width:10.0px;opacity:0.9"></div><div class="n" style="left:78.0px;top:18.4px;width:10.0px;opacity:0.9"></div><div class="n" style="left:90.4px;top:18.4px;width:10.0px;opacity:0.9"></div><div class="n" style="left:37.7px;top:5.0px;width:4.2px;opacity:0.6"></div><div class="n" style="left:50.1px;top:4.2px;width:4.2px;opacity:0.6"></div><div class="n" style="left:62.5px;top:5.0px;width:4.2px;opacity:0.6"></div><div class="n" style="left:74.9px;top:4.2px;width:4.2px;opacity:0.6"></div><div class="n" style="left:87.3px;top:5.0px;width:4.2px;opacity:0.6"></div><div class="n" style="left:6.5px;top:1.2px;width:3.5px;opacity:0.7"></div><div class="tk" style="left:11.10px"></div><div class="tk" style="left:23.50px"></div><div class="tk" style="left:35.90px"></div><div class="tk" style="left:48.30px"></div><div class="tk" style="left:60.70px"></div><div class="tk" style="left:73.10px"></div><div class="tk" style="left:85.50px"></div><span>Slow Shit</span></div>
<div class="clip pat" style="left:970.70px;top:232.30px;width:99.20px;height:22.3px"><div class="n" style="left:3.6px;top:13.1px;width:10.0px;opacity:0.45"></div><div class="n" style="left:16.0px;top:13.1px;width:10.0px;opacity:0.45"></div><div class="n" style="left:28.4px;top:15.6px;width:10.0px;opacity:0.9"></div><div class="n" style="left:40.8px;top:15.6px;width:10.0px;opacity:0.9"></div><div class="n" style="left:53.2px;top:17.5px;width:10.0px;opacity:0.9"></div><div class="n" style="left:65.6px;top:17.5px;width:10.0px;opacity:0.9"></div><div class="n" style="left:78.0px;top:18.4px;width:10.0px;opacity:0.9"></div><div class="n" style="left:90.4px;top:18.4px;width:10.0px;opacity:0.9"></div><div class="n" style="left:37.7px;top:5.0px;width:4.2px;opacity:0.6"></div><div class="n" style="left:50.1px;top:4.2px;width:4.2px;opacity:0.6"></div><div class="n" style="left:62.5px;top:5.0px;width:4.2px;opacity:0.6"></div><div class="n" style="left:74.9px;top:4.2px;width:4.2px;opacity:0.6"></div><div class="n" style="left:87.3px;top:5.0px;width:4.2px;opacity:0.6"></div><div class="n" style="left:6.5px;top:1.2px;width:3.5px;opacity:0.7"></div><div class="tk" style="left:11.10px"></div><div class="tk" style="left:23.50px"></div><div class="tk" style="left:35.90px"></div><div class="tk" style="left:48.30px"></div><div class="tk" style="left:60.70px"></div><div class="tk" style="left:73.10px"></div><div class="tk" style="left:85.50px"></div><span>Slow Shit</span></div>
<div class="clip pat" style="left:1069.90px;top:232.30px;width:99.20px;height:22.3px"><div class="n" style="left:3.6px;top:13.1px;width:10.0px;opacity:0.45"></div><div class="n" style="left:16.0px;top:13.1px;width:10.0px;opacity:0.45"></div><div class="n" style="left:28.4px;top:15.6px;width:10.0px;opacity:0.9"></div><div class="n" style="left:40.8px;top:15.6px;width:10.0px;opacity:0.9"></div><div class="n" style="left:53.2px;top:17.5px;width:10.0px;opacity:0.9"></div><div class="n" style="left:65.6px;top:17.5px;width:10.0px;opacity:0.9"></div><div class="n" style="left:78.0px;top:18.4px;width:10.0px;opacity:0.9"></div><div class="n" style="left:90.4px;top:18.4px;width:10.0px;opacity:0.9"></div><div class="n" style="left:37.7px;top:5.0px;width:4.2px;opacity:0.6"></div><div class="n" style="left:50.1px;top:4.2px;width:4.2px;opacity:0.6"></div><div class="n" style="left:62.5px;top:5.0px;width:4.2px;opacity:0.6"></div><div class="n" style="left:74.9px;top:4.2px;width:4.2px;opacity:0.6"></div><div class="n" style="left:87.3px;top:5.0px;width:4.2px;opacity:0.6"></div><div class="n" style="left:6.5px;top:1.2px;width:3.5px;opacity:0.7"></div><div class="tk" style="left:11.10px"></div><div class="tk" style="left:23.50px"></div><div class="tk" style="left:35.90px"></div><div class="tk" style="left:48.30px"></div><div class="tk" style="left:60.70px"></div><div class="tk" style="left:73.10px"></div><div class="tk" style="left:85.50px"></div><span>Slow Shit</span></div>
<div class="clip pat" style="left:1169.10px;top:232.30px;width:99.20px;height:22.3px"><div class="n" style="left:3.6px;top:13.1px;width:10.0px;opacity:0.45"></div><div class="n" style="left:16.0px;top:13.1px;width:10.0px;opacity:0.45"></div><div class="n" style="left:28.4px;top:15.6px;width:10.0px;opacity:0.9"></div><div class="n" style="left:40.8px;top:15.6px;width:10.0px;opacity:0.9"></div><div class="n" style="left:53.2px;top:17.5px;width:10.0px;opacity:0.9"></div><div class="n" style="left:65.6px;top:17.5px;width:10.0px;opacity:0.9"></div><div class="n" style="left:78.0px;top:18.4px;width:10.0px;opacity:0.9"></div><div class="n" style="left:90.4px;top:18.4px;width:10.0px;opacity:0.9"></div><div class="n" style="left:37.7px;top:5.0px;width:4.2px;opacity:0.6"></div><div class="n" style="left:50.1px;top:4.2px;width:4.2px;opacity:0.6"></div><div class="n" style="left:62.5px;top:5.0px;width:4.2px;opacity:0.6"></div><div class="n" style="left:74.9px;top:4.2px;width:4.2px;opacity:0.6"></div><div class="n" style="left:87.3px;top:5.0px;width:4.2px;opacity:0.6"></div><div class="n" style="left:6.5px;top:1.2px;width:3.5px;opacity:0.7"></div><div class="tk" style="left:11.10px"></div><div class="tk" style="left:23.50px"></div><div class="tk" style="left:35.90px"></div><div class="tk" style="left:48.30px"></div><div class="tk" style="left:60.70px"></div><div class="tk" style="left:73.10px"></div><div class="tk" style="left:85.50px"></div><span>Slow Shit</span></div>
<div class="clip pat" style="left:1268.30px;top:232.30px;width:12.70px;height:22.3px"><div class="n" style="left:3.6px;top:13.1px;width:10.0px;opacity:0.45"></div><div class="n" style="left:16.0px;top:13.1px;width:10.0px;opacity:0.45"></div><div class="n" style="left:28.4px;top:15.6px;width:10.0px;opacity:0.9"></div><div class="n" style="left:40.8px;top:15.6px;width:10.0px;opacity:0.9"></div><div class="n" style="left:53.2px;top:17.5px;width:10.0px;opacity:0.9"></div><div class="n" style="left:65.6px;top:17.5px;width:10.0px;opacity:0.9"></div><div class="n" style="left:78.0px;top:18.4px;width:10.0px;opacity:0.9"></div><div class="n" style="left:90.4px;top:18.4px;width:10.0px;opacity:0.9"></div><div class="n" style="left:37.7px;top:5.0px;width:4.2px;opacity:0.6"></div><div class="n" style="left:50.1px;top:4.2px;width:4.2px;opacity:0.6"></div><div class="n" style="left:62.5px;top:5.0px;width:4.2px;opacity:0.6"></div><div class="n" style="left:74.9px;top:4.2px;width:4.2px;opacity:0.6"></div><div class="n" style="left:87.3px;top:5.0px;width:4.2px;opacity:0.6"></div><div class="n" style="left:6.5px;top:1.2px;width:3.5px;opacity:0.7"></div><span>Slow Shit</span></div>
<div class="clip pat" style="left:276.30px;top:257.10px;width:99.20px;height:22.3px"><div class="n" style="left:3.6px;top:13.1px;width:10.0px;opacity:0.45"></div><div class="n" style="left:16.0px;top:13.1px;width:10.0px;opacity:0.45"></div><div class="n" style="left:28.4px;top:15.6px;width:10.0px;opacity:0.9"></div><div class="n" style="left:40.8px;top:15.6px;width:10.0px;opacity:0.9"></div><div class="n" style="left:53.2px;top:17.5px;width:10.0px;opacity:0.9"></div><div class="n" style="left:65.6px;top:17.5px;width:10.0px;opacity:0.9"></div><div class="n" style="left:78.0px;top:18.4px;width:10.0px;opacity:0.9"></div><div class="n" style="left:90.4px;top:18.4px;width:10.0px;opacity:0.9"></div><div class="n" style="left:37.7px;top:5.0px;width:4.2px;opacity:0.6"></div><div class="n" style="left:50.1px;top:4.2px;width:4.2px;opacity:0.6"></div><div class="n" style="left:62.5px;top:5.0px;width:4.2px;opacity:0.6"></div><div class="n" style="left:74.9px;top:4.2px;width:4.2px;opacity:0.6"></div><div class="n" style="left:87.3px;top:5.0px;width:4.2px;opacity:0.6"></div><div class="n" style="left:6.5px;top:1.2px;width:3.5px;opacity:0.7"></div><div class="tk" style="left:11.10px"></div><div class="tk" style="left:23.50px"></div><div class="tk" style="left:35.90px"></div><div class="tk" style="left:48.30px"></div><div class="tk" style="left:60.70px"></div><div class="tk" style="left:73.10px"></div><div class="tk" style="left:85.50px"></div><span>Slow Shit</span></div>
<div class="clip pat" style="left:375.50px;top:257.10px;width:99.20px;height:22.3px"><div class="n" style="left:3.6px;top:13.1px;width:10.0px;opacity:0.45"></div><div class="n" style="left:16.0px;top:13.1px;width:10.0px;opacity:0.45"></div><div class="n" style="left:28.4px;top:15.6px;width:10.0px;opacity:0.9"></div><div class="n" style="left:40.8px;top:15.6px;width:10.0px;opacity:0.9"></div><div class="n" style="left:53.2px;top:17.5px;width:10.0px;opacity:0.9"></div><div class="n" style="left:65.6px;top:17.5px;width:10.0px;opacity:0.9"></div><div class="n" style="left:78.0px;top:18.4px;width:10.0px;opacity:0.9"></div><div class="n" style="left:90.4px;top:18.4px;width:10.0px;opacity:0.9"></div><div class="n" style="left:37.7px;top:5.0px;width:4.2px;opacity:0.6"></div><div class="n" style="left:50.1px;top:4.2px;width:4.2px;opacity:0.6"></div><div class="n" style="left:62.5px;top:5.0px;width:4.2px;opacity:0.6"></div><div class="n" style="left:74.9px;top:4.2px;width:4.2px;opacity:0.6"></div><div class="n" style="left:87.3px;top:5.0px;width:4.2px;opacity:0.6"></div><div class="n" style="left:6.5px;top:1.2px;width:3.5px;opacity:0.7"></div><div class="tk" style="left:11.10px"></div><div class="tk" style="left:23.50px"></div><div class="tk" style="left:35.90px"></div><div class="tk" style="left:48.30px"></div><div class="tk" style="left:60.70px"></div><div class="tk" style="left:73.10px"></div><div class="tk" style="left:85.50px"></div><span>Slow Shit</span></div>
<div class="clip pat" style="left:474.70px;top:257.10px;width:99.20px;height:22.3px"><div class="n" style="left:3.6px;top:13.1px;width:10.0px;opacity:0.45"></div><div class="n" style="left:16.0px;top:13.1px;width:10.0px;opacity:0.45"></div><div class="n" style="left:28.4px;top:15.6px;width:10.0px;opacity:0.9"></div><div class="n" style="left:40.8px;top:15.6px;width:10.0px;opacity:0.9"></div><div class="n" style="left:53.2px;top:17.5px;width:10.0px;opacity:0.9"></div><div class="n" style="left:65.6px;top:17.5px;width:10.0px;opacity:0.9"></div><div class="n" style="left:78.0px;top:18.4px;width:10.0px;opacity:0.9"></div><div class="n" style="left:90.4px;top:18.4px;width:10.0px;opacity:0.9"></div><div class="n" style="left:37.7px;top:5.0px;width:4.2px;opacity:0.6"></div><div class="n" style="left:50.1px;top:4.2px;width:4.2px;opacity:0.6"></div><div class="n" style="left:62.5px;top:5.0px;width:4.2px;opacity:0.6"></div><div class="n" style="left:74.9px;top:4.2px;width:4.2px;opacity:0.6"></div><div class="n" style="left:87.3px;top:5.0px;width:4.2px;opacity:0.6"></div><div class="n" style="left:6.5px;top:1.2px;width:3.5px;opacity:0.7"></div><div class="tk" style="left:11.10px"></div><div class="tk" style="left:23.50px"></div><div class="tk" style="left:35.90px"></div><div class="tk" style="left:48.30px"></div><div class="tk" style="left:60.70px"></div><div class="tk" style="left:73.10px"></div><div class="tk" style="left:85.50px"></div><span>Slow Shit</span></div>
<div class="clip pat" style="left:673.10px;top:257.10px;width:99.20px;height:22.3px"><div class="n" style="left:3.6px;top:13.1px;width:10.0px;opacity:0.45"></div><div class="n" style="left:16.0px;top:13.1px;width:10.0px;opacity:0.45"></div><div class="n" style="left:28.4px;top:15.6px;width:10.0px;opacity:0.9"></div><div class="n" style="left:40.8px;top:15.6px;width:10.0px;opacity:0.9"></div><div class="n" style="left:53.2px;top:17.5px;width:10.0px;opacity:0.9"></div><div class="n" style="left:65.6px;top:17.5px;width:10.0px;opacity:0.9"></div><div class="n" style="left:78.0px;top:18.4px;width:10.0px;opacity:0.9"></div><div class="n" style="left:90.4px;top:18.4px;width:10.0px;opacity:0.9"></div><div class="n" style="left:37.7px;top:5.0px;width:4.2px;opacity:0.6"></div><div class="n" style="left:50.1px;top:4.2px;width:4.2px;opacity:0.6"></div><div class="n" style="left:62.5px;top:5.0px;width:4.2px;opacity:0.6"></div><div class="n" style="left:74.9px;top:4.2px;width:4.2px;opacity:0.6"></div><div class="n" style="left:87.3px;top:5.0px;width:4.2px;opacity:0.6"></div><div class="n" style="left:6.5px;top:1.2px;width:3.5px;opacity:0.7"></div><div class="tk" style="left:11.10px"></div><div class="tk" style="left:23.50px"></div><div class="tk" style="left:35.90px"></div><div class="tk" style="left:48.30px"></div><div class="tk" style="left:60.70px"></div><div class="tk" style="left:73.10px"></div><div class="tk" style="left:85.50px"></div><span>Slow Shit</span></div>
<div class="clip pat" style="left:970.70px;top:257.10px;width:99.20px;height:22.3px"><div class="n" style="left:3.6px;top:13.1px;width:10.0px;opacity:0.45"></div><div class="n" style="left:16.0px;top:13.1px;width:10.0px;opacity:0.45"></div><div class="n" style="left:28.4px;top:15.6px;width:10.0px;opacity:0.9"></div><div class="n" style="left:40.8px;top:15.6px;width:10.0px;opacity:0.9"></div><div class="n" style="left:53.2px;top:17.5px;width:10.0px;opacity:0.9"></div><div class="n" style="left:65.6px;top:17.5px;width:10.0px;opacity:0.9"></div><div class="n" style="left:78.0px;top:18.4px;width:10.0px;opacity:0.9"></div><div class="n" style="left:90.4px;top:18.4px;width:10.0px;opacity:0.9"></div><div class="n" style="left:37.7px;top:5.0px;width:4.2px;opacity:0.6"></div><div class="n" style="left:50.1px;top:4.2px;width:4.2px;opacity:0.6"></div><div class="n" style="left:62.5px;top:5.0px;width:4.2px;opacity:0.6"></div><div class="n" style="left:74.9px;top:4.2px;width:4.2px;opacity:0.6"></div><div class="n" style="left:87.3px;top:5.0px;width:4.2px;opacity:0.6"></div><div class="n" style="left:6.5px;top:1.2px;width:3.5px;opacity:0.7"></div><div class="tk" style="left:11.10px"></div><div class="tk" style="left:23.50px"></div><div class="tk" style="left:35.90px"></div><div class="tk" style="left:48.30px"></div><div class="tk" style="left:60.70px"></div><div class="tk" style="left:73.10px"></div><div class="tk" style="left:85.50px"></div><span>Slow Shit</span></div>
<div class="clip pat" style="left:1169.10px;top:257.10px;width:99.20px;height:22.3px"><div class="n" style="left:3.6px;top:13.1px;width:10.0px;opacity:0.45"></div><div class="n" style="left:16.0px;top:13.1px;width:10.0px;opacity:0.45"></div><div class="n" style="left:28.4px;top:15.6px;width:10.0px;opacity:0.9"></div><div class="n" style="left:40.8px;top:15.6px;width:10.0px;opacity:0.9"></div><div class="n" style="left:53.2px;top:17.5px;width:10.0px;opacity:0.9"></div><div class="n" style="left:65.6px;top:17.5px;width:10.0px;opacity:0.9"></div><div class="n" style="left:78.0px;top:18.4px;width:10.0px;opacity:0.9"></div><div class="n" style="left:90.4px;top:18.4px;width:10.0px;opacity:0.9"></div><div class="n" style="left:37.7px;top:5.0px;width:4.2px;opacity:0.6"></div><div class="n" style="left:50.1px;top:4.2px;width:4.2px;opacity:0.6"></div><div class="n" style="left:62.5px;top:5.0px;width:4.2px;opacity:0.6"></div><div class="n" style="left:74.9px;top:4.2px;width:4.2px;opacity:0.6"></div><div class="n" style="left:87.3px;top:5.0px;width:4.2px;opacity:0.6"></div><div class="n" style="left:6.5px;top:1.2px;width:3.5px;opacity:0.7"></div><div class="tk" style="left:11.10px"></div><div class="tk" style="left:23.50px"></div><div class="tk" style="left:35.90px"></div><div class="tk" style="left:48.30px"></div><div class="tk" style="left:60.70px"></div><div class="tk" style="left:73.10px"></div><div class="tk" style="left:85.50px"></div><span>Slow Shit</span></div>
<div class="clip pat" style="left:1268.30px;top:257.10px;width:12.70px;height:22.3px"><div class="n" style="left:3.6px;top:13.1px;width:10.0px;opacity:0.45"></div><div class="n" style="left:16.0px;top:13.1px;width:10.0px;opacity:0.45"></div><div class="n" style="left:28.4px;top:15.6px;width:10.0px;opacity:0.9"></div><div class="n" style="left:40.8px;top:15.6px;width:10.0px;opacity:0.9"></div><div class="n" style="left:53.2px;top:17.5px;width:10.0px;opacity:0.9"></div><div class="n" style="left:65.6px;top:17.5px;width:10.0px;opacity:0.9"></div><div class="n" style="left:78.0px;top:18.4px;width:10.0px;opacity:0.9"></div><div class="n" style="left:90.4px;top:18.4px;width:10.0px;opacity:0.9"></div><div class="n" style="left:37.7px;top:5.0px;width:4.2px;opacity:0.6"></div><div class="n" style="left:50.1px;top:4.2px;width:4.2px;opacity:0.6"></div><div class="n" style="left:62.5px;top:5.0px;width:4.2px;opacity:0.6"></div><div class="n" style="left:74.9px;top:4.2px;width:4.2px;opacity:0.6"></div><div class="n" style="left:87.3px;top:5.0px;width:4.2px;opacity:0.6"></div><div class="n" style="left:6.5px;top:1.2px;width:3.5px;opacity:0.7"></div><span>Slow Shit</span></div>
<div class="clip pat" style="left:177.10px;top:281.90px;width:49.60px;height:22.3px"><div class="n" style="left:1.0px;top:17.3px;width:10.5px;opacity:0.9"></div><div class="n" style="left:12.5px;top:13.2px;width:6.5px;opacity:0.85"></div><div class="n" style="left:5.0px;top:11.3px;width:3.0px;opacity:0.6"></div><div class="n" style="left:20.0px;top:11.3px;width:7.0px;opacity:0.5"></div><div class="n" style="left:24.5px;top:19.5px;width:12.0px;opacity:0.8"></div><div class="n" style="left:37.0px;top:13.2px;width:6.0px;opacity:0.8"></div><div class="n" style="left:38.0px;top:17.5px;width:9.0px;opacity:0.5"></div><div class="n" style="left:37.0px;top:4.2px;width:4.0px;opacity:0.5"></div><div class="n" style="left:41.0px;top:5.6px;width:4.0px;opacity:0.5"></div><div class="n" style="left:45.0px;top:7.0px;width:3.0px;opacity:0.5"></div><div class="n" style="left:30.0px;top:9.5px;width:6.0px;opacity:0.45"></div><div class="tk" style="left:11.10px"></div><div class="tk" style="left:23.50px"></div><div class="tk" style="left:35.90px"></div><span>human1</span></div>
<div class="clip pat" style="left:177.10px;top:306.70px;width:49.60px;height:22.3px"><div class="n" style="left:1.0px;top:17.3px;width:10.5px;opacity:0.9"></div><div class="n" style="left:12.5px;top:13.2px;width:6.5px;opacity:0.85"></div><div class="n" style="left:5.0px;top:11.3px;width:3.0px;opacity:0.6"></div><div class="n" style="left:20.0px;top:11.3px;width:7.0px;opacity:0.5"></div><div class="n" style="left:24.5px;top:19.5px;width:12.0px;opacity:0.8"></div><div class="n" style="left:37.0px;top:13.2px;width:6.0px;opacity:0.8"></div><div class="n" style="left:38.0px;top:17.5px;width:9.0px;opacity:0.5"></div><div class="n" style="left:37.0px;top:4.2px;width:4.0px;opacity:0.5"></div><div class="n" style="left:41.0px;top:5.6px;width:4.0px;opacity:0.5"></div><div class="n" style="left:45.0px;top:7.0px;width:3.0px;opacity:0.5"></div><div class="n" style="left:30.0px;top:9.5px;width:6.0px;opacity:0.45"></div><div class="tk" style="left:11.10px"></div><div class="tk" style="left:23.50px"></div><div class="tk" style="left:35.90px"></div><span>human1</span></div>
<div class="clip pat" style="left:226.70px;top:281.90px;width:49.60px;height:22.3px"><div class="n" style="left:1.0px;top:17.3px;width:10.5px;opacity:0.9"></div><div class="n" style="left:12.5px;top:13.2px;width:6.5px;opacity:0.85"></div><div class="n" style="left:5.0px;top:11.3px;width:3.0px;opacity:0.6"></div><div class="n" style="left:20.0px;top:11.3px;width:7.0px;opacity:0.5"></div><div class="n" style="left:24.5px;top:19.5px;width:12.0px;opacity:0.8"></div><div class="n" style="left:37.0px;top:13.2px;width:6.0px;opacity:0.8"></div><div class="n" style="left:38.0px;top:17.5px;width:9.0px;opacity:0.5"></div><div class="n" style="left:37.0px;top:4.2px;width:4.0px;opacity:0.5"></div><div class="n" style="left:41.0px;top:5.6px;width:4.0px;opacity:0.5"></div><div class="n" style="left:45.0px;top:7.0px;width:3.0px;opacity:0.5"></div><div class="n" style="left:30.0px;top:9.5px;width:6.0px;opacity:0.45"></div><div class="tk" style="left:11.10px"></div><div class="tk" style="left:23.50px"></div><div class="tk" style="left:35.90px"></div><span>human2</span></div>
<div class="clip pat" style="left:226.70px;top:306.70px;width:49.60px;height:22.3px"><div class="n" style="left:1.0px;top:17.3px;width:10.5px;opacity:0.9"></div><div class="n" style="left:12.5px;top:13.2px;width:6.5px;opacity:0.85"></div><div class="n" style="left:5.0px;top:11.3px;width:3.0px;opacity:0.6"></div><div class="n" style="left:20.0px;top:11.3px;width:7.0px;opacity:0.5"></div><div class="n" style="left:24.5px;top:19.5px;width:12.0px;opacity:0.8"></div><div class="n" style="left:37.0px;top:13.2px;width:6.0px;opacity:0.8"></div><div class="n" style="left:38.0px;top:17.5px;width:9.0px;opacity:0.5"></div><div class="n" style="left:37.0px;top:4.2px;width:4.0px;opacity:0.5"></div><div class="n" style="left:41.0px;top:5.6px;width:4.0px;opacity:0.5"></div><div class="n" style="left:45.0px;top:7.0px;width:3.0px;opacity:0.5"></div><div class="n" style="left:30.0px;top:9.5px;width:6.0px;opacity:0.45"></div><div class="tk" style="left:11.10px"></div><div class="tk" style="left:23.50px"></div><div class="tk" style="left:35.90px"></div><span>human2</span></div>
<div class="clip pat" style="left:276.30px;top:281.90px;width:49.60px;height:22.3px"><div class="n" style="left:1.0px;top:17.3px;width:10.5px;opacity:0.9"></div><div class="n" style="left:12.5px;top:13.2px;width:6.5px;opacity:0.85"></div><div class="n" style="left:5.0px;top:11.3px;width:3.0px;opacity:0.6"></div><div class="n" style="left:20.0px;top:11.3px;width:7.0px;opacity:0.5"></div><div class="n" style="left:24.5px;top:19.5px;width:12.0px;opacity:0.8"></div><div class="n" style="left:37.0px;top:13.2px;width:6.0px;opacity:0.8"></div><div class="n" style="left:38.0px;top:17.5px;width:9.0px;opacity:0.5"></div><div class="n" style="left:37.0px;top:4.2px;width:4.0px;opacity:0.5"></div><div class="n" style="left:41.0px;top:5.6px;width:4.0px;opacity:0.5"></div><div class="n" style="left:45.0px;top:7.0px;width:3.0px;opacity:0.5"></div><div class="n" style="left:30.0px;top:9.5px;width:6.0px;opacity:0.45"></div><div class="tk" style="left:11.10px"></div><div class="tk" style="left:23.50px"></div><div class="tk" style="left:35.90px"></div><span>human1</span></div>
<div class="clip pat" style="left:276.30px;top:306.70px;width:49.60px;height:22.3px"><div class="n" style="left:1.0px;top:17.3px;width:10.5px;opacity:0.9"></div><div class="n" style="left:12.5px;top:13.2px;width:6.5px;opacity:0.85"></div><div class="n" style="left:5.0px;top:11.3px;width:3.0px;opacity:0.6"></div><div class="n" style="left:20.0px;top:11.3px;width:7.0px;opacity:0.5"></div><div class="n" style="left:24.5px;top:19.5px;width:12.0px;opacity:0.8"></div><div class="n" style="left:37.0px;top:13.2px;width:6.0px;opacity:0.8"></div><div class="n" style="left:38.0px;top:17.5px;width:9.0px;opacity:0.5"></div><div class="n" style="left:37.0px;top:4.2px;width:4.0px;opacity:0.5"></div><div class="n" style="left:41.0px;top:5.6px;width:4.0px;opacity:0.5"></div><div class="n" style="left:45.0px;top:7.0px;width:3.0px;opacity:0.5"></div><div class="n" style="left:30.0px;top:9.5px;width:6.0px;opacity:0.45"></div><div class="tk" style="left:11.10px"></div><div class="tk" style="left:23.50px"></div><div class="tk" style="left:35.90px"></div><span>human1</span></div>
<div class="clip pat" style="left:325.90px;top:281.90px;width:49.60px;height:22.3px"><div class="n" style="left:1.0px;top:17.3px;width:10.5px;opacity:0.9"></div><div class="n" style="left:12.5px;top:13.2px;width:6.5px;opacity:0.85"></div><div class="n" style="left:5.0px;top:11.3px;width:3.0px;opacity:0.6"></div><div class="n" style="left:20.0px;top:11.3px;width:7.0px;opacity:0.5"></div><div class="n" style="left:24.5px;top:19.5px;width:12.0px;opacity:0.8"></div><div class="n" style="left:37.0px;top:13.2px;width:6.0px;opacity:0.8"></div><div class="n" style="left:38.0px;top:17.5px;width:9.0px;opacity:0.5"></div><div class="n" style="left:37.0px;top:4.2px;width:4.0px;opacity:0.5"></div><div class="n" style="left:41.0px;top:5.6px;width:4.0px;opacity:0.5"></div><div class="n" style="left:45.0px;top:7.0px;width:3.0px;opacity:0.5"></div><div class="n" style="left:30.0px;top:9.5px;width:6.0px;opacity:0.45"></div><div class="tk" style="left:11.10px"></div><div class="tk" style="left:23.50px"></div><div class="tk" style="left:35.90px"></div><span>human2</span></div>
<div class="clip pat" style="left:325.90px;top:306.70px;width:49.60px;height:22.3px"><div class="n" style="left:1.0px;top:17.3px;width:10.5px;opacity:0.9"></div><div class="n" style="left:12.5px;top:13.2px;width:6.5px;opacity:0.85"></div><div class="n" style="left:5.0px;top:11.3px;width:3.0px;opacity:0.6"></div><div class="n" style="left:20.0px;top:11.3px;width:7.0px;opacity:0.5"></div><div class="n" style="left:24.5px;top:19.5px;width:12.0px;opacity:0.8"></div><div class="n" style="left:37.0px;top:13.2px;width:6.0px;opacity:0.8"></div><div class="n" style="left:38.0px;top:17.5px;width:9.0px;opacity:0.5"></div><div class="n" style="left:37.0px;top:4.2px;width:4.0px;opacity:0.5"></div><div class="n" style="left:41.0px;top:5.6px;width:4.0px;opacity:0.5"></div><div class="n" style="left:45.0px;top:7.0px;width:3.0px;opacity:0.5"></div><div class="n" style="left:30.0px;top:9.5px;width:6.0px;opacity:0.45"></div><div class="tk" style="left:11.10px"></div><div class="tk" style="left:23.50px"></div><div class="tk" style="left:35.90px"></div><span>human2</span></div>
<div class="clip pat" style="left:573.90px;top:281.90px;width:49.60px;height:22.3px"><div class="n" style="left:0.9px;top:14.2px;width:3.4px;opacity:0.8"></div><div class="n" style="left:3.4px;top:5.4px;width:2.2px;opacity:0.7"></div><div class="n" style="left:6.4px;top:2.4px;width:3.1px;opacity:0.7"></div><div class="n" style="left:8.2px;top:5.4px;width:2.1px;opacity:0.7"></div><div class="n" style="left:9.9px;top:7.8px;width:1.7px;opacity:0.6"></div><div class="n" style="left:11.6px;top:11.2px;width:1.5px;opacity:0.7"></div><div class="n" style="left:13.8px;top:11.2px;width:1.5px;opacity:0.7"></div><div class="n" style="left:16.0px;top:11.2px;width:1.5px;opacity:0.7"></div><div class="n" style="left:18.2px;top:11.2px;width:1.5px;opacity:0.7"></div><div class="n" style="left:20.4px;top:11.2px;width:1.5px;opacity:0.7"></div><div class="n" style="left:22.6px;top:11.2px;width:1.5px;opacity:0.7"></div><div class="n" style="left:25.7px;top:14.2px;width:3.4px;opacity:0.8"></div><div class="n" style="left:28.2px;top:5.4px;width:2.2px;opacity:0.7"></div><div class="n" style="left:31.2px;top:2.4px;width:3.1px;opacity:0.7"></div><div class="n" style="left:33.0px;top:5.4px;width:2.1px;opacity:0.7"></div><div class="n" style="left:34.7px;top:7.8px;width:1.7px;opacity:0.6"></div><div class="n" style="left:36.4px;top:11.2px;width:1.5px;opacity:0.7"></div><div class="n" style="left:38.6px;top:11.2px;width:1.5px;opacity:0.7"></div><div class="n" style="left:40.8px;top:11.2px;width:1.5px;opacity:0.7"></div><div class="n" style="left:43.0px;top:11.2px;width:1.5px;opacity:0.7"></div><div class="n" style="left:45.2px;top:11.2px;width:1.5px;opacity:0.7"></div><div class="n" style="left:47.4px;top:11.2px;width:1.5px;opacity:0.7"></div><div class="tk" style="left:11.10px"></div><div class="tk" style="left:23.50px"></div><div class="tk" style="left:35.90px"></div></div>
<div class="clip pat" style="left:623.50px;top:281.90px;width:49.60px;height:22.3px"><div class="n" style="left:0.9px;top:14.2px;width:3.4px;opacity:0.8"></div><div class="n" style="left:3.4px;top:5.4px;width:2.2px;opacity:0.7"></div><div class="n" style="left:6.4px;top:2.4px;width:3.1px;opacity:0.7"></div><div class="n" style="left:8.2px;top:5.4px;width:2.1px;opacity:0.7"></div><div class="n" style="left:9.9px;top:7.8px;width:1.7px;opacity:0.6"></div><div class="n" style="left:11.6px;top:11.2px;width:1.5px;opacity:0.7"></div><div class="n" style="left:13.8px;top:11.2px;width:1.5px;opacity:0.7"></div><div class="n" style="left:16.0px;top:11.2px;width:1.5px;opacity:0.7"></div><div class="n" style="left:18.2px;top:11.2px;width:1.5px;opacity:0.7"></div><div class="n" style="left:20.4px;top:11.2px;width:1.5px;opacity:0.7"></div><div class="n" style="left:22.6px;top:11.2px;width:1.5px;opacity:0.7"></div><div class="n" style="left:25.7px;top:14.2px;width:3.4px;opacity:0.8"></div><div class="n" style="left:28.2px;top:5.4px;width:2.2px;opacity:0.7"></div><div class="n" style="left:31.2px;top:2.4px;width:3.1px;opacity:0.7"></div><div class="n" style="left:33.0px;top:5.4px;width:2.1px;opacity:0.7"></div><div class="n" style="left:34.7px;top:7.8px;width:1.7px;opacity:0.6"></div><div class="n" style="left:36.4px;top:11.2px;width:1.5px;opacity:0.7"></div><div class="n" style="left:38.6px;top:11.2px;width:1.5px;opacity:0.7"></div><div class="n" style="left:40.8px;top:11.2px;width:1.5px;opacity:0.7"></div><div class="n" style="left:43.0px;top:11.2px;width:1.5px;opacity:0.7"></div><div class="n" style="left:45.2px;top:11.2px;width:1.5px;opacity:0.7"></div><div class="n" style="left:47.4px;top:11.2px;width:1.5px;opacity:0.7"></div><div class="tk" style="left:11.10px"></div><div class="tk" style="left:23.50px"></div><div class="tk" style="left:35.90px"></div></div>
<div class="clip pat" style="left:772.30px;top:281.90px;width:49.60px;height:22.3px"><div class="n" style="left:0.9px;top:14.2px;width:3.4px;opacity:0.8"></div><div class="n" style="left:3.4px;top:5.4px;width:2.2px;opacity:0.7"></div><div class="n" style="left:6.4px;top:2.4px;width:3.1px;opacity:0.7"></div><div class="n" style="left:8.2px;top:5.4px;width:2.1px;opacity:0.7"></div><div class="n" style="left:9.9px;top:7.8px;width:1.7px;opacity:0.6"></div><div class="n" style="left:11.6px;top:11.2px;width:1.5px;opacity:0.7"></div><div class="n" style="left:13.8px;top:11.2px;width:1.5px;opacity:0.7"></div><div class="n" style="left:16.0px;top:11.2px;width:1.5px;opacity:0.7"></div><div class="n" style="left:18.2px;top:11.2px;width:1.5px;opacity:0.7"></div><div class="n" style="left:20.4px;top:11.2px;width:1.5px;opacity:0.7"></div><div class="n" style="left:22.6px;top:11.2px;width:1.5px;opacity:0.7"></div><div class="n" style="left:25.7px;top:14.2px;width:3.4px;opacity:0.8"></div><div class="n" style="left:28.2px;top:5.4px;width:2.2px;opacity:0.7"></div><div class="n" style="left:31.2px;top:2.4px;width:3.1px;opacity:0.7"></div><div class="n" style="left:33.0px;top:5.4px;width:2.1px;opacity:0.7"></div><div class="n" style="left:34.7px;top:7.8px;width:1.7px;opacity:0.6"></div><div class="n" style="left:36.4px;top:11.2px;width:1.5px;opacity:0.7"></div><div class="n" style="left:38.6px;top:11.2px;width:1.5px;opacity:0.7"></div><div class="n" style="left:40.8px;top:11.2px;width:1.5px;opacity:0.7"></div><div class="n" style="left:43.0px;top:11.2px;width:1.5px;opacity:0.7"></div><div class="n" style="left:45.2px;top:11.2px;width:1.5px;opacity:0.7"></div><div class="n" style="left:47.4px;top:11.2px;width:1.5px;opacity:0.7"></div><div class="tk" style="left:11.10px"></div><div class="tk" style="left:23.50px"></div><div class="tk" style="left:35.90px"></div></div>
<div class="clip pat" style="left:821.90px;top:281.90px;width:49.60px;height:22.3px"><div class="n" style="left:0.9px;top:14.2px;width:3.4px;opacity:0.8"></div><div class="n" style="left:3.4px;top:5.4px;width:2.2px;opacity:0.7"></div><div class="n" style="left:6.4px;top:2.4px;width:3.1px;opacity:0.7"></div><div class="n" style="left:8.2px;top:5.4px;width:2.1px;opacity:0.7"></div><div class="n" style="left:9.9px;top:7.8px;width:1.7px;opacity:0.6"></div><div class="n" style="left:11.6px;top:11.2px;width:1.5px;opacity:0.7"></div><div class="n" style="left:13.8px;top:11.2px;width:1.5px;opacity:0.7"></div><div class="n" style="left:16.0px;top:11.2px;width:1.5px;opacity:0.7"></div><div class="n" style="left:18.2px;top:11.2px;width:1.5px;opacity:0.7"></div><div class="n" style="left:20.4px;top:11.2px;width:1.5px;opacity:0.7"></div><div class="n" style="left:22.6px;top:11.2px;width:1.5px;opacity:0.7"></div><div class="n" style="left:25.7px;top:14.2px;width:3.4px;opacity:0.8"></div><div class="n" style="left:28.2px;top:5.4px;width:2.2px;opacity:0.7"></div><div class="n" style="left:31.2px;top:2.4px;width:3.1px;opacity:0.7"></div><div class="n" style="left:33.0px;top:5.4px;width:2.1px;opacity:0.7"></div><div class="n" style="left:34.7px;top:7.8px;width:1.7px;opacity:0.6"></div><div class="n" style="left:36.4px;top:11.2px;width:1.5px;opacity:0.7"></div><div class="n" style="left:38.6px;top:11.2px;width:1.5px;opacity:0.7"></div><div class="n" style="left:40.8px;top:11.2px;width:1.5px;opacity:0.7"></div><div class="n" style="left:43.0px;top:11.2px;width:1.5px;opacity:0.7"></div><div class="n" style="left:45.2px;top:11.2px;width:1.5px;opacity:0.7"></div><div class="n" style="left:47.4px;top:11.2px;width:1.5px;opacity:0.7"></div><div class="tk" style="left:11.10px"></div><div class="tk" style="left:23.50px"></div><div class="tk" style="left:35.90px"></div></div>
<div class="clip pat" style="left:871.50px;top:281.90px;width:49.60px;height:22.3px"><div class="n" style="left:22.0px;top:6.2px;width:3.2px;opacity:0.75"></div><div class="n" style="left:27.0px;top:6.2px;width:2.2px;opacity:0.75"></div><div class="n" style="left:31.0px;top:6.2px;width:3.2px;opacity:0.75"></div><div class="n" style="left:36.0px;top:6.2px;width:3.2px;opacity:0.75"></div><div class="n" style="left:41.0px;top:6.2px;width:4.2px;opacity:0.75"></div><div class="n" style="left:3.0px;top:9.3px;width:4.2px;opacity:0.75"></div><div class="n" style="left:9.0px;top:9.3px;width:5.2px;opacity:0.75"></div><div class="n" style="left:16.0px;top:9.3px;width:6.2px;opacity:0.75"></div><div class="n" style="left:24.0px;top:9.3px;width:5.2px;opacity:0.75"></div><div class="n" style="left:31.0px;top:9.3px;width:4.2px;opacity:0.75"></div><div class="n" style="left:37.0px;top:9.3px;width:7.2px;opacity:0.75"></div><div class="n" style="left:1.0px;top:12.2px;width:5.2px;opacity:0.75"></div><div class="n" style="left:8.0px;top:12.2px;width:7.2px;opacity:0.75"></div><div class="n" style="left:17.0px;top:12.2px;width:5.2px;opacity:0.75"></div><div class="n" style="left:24.0px;top:12.2px;width:8.2px;opacity:0.75"></div><div class="n" style="left:34.0px;top:12.2px;width:5.2px;opacity:0.75"></div><div class="n" style="left:41.0px;top:12.2px;width:4.2px;opacity:0.75"></div><div class="n" style="left:2.0px;top:15.3px;width:8.2px;opacity:0.75"></div><div class="n" style="left:13.0px;top:15.3px;width:6.2px;opacity:0.75"></div><div class="n" style="left:21.0px;top:15.3px;width:4.2px;opacity:0.75"></div><div class="n" style="left:27.0px;top:15.3px;width:7.2px;opacity:0.75"></div><div class="n" style="left:36.0px;top:15.3px;width:8.2px;opacity:0.75"></div><div class="n" style="left:1.0px;top:18.4px;width:11.2px;opacity:0.75"></div><div class="n" style="left:15.0px;top:18.4px;width:2.2px;opacity:0.75"></div><div class="n" style="left:25.0px;top:18.4px;width:9.2px;opacity:0.75"></div><div class="n" style="left:38.0px;top:18.4px;width:7.2px;opacity:0.75"></div><div class="tk" style="left:11.10px"></div><div class="tk" style="left:23.50px"></div><div class="tk" style="left:35.90px"></div><span>human3</span></div>
<div class="clip pat" style="left:921.10px;top:281.90px;width:49.60px;height:22.3px"><div class="n" style="left:22.0px;top:6.2px;width:3.2px;opacity:0.75"></div><div class="n" style="left:27.0px;top:6.2px;width:2.2px;opacity:0.75"></div><div class="n" style="left:31.0px;top:6.2px;width:3.2px;opacity:0.75"></div><div class="n" style="left:36.0px;top:6.2px;width:3.2px;opacity:0.75"></div><div class="n" style="left:41.0px;top:6.2px;width:4.2px;opacity:0.75"></div><div class="n" style="left:3.0px;top:9.3px;width:4.2px;opacity:0.75"></div><div class="n" style="left:9.0px;top:9.3px;width:5.2px;opacity:0.75"></div><div class="n" style="left:16.0px;top:9.3px;width:6.2px;opacity:0.75"></div><div class="n" style="left:24.0px;top:9.3px;width:5.2px;opacity:0.75"></div><div class="n" style="left:31.0px;top:9.3px;width:4.2px;opacity:0.75"></div><div class="n" style="left:37.0px;top:9.3px;width:7.2px;opacity:0.75"></div><div class="n" style="left:1.0px;top:12.2px;width:5.2px;opacity:0.75"></div><div class="n" style="left:8.0px;top:12.2px;width:7.2px;opacity:0.75"></div><div class="n" style="left:17.0px;top:12.2px;width:5.2px;opacity:0.75"></div><div class="n" style="left:24.0px;top:12.2px;width:8.2px;opacity:0.75"></div><div class="n" style="left:34.0px;top:12.2px;width:5.2px;opacity:0.75"></div><div class="n" style="left:41.0px;top:12.2px;width:4.2px;opacity:0.75"></div><div class="n" style="left:2.0px;top:15.3px;width:8.2px;opacity:0.75"></div><div class="n" style="left:13.0px;top:15.3px;width:6.2px;opacity:0.75"></div><div class="n" style="left:21.0px;top:15.3px;width:4.2px;opacity:0.75"></div><div class="n" style="left:27.0px;top:15.3px;width:7.2px;opacity:0.75"></div><div class="n" style="left:36.0px;top:15.3px;width:8.2px;opacity:0.75"></div><div class="n" style="left:1.0px;top:18.4px;width:11.2px;opacity:0.75"></div><div class="n" style="left:15.0px;top:18.4px;width:2.2px;opacity:0.75"></div><div class="n" style="left:25.0px;top:18.4px;width:9.2px;opacity:0.75"></div><div class="n" style="left:38.0px;top:18.4px;width:7.2px;opacity:0.75"></div><div class="tk" style="left:11.10px"></div><div class="tk" style="left:23.50px"></div><div class="tk" style="left:35.90px"></div><span>human4</span></div>
<div class="clip pat" style="left:970.70px;top:281.90px;width:49.60px;height:22.3px"><div class="n" style="left:1.0px;top:8.9px;width:14.0px;opacity:0.7"></div><div class="n" style="left:11.0px;top:11.7px;width:16.0px;opacity:0.7"></div><div class="n" style="left:3.0px;top:15.3px;width:18.0px;opacity:0.7"></div><div class="n" style="left:1.0px;top:17.6px;width:12.0px;opacity:0.7"></div><div class="n" style="left:25.0px;top:10.6px;width:16.0px;opacity:0.7"></div><div class="n" style="left:31.0px;top:13.4px;width:17.0px;opacity:0.7"></div><div class="n" style="left:37.0px;top:6.6px;width:11.0px;opacity:0.7"></div><div class="n" style="left:19.0px;top:19.6px;width:12.0px;opacity:0.7"></div><div class="tk" style="left:11.10px"></div><div class="tk" style="left:23.50px"></div><div class="tk" style="left:35.90px"></div></div>
<div class="clip pat" style="left:1020.30px;top:281.90px;width:49.60px;height:22.3px"><div class="n" style="left:1.0px;top:8.5px;width:14.0px;opacity:0.7"></div><div class="n" style="left:11.0px;top:12.0px;width:16.0px;opacity:0.7"></div><div class="n" style="left:3.0px;top:14.6px;width:18.0px;opacity:0.7"></div><div class="n" style="left:1.0px;top:17.6px;width:12.0px;opacity:0.7"></div><div class="n" style="left:25.0px;top:10.5px;width:16.0px;opacity:0.7"></div><div class="n" style="left:31.0px;top:14.0px;width:17.0px;opacity:0.7"></div><div class="n" style="left:37.0px;top:6.6px;width:11.0px;opacity:0.7"></div><div class="n" style="left:19.0px;top:19.3px;width:12.0px;opacity:0.7"></div><div class="tk" style="left:11.10px"></div><div class="tk" style="left:23.50px"></div><div class="tk" style="left:35.90px"></div></div>
<div class="clip pat" style="left:871.50px;top:306.70px;width:49.60px;height:22.3px"><div class="n" style="left:22.0px;top:6.2px;width:3.2px;opacity:0.75"></div><div class="n" style="left:27.0px;top:6.2px;width:2.2px;opacity:0.75"></div><div class="n" style="left:31.0px;top:6.2px;width:3.2px;opacity:0.75"></div><div class="n" style="left:36.0px;top:6.2px;width:3.2px;opacity:0.75"></div><div class="n" style="left:41.0px;top:6.2px;width:4.2px;opacity:0.75"></div><div class="n" style="left:3.0px;top:9.3px;width:4.2px;opacity:0.75"></div><div class="n" style="left:9.0px;top:9.3px;width:5.2px;opacity:0.75"></div><div class="n" style="left:16.0px;top:9.3px;width:6.2px;opacity:0.75"></div><div class="n" style="left:24.0px;top:9.3px;width:5.2px;opacity:0.75"></div><div class="n" style="left:31.0px;top:9.3px;width:4.2px;opacity:0.75"></div><div class="n" style="left:37.0px;top:9.3px;width:7.2px;opacity:0.75"></div><div class="n" style="left:1.0px;top:12.2px;width:5.2px;opacity:0.75"></div><div class="n" style="left:8.0px;top:12.2px;width:7.2px;opacity:0.75"></div><div class="n" style="left:17.0px;top:12.2px;width:5.2px;opacity:0.75"></div><div class="n" style="left:24.0px;top:12.2px;width:8.2px;opacity:0.75"></div><div class="n" style="left:34.0px;top:12.2px;width:5.2px;opacity:0.75"></div><div class="n" style="left:41.0px;top:12.2px;width:4.2px;opacity:0.75"></div><div class="n" style="left:2.0px;top:15.3px;width:8.2px;opacity:0.75"></div><div class="n" style="left:13.0px;top:15.3px;width:6.2px;opacity:0.75"></div><div class="n" style="left:21.0px;top:15.3px;width:4.2px;opacity:0.75"></div><div class="n" style="left:27.0px;top:15.3px;width:7.2px;opacity:0.75"></div><div class="n" style="left:36.0px;top:15.3px;width:8.2px;opacity:0.75"></div><div class="n" style="left:1.0px;top:18.4px;width:11.2px;opacity:0.75"></div><div class="n" style="left:15.0px;top:18.4px;width:2.2px;opacity:0.75"></div><div class="n" style="left:25.0px;top:18.4px;width:9.2px;opacity:0.75"></div><div class="n" style="left:38.0px;top:18.4px;width:7.2px;opacity:0.75"></div><div class="tk" style="left:11.10px"></div><div class="tk" style="left:23.50px"></div><div class="tk" style="left:35.90px"></div><span>human3</span></div>
<div class="clip pat" style="left:921.10px;top:306.70px;width:49.60px;height:22.3px"><div class="n" style="left:22.0px;top:6.2px;width:3.2px;opacity:0.75"></div><div class="n" style="left:27.0px;top:6.2px;width:2.2px;opacity:0.75"></div><div class="n" style="left:31.0px;top:6.2px;width:3.2px;opacity:0.75"></div><div class="n" style="left:36.0px;top:6.2px;width:3.2px;opacity:0.75"></div><div class="n" style="left:41.0px;top:6.2px;width:4.2px;opacity:0.75"></div><div class="n" style="left:3.0px;top:9.3px;width:4.2px;opacity:0.75"></div><div class="n" style="left:9.0px;top:9.3px;width:5.2px;opacity:0.75"></div><div class="n" style="left:16.0px;top:9.3px;width:6.2px;opacity:0.75"></div><div class="n" style="left:24.0px;top:9.3px;width:5.2px;opacity:0.75"></div><div class="n" style="left:31.0px;top:9.3px;width:4.2px;opacity:0.75"></div><div class="n" style="left:37.0px;top:9.3px;width:7.2px;opacity:0.75"></div><div class="n" style="left:1.0px;top:12.2px;width:5.2px;opacity:0.75"></div><div class="n" style="left:8.0px;top:12.2px;width:7.2px;opacity:0.75"></div><div class="n" style="left:17.0px;top:12.2px;width:5.2px;opacity:0.75"></div><div class="n" style="left:24.0px;top:12.2px;width:8.2px;opacity:0.75"></div><div class="n" style="left:34.0px;top:12.2px;width:5.2px;opacity:0.75"></div><div class="n" style="left:41.0px;top:12.2px;width:4.2px;opacity:0.75"></div><div class="n" style="left:2.0px;top:15.3px;width:8.2px;opacity:0.75"></div><div class="n" style="left:13.0px;top:15.3px;width:6.2px;opacity:0.75"></div><div class="n" style="left:21.0px;top:15.3px;width:4.2px;opacity:0.75"></div><div class="n" style="left:27.0px;top:15.3px;width:7.2px;opacity:0.75"></div><div class="n" style="left:36.0px;top:15.3px;width:8.2px;opacity:0.75"></div><div class="n" style="left:1.0px;top:18.4px;width:11.2px;opacity:0.75"></div><div class="n" style="left:15.0px;top:18.4px;width:2.2px;opacity:0.75"></div><div class="n" style="left:25.0px;top:18.4px;width:9.2px;opacity:0.75"></div><div class="n" style="left:38.0px;top:18.4px;width:7.2px;opacity:0.75"></div><div class="tk" style="left:11.10px"></div><div class="tk" style="left:23.50px"></div><div class="tk" style="left:35.90px"></div><span>human4</span></div>
<div class="clip pat" style="left:1255.90px;top:281.90px;width:12.40px;height:22.3px"></div>
<div class="clip pat" style="left:1255.90px;top:306.70px;width:12.40px;height:22.3px"></div>
<div class="clip pat" style="left:871.50px;top:331.50px;width:99.20px;height:22.3px"><div class="n" style="left:25.8px;top:7.3px;width:18.9px;opacity:0.6"></div><div class="n" style="left:50.7px;top:13.7px;width:18.9px;opacity:0.85"></div><div class="n" style="left:75.6px;top:16.8px;width:21.5px;opacity:0.9"></div><div class="tk" style="left:11.10px"></div><div class="tk" style="left:23.50px"></div><div class="tk" style="left:35.90px"></div><div class="tk" style="left:48.30px"></div><div class="tk" style="left:60.70px"></div><div class="tk" style="left:73.10px"></div><div class="tk" style="left:85.50px"></div></div>
<div class="clip pat" style="left:1268.30px;top:331.50px;width:12.70px;height:22.3px"></div>
<div class="clip pat" style="left:747.50px;top:356.30px;width:37.20px;height:22.3px"><div class="n" style="left:14.0px;top:12.0px;width:8.0px;opacity:0.8"></div><div class="n" style="left:24.0px;top:14.5px;width:9.0px;opacity:0.85"></div><div class="n" style="left:3.0px;top:17.0px;width:8.0px;opacity:0.6"></div><div class="tk" style="left:11.10px"></div><div class="tk" style="left:23.50px"></div><span>Quiet</span></div>
<div class="clip pat" style="left:1069.90px;top:356.30px;width:24.80px;height:22.3px"><div class="n" style="left:0.5px;top:11.9px;width:6.0px;opacity:0.85"></div><div class="n" style="left:6.5px;top:10.6px;width:6.0px;opacity:0.85"></div><div class="n" style="left:12.5px;top:9.6px;width:6.0px;opacity:0.85"></div><div class="n" style="left:18.5px;top:8.8px;width:4.5px;opacity:0.85"></div><div class="tk" style="left:11.10px"></div></div>
<div class="clip pat" style="left:1094.70px;top:356.30px;width:24.80px;height:22.3px"><div class="n" style="left:6.0px;top:6.4px;width:7.0px;opacity:0.8"></div><div class="n" style="left:13.0px;top:9.8px;width:3.5px;opacity:0.8"></div><div class="n" style="left:17.0px;top:12.7px;width:5.0px;opacity:0.85"></div><div class="n" style="left:22.0px;top:16.2px;width:1.5px;opacity:0.85"></div><div class="tk" style="left:11.10px"></div></div>
<div class="clip pat" style="left:1119.50px;top:356.30px;width:24.80px;height:22.3px"><div class="n" style="left:0.5px;top:11.9px;width:6.0px;opacity:0.85"></div><div class="n" style="left:6.5px;top:10.6px;width:6.0px;opacity:0.85"></div><div class="n" style="left:12.5px;top:9.6px;width:6.0px;opacity:0.85"></div><div class="n" style="left:18.5px;top:8.8px;width:4.5px;opacity:0.85"></div><div class="tk" style="left:11.10px"></div></div>
<div class="clip pat" style="left:1144.30px;top:356.30px;width:24.80px;height:22.3px"><div class="n" style="left:6.5px;top:2.5px;width:2.0px;opacity:0.85"></div><div class="n" style="left:8.8px;top:5.0px;width:2.0px;opacity:0.85"></div><div class="n" style="left:11.1px;top:7.5px;width:2.0px;opacity:0.85"></div><div class="n" style="left:13.4px;top:10.0px;width:2.0px;opacity:0.85"></div><div class="n" style="left:15.7px;top:12.5px;width:2.0px;opacity:0.85"></div><div class="n" style="left:18.0px;top:15.0px;width:2.0px;opacity:0.85"></div><div class="n" style="left:20.3px;top:17.5px;width:2.0px;opacity:0.85"></div><div class="n" style="left:18.5px;top:19.5px;width:3.5px;opacity:0.8"></div><div class="tk" style="left:11.10px"></div></div>
<div class="clip pat" style="left:1193.90px;top:356.30px;width:24.80px;height:22.3px"><div class="n" style="left:0.0px;top:10.0px;width:22.3px;opacity:0.95"></div><div class="tk" style="left:11.10px"></div></div>
<div class="clip pat" style="left:1243.50px;top:356.30px;width:24.80px;height:22.3px"><div class="n" style="left:6.5px;top:2.5px;width:2.0px;opacity:0.85"></div><div class="n" style="left:8.8px;top:5.0px;width:2.0px;opacity:0.85"></div><div class="n" style="left:11.1px;top:7.5px;width:2.0px;opacity:0.85"></div><div class="n" style="left:13.4px;top:10.0px;width:2.0px;opacity:0.85"></div><div class="n" style="left:15.7px;top:12.5px;width:2.0px;opacity:0.85"></div><div class="n" style="left:18.0px;top:15.0px;width:2.0px;opacity:0.85"></div><div class="n" style="left:20.3px;top:17.5px;width:2.0px;opacity:0.85"></div><div class="n" style="left:18.5px;top:19.5px;width:3.5px;opacity:0.8"></div><div class="tk" style="left:11.10px"></div></div>
<div class="clip pat" style="left:375.50px;top:381.10px;width:99.20px;height:22.3px"><div class="n" style="left:37.8px;top:5.3px;width:12.9px;opacity:0.6"></div><div class="n" style="left:50.7px;top:10.1px;width:24.9px;opacity:0.85"></div><div class="n" style="left:75.6px;top:13.1px;width:21.5px;opacity:0.9"></div><div class="tk" style="left:11.10px"></div><div class="tk" style="left:23.50px"></div><div class="tk" style="left:35.90px"></div><div class="tk" style="left:48.30px"></div><div class="tk" style="left:60.70px"></div><div class="tk" style="left:73.10px"></div><div class="tk" style="left:85.50px"></div><span>mild mild</span></div>
<div class="clip pat" style="left:474.70px;top:381.10px;width:99.20px;height:22.3px"><div class="n" style="left:37.8px;top:5.3px;width:12.9px;opacity:0.6"></div><div class="n" style="left:50.7px;top:10.1px;width:24.9px;opacity:0.85"></div><div class="n" style="left:75.6px;top:13.1px;width:21.5px;opacity:0.9"></div><div class="tk" style="left:11.10px"></div><div class="tk" style="left:23.50px"></div><div class="tk" style="left:35.90px"></div><div class="tk" style="left:48.30px"></div><div class="tk" style="left:60.70px"></div><div class="tk" style="left:73.10px"></div><div class="tk" style="left:85.50px"></div><span>mild mild</span></div>
<div class="clip pat" style="left:871.50px;top:381.10px;width:99.20px;height:22.3px"><div class="n" style="left:37.8px;top:5.3px;width:12.9px;opacity:0.6"></div><div class="n" style="left:50.7px;top:10.1px;width:24.9px;opacity:0.85"></div><div class="n" style="left:75.6px;top:13.1px;width:21.5px;opacity:0.9"></div><div class="tk" style="left:11.10px"></div><div class="tk" style="left:23.50px"></div><div class="tk" style="left:35.90px"></div><div class="tk" style="left:48.30px"></div><div class="tk" style="left:60.70px"></div><div class="tk" style="left:73.10px"></div><div class="tk" style="left:85.50px"></div><span>mild mild</span></div>
<div class="clip pat" style="left:970.70px;top:381.10px;width:99.20px;height:22.3px"><div class="n" style="left:37.8px;top:5.3px;width:12.9px;opacity:0.6"></div><div class="n" style="left:50.7px;top:10.1px;width:24.9px;opacity:0.85"></div><div class="n" style="left:75.6px;top:13.1px;width:21.5px;opacity:0.9"></div><div class="tk" style="left:11.10px"></div><div class="tk" style="left:23.50px"></div><div class="tk" style="left:35.90px"></div><div class="tk" style="left:48.30px"></div><div class="tk" style="left:60.70px"></div><div class="tk" style="left:73.10px"></div><div class="tk" style="left:85.50px"></div><span>mild mild</span></div>
<div class="clip" style="left:276.30px;top:405.90px;width:1004.70px;height:22.3px;border:1px solid #a6f0b6;border-right:none;background:linear-gradient(#5fe189,#44c96d 38%,#3fc067 41%,#7ad898 44%,#7ad898 48%,#35ad59 52%,#2a9a4c 80%,#248c44 100%);box-shadow:inset 0 -1px 0 0 rgba(10,70,30,.5)"></div>
<div class="clip pat" style="left:276.30px;top:430.70px;width:99.20px;height:22.3px"><div class="n" style="left:1.0px;top:3.3px;width:6.4px;opacity:0.55"></div><div class="n" style="left:13.4px;top:3.3px;width:10.3px;opacity:0.55"></div><div class="n" style="left:25.4px;top:9.5px;width:6.9px;opacity:0.85"></div><div class="n" style="left:38.3px;top:9.5px;width:9.5px;opacity:0.85"></div><div class="n" style="left:87.3px;top:9.5px;width:8.9px;opacity:0.85"></div><div class="n" style="left:50.3px;top:15.3px;width:10.3px;opacity:0.85"></div><div class="n" style="left:75.3px;top:18.8px;width:9.5px;opacity:0.85"></div><div class="tk" style="left:11.10px"></div><div class="tk" style="left:23.50px"></div><div class="tk" style="left:35.90px"></div><div class="tk" style="left:48.30px"></div><div class="tk" style="left:60.70px"></div><div class="tk" style="left:73.10px"></div><div class="tk" style="left:85.50px"></div></div>
<div class="clip pat" style="left:375.50px;top:430.70px;width:99.20px;height:22.3px"><div class="n" style="left:1.0px;top:3.3px;width:6.4px;opacity:0.55"></div><div class="n" style="left:13.4px;top:3.3px;width:10.3px;opacity:0.55"></div><div class="n" style="left:25.4px;top:9.5px;width:6.9px;opacity:0.85"></div><div class="n" style="left:38.3px;top:9.5px;width:9.5px;opacity:0.85"></div><div class="n" style="left:87.3px;top:9.5px;width:8.9px;opacity:0.85"></div><div class="n" style="left:50.3px;top:15.3px;width:10.3px;opacity:0.85"></div><div class="n" style="left:75.3px;top:18.8px;width:9.5px;opacity:0.85"></div><div class="tk" style="left:11.10px"></div><div class="tk" style="left:23.50px"></div><div class="tk" style="left:35.90px"></div><div class="tk" style="left:48.30px"></div><div class="tk" style="left:60.70px"></div><div class="tk" style="left:73.10px"></div><div class="tk" style="left:85.50px"></div></div>
<div class="clip pat" style="left:474.70px;top:430.70px;width:99.20px;height:22.3px"><div class="n" style="left:1.0px;top:3.3px;width:6.4px;opacity:0.55"></div><div class="n" style="left:13.4px;top:3.3px;width:10.3px;opacity:0.55"></div><div class="n" style="left:25.4px;top:9.5px;width:6.9px;opacity:0.85"></div><div class="n" style="left:38.3px;top:9.5px;width:9.5px;opacity:0.85"></div><div class="n" style="left:87.3px;top:9.5px;width:8.9px;opacity:0.85"></div><div class="n" style="left:50.3px;top:15.3px;width:10.3px;opacity:0.85"></div><div class="n" style="left:75.3px;top:18.8px;width:9.5px;opacity:0.85"></div><div class="tk" style="left:11.10px"></div><div class="tk" style="left:23.50px"></div><div class="tk" style="left:35.90px"></div><div class="tk" style="left:48.30px"></div><div class="tk" style="left:60.70px"></div><div class="tk" style="left:73.10px"></div><div class="tk" style="left:85.50px"></div></div>
<div class="clip pat" style="left:573.90px;top:430.70px;width:99.20px;height:22.3px"><div class="n" style="left:1.0px;top:3.3px;width:6.4px;opacity:0.55"></div><div class="n" style="left:13.4px;top:3.3px;width:10.3px;opacity:0.55"></div><div class="n" style="left:25.4px;top:9.5px;width:6.9px;opacity:0.85"></div><div class="n" style="left:38.3px;top:9.5px;width:9.5px;opacity:0.85"></div><div class="n" style="left:87.3px;top:9.5px;width:8.9px;opacity:0.85"></div><div class="n" style="left:50.3px;top:15.3px;width:10.3px;opacity:0.85"></div><div class="n" style="left:75.3px;top:18.8px;width:9.5px;opacity:0.85"></div><div class="tk" style="left:11.10px"></div><div class="tk" style="left:23.50px"></div><div class="tk" style="left:35.90px"></div><div class="tk" style="left:48.30px"></div><div class="tk" style="left:60.70px"></div><div class="tk" style="left:73.10px"></div><div class="tk" style="left:85.50px"></div></div>
<div class="clip pat" style="left:673.10px;top:430.70px;width:99.20px;height:22.3px"><div class="n" style="left:1.0px;top:3.3px;width:6.4px;opacity:0.55"></div><div class="n" style="left:13.4px;top:3.3px;width:10.3px;opacity:0.55"></div><div class="n" style="left:25.4px;top:9.5px;width:6.9px;opacity:0.85"></div><div class="n" style="left:38.3px;top:9.5px;width:9.5px;opacity:0.85"></div><div class="n" style="left:87.3px;top:9.5px;width:8.9px;opacity:0.85"></div><div class="n" style="left:50.3px;top:15.3px;width:10.3px;opacity:0.85"></div><div class="n" style="left:75.3px;top:18.8px;width:9.5px;opacity:0.85"></div><div class="tk" style="left:11.10px"></div><div class="tk" style="left:23.50px"></div><div class="tk" style="left:35.90px"></div><div class="tk" style="left:48.30px"></div><div class="tk" style="left:60.70px"></div><div class="tk" style="left:73.10px"></div><div class="tk" style="left:85.50px"></div></div>
<div class="clip pat" style="left:772.30px;top:430.70px;width:99.20px;height:22.3px"><div class="n" style="left:1.0px;top:3.3px;width:6.4px;opacity:0.55"></div><div class="n" style="left:13.4px;top:3.3px;width:10.3px;opacity:0.55"></div><div class="n" style="left:25.4px;top:9.5px;width:6.9px;opacity:0.85"></div><div class="n" style="left:38.3px;top:9.5px;width:9.5px;opacity:0.85"></div><div class="n" style="left:87.3px;top:9.5px;width:8.9px;opacity:0.85"></div><div class="n" style="left:50.3px;top:15.3px;width:10.3px;opacity:0.85"></div><div class="n" style="left:75.3px;top:18.8px;width:9.5px;opacity:0.85"></div><div class="tk" style="left:11.10px"></div><div class="tk" style="left:23.50px"></div><div class="tk" style="left:35.90px"></div><div class="tk" style="left:48.30px"></div><div class="tk" style="left:60.70px"></div><div class="tk" style="left:73.10px"></div><div class="tk" style="left:85.50px"></div></div>
<div class="clip pat" style="left:871.50px;top:430.70px;width:99.20px;height:22.3px"><div class="n" style="left:1.0px;top:3.3px;width:6.4px;opacity:0.55"></div><div class="n" style="left:13.4px;top:3.3px;width:10.3px;opacity:0.55"></div><div class="n" style="left:25.4px;top:9.5px;width:6.9px;opacity:0.85"></div><div class="n" style="left:38.3px;top:9.5px;width:9.5px;opacity:0.85"></div><div class="n" style="left:87.3px;top:9.5px;width:8.9px;opacity:0.85"></div><div class="n" style="left:50.3px;top:15.3px;width:10.3px;opacity:0.85"></div><div class="n" style="left:75.3px;top:18.8px;width:9.5px;opacity:0.85"></div><div class="tk" style="left:11.10px"></div><div class="tk" style="left:23.50px"></div><div class="tk" style="left:35.90px"></div><div class="tk" style="left:48.30px"></div><div class="tk" style="left:60.70px"></div><div class="tk" style="left:73.10px"></div><div class="tk" style="left:85.50px"></div></div>
<div class="clip pat" style="left:970.70px;top:430.70px;width:99.20px;height:22.3px"><div class="n" style="left:1.0px;top:3.3px;width:6.4px;opacity:0.55"></div><div class="n" style="left:13.4px;top:3.3px;width:10.3px;opacity:0.55"></div><div class="n" style="left:25.4px;top:9.5px;width:6.9px;opacity:0.85"></div><div class="n" style="left:38.3px;top:9.5px;width:9.5px;opacity:0.85"></div><div class="n" style="left:87.3px;top:9.5px;width:8.9px;opacity:0.85"></div><div class="n" style="left:50.3px;top:15.3px;width:10.3px;opacity:0.85"></div><div class="n" style="left:75.3px;top:18.8px;width:9.5px;opacity:0.85"></div><div class="tk" style="left:11.10px"></div><div class="tk" style="left:23.50px"></div><div class="tk" style="left:35.90px"></div><div class="tk" style="left:48.30px"></div><div class="tk" style="left:60.70px"></div><div class="tk" style="left:73.10px"></div><div class="tk" style="left:85.50px"></div></div>
<div class="clip pat" style="left:1268.30px;top:430.70px;width:12.70px;height:22.3px"><div class="n" style="left:1.0px;top:3.3px;width:6.4px;opacity:0.55"></div></div>
<div class="clip pat" style="left:462.30px;top:455.50px;width:99.20px;height:22.3px"><div class="n" style="left:25.8px;top:7.3px;width:18.9px;opacity:0.6"></div><div class="n" style="left:50.7px;top:13.7px;width:18.9px;opacity:0.85"></div><div class="n" style="left:75.6px;top:16.8px;width:21.5px;opacity:0.9"></div><div class="tk" style="left:11.10px"></div><div class="tk" style="left:23.50px"></div><div class="tk" style="left:35.90px"></div><div class="tk" style="left:48.30px"></div><div class="tk" style="left:60.70px"></div><div class="tk" style="left:73.10px"></div><div class="tk" style="left:85.50px"></div></div>
<div class="clip pat" style="left:1069.90px;top:455.50px;width:99.20px;height:22.3px"><div class="n" style="left:25.8px;top:7.3px;width:18.9px;opacity:0.6"></div><div class="n" style="left:50.7px;top:13.7px;width:18.9px;opacity:0.85"></div><div class="n" style="left:75.6px;top:16.8px;width:21.5px;opacity:0.9"></div><div class="tk" style="left:11.10px"></div><div class="tk" style="left:23.50px"></div><div class="tk" style="left:35.90px"></div><div class="tk" style="left:48.30px"></div><div class="tk" style="left:60.70px"></div><div class="tk" style="left:73.10px"></div><div class="tk" style="left:85.50px"></div></div>
<div class="clip pat" style="left:1255.90px;top:455.50px;width:25.10px;height:22.3px"><div class="n" style="left:25.8px;top:7.3px;width:18.9px;opacity:0.6"></div><div class="n" style="left:50.7px;top:13.7px;width:18.9px;opacity:0.85"></div><div class="n" style="left:75.6px;top:16.8px;width:21.5px;opacity:0.9"></div><div class="tk" style="left:11.10px"></div></div>
<div class="clip" style="left:177.10px;top:480.30px;width:86.80px;height:22.3px;background:linear-gradient(#454545,#383838 50%,#2a2a2a);border:1px solid #4c4c4c"><div class="n" style="background:#9a9a9a;left:0.5px;top:1.0px;width:24.6px;opacity:0.9"></div><div class="n" style="background:#9a9a9a;left:25.3px;top:2.5px;width:24.6px;opacity:0.9"></div><div class="n" style="background:#9a9a9a;left:50.1px;top:3.2px;width:24.6px;opacity:0.9"></div><div class="n" style="background:#9a9a9a;left:74.9px;top:4.0px;width:24.6px;opacity:0.9"></div><div class="n" style="background:#9a9a9a;left:0.5px;top:9.0px;width:24.6px;opacity:0.9"></div><div class="n" style="background:#9a9a9a;left:25.3px;top:10.5px;width:24.6px;opacity:0.9"></div><div class="n" style="background:#9a9a9a;left:50.1px;top:11.2px;width:24.6px;opacity:0.9"></div><div class="n" style="background:#9a9a9a;left:74.9px;top:12.0px;width:24.6px;opacity:0.9"></div><div class="n" style="background:#9a9a9a;left:0.5px;top:16.2px;width:24.6px;opacity:0.8"></div><div class="n" style="background:#9a9a9a;left:25.3px;top:17.7px;width:24.6px;opacity:0.8"></div><div class="n" style="background:#9a9a9a;left:50.1px;top:18.4px;width:24.6px;opacity:0.8"></div><div class="n" style="background:#9a9a9a;left:74.9px;top:19.2px;width:24.6px;opacity:0.8"></div><div class="tk" style="left:11.10px;background:rgba(0,0,0,.5)"></div><div class="tk" style="left:23.50px;background:rgba(0,0,0,.5)"></div><div class="tk" style="left:35.90px;background:rgba(0,0,0,.5)"></div><div class="tk" style="left:48.30px;background:rgba(0,0,0,.5)"></div><div class="tk" style="left:60.70px;background:rgba(0,0,0,.5)"></div><div class="tk" style="left:73.10px;background:rgba(0,0,0,.5)"></div><svg class="abs" style="left:1.500px;top:9px" width="11" height="11" viewBox="0 0 11 11"><circle cx="5.500" cy="5.500" r="4.600" fill="#c9c9c9" fill-opacity=".25" stroke="#d63a3a" stroke-width="1"/><path d="M2.500 4.300 h1.500 l2.300 -1.800 v6 l-2.300 -1.800 h-1.500 z" fill="#f0f0f0" stroke="#b02020" stroke-width=".4"/><path d="M7.300 4 l1.600 3 M8.900 4 l-1.600 3" stroke="#e03030" stroke-width=".8"/></svg></div>
<div class="clip pat" style="left:263.90px;top:480.30px;width:99.20px;height:22.3px"><div class="n" style="left:0.5px;top:1.0px;width:24.6px;opacity:0.9"></div><div class="n" style="left:25.3px;top:2.5px;width:24.6px;opacity:0.9"></div><div class="n" style="left:50.1px;top:3.2px;width:24.6px;opacity:0.9"></div><div class="n" style="left:74.9px;top:4.0px;width:24.6px;opacity:0.9"></div><div class="n" style="left:0.5px;top:9.0px;width:24.6px;opacity:0.9"></div><div class="n" style="left:25.3px;top:10.5px;width:24.6px;opacity:0.9"></div><div class="n" style="left:50.1px;top:11.2px;width:24.6px;opacity:0.9"></div><div class="n" style="left:74.9px;top:12.0px;width:24.6px;opacity:0.9"></div><div class="n" style="left:0.5px;top:16.2px;width:24.6px;opacity:0.8"></div><div class="n" style="left:25.3px;top:17.7px;width:24.6px;opacity:0.8"></div><div class="n" style="left:50.1px;top:18.4px;width:24.6px;opacity:0.8"></div><div class="n" style="left:74.9px;top:19.2px;width:24.6px;opacity:0.8"></div><div class="tk" style="left:11.10px"></div><div class="tk" style="left:23.50px"></div><div class="tk" style="left:35.90px"></div><div class="tk" style="left:48.30px"></div><div class="tk" style="left:60.70px"></div><div class="tk" style="left:73.10px"></div><div class="tk" style="left:85.50px"></div></div>
<div class="clip pat" style="left:363.10px;top:480.30px;width:99.20px;height:22.3px"><div class="n" style="left:0.5px;top:1.0px;width:24.6px;opacity:0.9"></div><div class="n" style="left:25.3px;top:2.5px;width:24.6px;opacity:0.9"></div><div class="n" style="left:50.1px;top:3.2px;width:24.6px;opacity:0.9"></div><div class="n" style="left:74.9px;top:4.0px;width:24.6px;opacity:0.9"></div><div class="n" style="left:0.5px;top:9.0px;width:24.6px;opacity:0.9"></div><div class="n" style="left:25.3px;top:10.5px;width:24.6px;opacity:0.9"></div><div class="n" style="left:50.1px;top:11.2px;width:24.6px;opacity:0.9"></div><div class="n" style="left:74.9px;top:12.0px;width:24.6px;opacity:0.9"></div><div class="n" style="left:0.5px;top:16.2px;width:24.6px;opacity:0.8"></div><div class="n" style="left:25.3px;top:17.7px;width:24.6px;opacity:0.8"></div><div class="n" style="left:50.1px;top:18.4px;width:24.6px;opacity:0.8"></div><div class="n" style="left:74.9px;top:19.2px;width:24.6px;opacity:0.8"></div><div class="tk" style="left:11.10px"></div><div class="tk" style="left:23.50px"></div><div class="tk" style="left:35.90px"></div><div class="tk" style="left:48.30px"></div><div class="tk" style="left:60.70px"></div><div class="tk" style="left:73.10px"></div><div class="tk" style="left:85.50px"></div></div>
<div class="clip pat" style="left:462.30px;top:480.30px;width:99.20px;height:22.3px"><div class="n" style="left:0.5px;top:1.0px;width:24.6px;opacity:0.9"></div><div class="n" style="left:25.3px;top:2.5px;width:24.6px;opacity:0.9"></div><div class="n" style="left:50.1px;top:3.2px;width:24.6px;opacity:0.9"></div><div class="n" style="left:74.9px;top:4.0px;width:24.6px;opacity:0.9"></div><div class="n" style="left:0.5px;top:9.0px;width:24.6px;opacity:0.9"></div><div class="n" style="left:25.3px;top:10.5px;width:24.6px;opacity:0.9"></div><div class="n" style="left:50.1px;top:11.2px;width:24.6px;opacity:0.9"></div><div class="n" style="left:74.9px;top:12.0px;width:24.6px;opacity:0.9"></div><div class="n" style="left:0.5px;top:16.2px;width:24.6px;opacity:0.8"></div><div class="n" style="left:25.3px;top:17.7px;width:24.6px;opacity:0.8"></div><div class="n" style="left:50.1px;top:18.4px;width:24.6px;opacity:0.8"></div><div class="n" style="left:74.9px;top:19.2px;width:24.6px;opacity:0.8"></div><div class="tk" style="left:11.10px"></div><div class="tk" style="left:23.50px"></div><div class="tk" style="left:35.90px"></div><div class="tk" style="left:48.30px"></div><div class="tk" style="left:60.70px"></div><div class="tk" style="left:73.10px"></div><div class="tk" style="left:85.50px"></div></div>
<div class="clip pat" style="left:859.10px;top:480.30px;width:99.20px;height:22.3px"><div class="n" style="left:0.5px;top:1.0px;width:24.6px;opacity:0.9"></div><div class="n" style="left:25.3px;top:2.5px;width:24.6px;opacity:0.9"></div><div class="n" style="left:50.1px;top:3.2px;width:24.6px;opacity:0.9"></div><div class="n" style="left:74.9px;top:4.0px;width:24.6px;opacity:0.9"></div><div class="n" style="left:0.5px;top:9.0px;width:24.6px;opacity:0.9"></div><div class="n" style="left:25.3px;top:10.5px;width:24.6px;opacity:0.9"></div><div class="n" style="left:50.1px;top:11.2px;width:24.6px;opacity:0.9"></div><div class="n" style="left:74.9px;top:12.0px;width:24.6px;opacity:0.9"></div><div class="n" style="left:0.5px;top:16.2px;width:24.6px;opacity:0.8"></div><div class="n" style="left:25.3px;top:17.7px;width:24.6px;opacity:0.8"></div><div class="n" style="left:50.1px;top:18.4px;width:24.6px;opacity:0.8"></div><div class="n" style="left:74.9px;top:19.2px;width:24.6px;opacity:0.8"></div><div class="tk" style="left:11.10px"></div><div class="tk" style="left:23.50px"></div><div class="tk" style="left:35.90px"></div><div class="tk" style="left:48.30px"></div><div class="tk" style="left:60.70px"></div><div class="tk" style="left:73.10px"></div><div class="tk" style="left:85.50px"></div></div>
<div class="clip pat" style="left:958.30px;top:480.30px;width:99.20px;height:22.3px"><div class="n" style="left:0.5px;top:1.0px;width:24.6px;opacity:0.9"></div><div class="n" style="left:25.3px;top:2.5px;width:24.6px;opacity:0.9"></div><div class="n" style="left:50.1px;top:3.2px;width:24.6px;opacity:0.9"></div><div class="n" style="left:74.9px;top:4.0px;width:24.6px;opacity:0.9"></div><div class="n" style="left:0.5px;top:9.0px;width:24.6px;opacity:0.9"></div><div class="n" style="left:25.3px;top:10.5px;width:24.6px;opacity:0.9"></div><div class="n" style="left:50.1px;top:11.2px;width:24.6px;opacity:0.9"></div><div class="n" style="left:74.9px;top:12.0px;width:24.6px;opacity:0.9"></div><div class="n" style="left:0.5px;top:16.2px;width:24.6px;opacity:0.8"></div><div class="n" style="left:25.3px;top:17.7px;width:24.6px;opacity:0.8"></div><div class="n" style="left:50.1px;top:18.4px;width:24.6px;opacity:0.8"></div><div class="n" style="left:74.9px;top:19.2px;width:24.6px;opacity:0.8"></div><div class="tk" style="left:11.10px"></div><div class="tk" style="left:23.50px"></div><div class="tk" style="left:35.90px"></div><div class="tk" style="left:48.30px"></div><div class="tk" style="left:60.70px"></div><div class="tk" style="left:73.10px"></div><div class="tk" style="left:85.50px"></div></div>
<div class="clip pat" style="left:1156.70px;top:480.30px;width:99.20px;height:22.3px"><div class="n" style="left:0.5px;top:1.0px;width:24.6px;opacity:0.9"></div><div class="n" style="left:25.3px;top:2.5px;width:24.6px;opacity:0.9"></div><div class="n" style="left:50.1px;top:3.2px;width:24.6px;opacity:0.9"></div><div class="n" style="left:74.9px;top:4.0px;width:24.6px;opacity:0.9"></div><div class="n" style="left:0.5px;top:9.0px;width:24.6px;opacity:0.9"></div><div class="n" style="left:25.3px;top:10.5px;width:24.6px;opacity:0.9"></div><div class="n" style="left:50.1px;top:11.2px;width:24.6px;opacity:0.9"></div><div class="n" style="left:74.9px;top:12.0px;width:24.6px;opacity:0.9"></div><div class="n" style="left:0.5px;top:16.2px;width:24.6px;opacity:0.8"></div><div class="n" style="left:25.3px;top:17.7px;width:24.6px;opacity:0.8"></div><div class="n" style="left:50.1px;top:18.4px;width:24.6px;opacity:0.8"></div><div class="n" style="left:74.9px;top:19.2px;width:24.6px;opacity:0.8"></div><div class="tk" style="left:11.10px"></div><div class="tk" style="left:23.50px"></div><div class="tk" style="left:35.90px"></div><div class="tk" style="left:48.30px"></div><div class="tk" style="left:60.70px"></div><div class="tk" style="left:73.10px"></div><div class="tk" style="left:85.50px"></div></div>
<div class="clip pat" style="left:177.10px;top:505.10px;width:99.20px;height:22.3px"><div class="n" style="left:0.5px;top:1.0px;width:24.6px;opacity:0.9"></div><div class="n" style="left:25.3px;top:2.5px;width:24.6px;opacity:0.9"></div><div class="n" style="left:50.1px;top:3.2px;width:24.6px;opacity:0.9"></div><div class="n" style="left:74.9px;top:4.0px;width:24.6px;opacity:0.9"></div><div class="n" style="left:0.5px;top:9.0px;width:24.6px;opacity:0.9"></div><div class="n" style="left:25.3px;top:10.5px;width:24.6px;opacity:0.9"></div><div class="n" style="left:50.1px;top:11.2px;width:24.6px;opacity:0.9"></div><div class="n" style="left:74.9px;top:12.0px;width:24.6px;opacity:0.9"></div><div class="n" style="left:0.5px;top:16.2px;width:24.6px;opacity:0.8"></div><div class="n" style="left:25.3px;top:17.7px;width:24.6px;opacity:0.8"></div><div class="n" style="left:50.1px;top:18.4px;width:24.6px;opacity:0.8"></div><div class="n" style="left:74.9px;top:19.2px;width:24.6px;opacity:0.8"></div><div class="tk" style="left:11.10px"></div><div class="tk" style="left:23.50px"></div><div class="tk" style="left:35.90px"></div><div class="tk" style="left:48.30px"></div><div class="tk" style="left:60.70px"></div><div class="tk" style="left:73.10px"></div><div class="tk" style="left:85.50px"></div></div>
<div class="clip pat" style="left:276.30px;top:505.10px;width:99.20px;height:22.3px"><div class="n" style="left:3.2px;top:2.2px;width:4.4px;opacity:0.5"></div><div class="n" style="left:9.4px;top:2.2px;width:4.4px;opacity:0.5"></div><div class="n" style="left:15.6px;top:2.2px;width:4.4px;opacity:0.5"></div><div class="n" style="left:3.2px;top:9.5px;width:4.4px;opacity:0.8"></div><div class="n" style="left:9.4px;top:9.5px;width:4.4px;opacity:0.8"></div><div class="n" style="left:15.6px;top:9.5px;width:4.4px;opacity:0.8"></div><div class="n" style="left:3.2px;top:17.4px;width:4.4px;opacity:0.8"></div><div class="n" style="left:9.4px;top:17.4px;width:4.4px;opacity:0.8"></div><div class="n" style="left:15.6px;top:17.4px;width:4.4px;opacity:0.8"></div><div class="n" style="left:28.0px;top:3.6px;width:4.4px;opacity:0.5"></div><div class="n" style="left:34.2px;top:3.6px;width:4.4px;opacity:0.5"></div><div class="n" style="left:40.4px;top:3.6px;width:4.4px;opacity:0.5"></div><div class="n" style="left:28.0px;top:10.9px;width:4.4px;opacity:0.8"></div><div class="n" style="left:34.2px;top:10.9px;width:4.4px;opacity:0.8"></div><div class="n" style="left:40.4px;top:10.9px;width:4.4px;opacity:0.8"></div><div class="n" style="left:28.0px;top:18.8px;width:4.4px;opacity:0.8"></div><div class="n" style="left:34.2px;top:18.8px;width:4.4px;opacity:0.8"></div><div class="n" style="left:40.4px;top:18.8px;width:4.4px;opacity:0.8"></div><div class="n" style="left:52.8px;top:4.8px;width:4.4px;opacity:0.5"></div><div class="n" style="left:59.0px;top:4.8px;width:4.4px;opacity:0.5"></div><div class="n" style="left:65.2px;top:4.8px;width:4.4px;opacity:0.5"></div><div class="n" style="left:52.8px;top:12.1px;width:4.4px;opacity:0.8"></div><div class="n" style="left:59.0px;top:12.1px;width:4.4px;opacity:0.8"></div><div class="n" style="left:65.2px;top:12.1px;width:4.4px;opacity:0.8"></div><div class="n" style="left:52.8px;top:20.0px;width:4.4px;opacity:0.8"></div><div class="n" style="left:59.0px;top:20.0px;width:4.4px;opacity:0.8"></div><div class="n" style="left:65.2px;top:20.0px;width:4.4px;opacity:0.8"></div><div class="n" style="left:77.6px;top:5.4px;width:4.4px;opacity:0.5"></div><div class="n" style="left:83.8px;top:5.4px;width:4.4px;opacity:0.5"></div><div class="n" style="left:90.0px;top:5.4px;width:4.4px;opacity:0.5"></div><div class="n" style="left:77.6px;top:12.7px;width:4.4px;opacity:0.8"></div><div class="n" style="left:83.8px;top:12.7px;width:4.4px;opacity:0.8"></div><div class="n" style="left:90.0px;top:12.7px;width:4.4px;opacity:0.8"></div><div class="n" style="left:77.6px;top:20.6px;width:4.4px;opacity:0.8"></div><div class="n" style="left:83.8px;top:20.6px;width:4.4px;opacity:0.8"></div><div class="n" style="left:90.0px;top:20.6px;width:4.4px;opacity:0.8"></div><div class="tk" style="left:11.10px"></div><div class="tk" style="left:23.50px"></div><div class="tk" style="left:35.90px"></div><div class="tk" style="left:48.30px"></div><div class="tk" style="left:60.70px"></div><div class="tk" style="left:73.10px"></div><div class="tk" style="left:85.50px"></div></div>
<div class="clip pat" style="left:375.50px;top:505.10px;width:99.20px;height:22.3px"><div class="n" style="left:3.2px;top:2.2px;width:4.4px;opacity:0.5"></div><div class="n" style="left:9.4px;top:2.2px;width:4.4px;opacity:0.5"></div><div class="n" style="left:15.6px;top:2.2px;width:4.4px;opacity:0.5"></div><div class="n" style="left:3.2px;top:9.5px;width:4.4px;opacity:0.8"></div><div class="n" style="left:9.4px;top:9.5px;width:4.4px;opacity:0.8"></div><div class="n" style="left:15.6px;top:9.5px;width:4.4px;opacity:0.8"></div><div class="n" style="left:3.2px;top:17.4px;width:4.4px;opacity:0.8"></div><div class="n" style="left:9.4px;top:17.4px;width:4.4px;opacity:0.8"></div><div class="n" style="left:15.6px;top:17.4px;width:4.4px;opacity:0.8"></div><div class="n" style="left:28.0px;top:3.6px;width:4.4px;opacity:0.5"></div><div class="n" style="left:34.2px;top:3.6px;width:4.4px;opacity:0.5"></div><div class="n" style="left:40.4px;top:3.6px;width:4.4px;opacity:0.5"></div><div class="n" style="left:28.0px;top:10.9px;width:4.4px;opacity:0.8"></div><div class="n" style="left:34.2px;top:10.9px;width:4.4px;opacity:0.8"></div><div class="n" style="left:40.4px;top:10.9px;width:4.4px;opacity:0.8"></div><div class="n" style="left:28.0px;top:18.8px;width:4.4px;opacity:0.8"></div><div class="n" style="left:34.2px;top:18.8px;width:4.4px;opacity:0.8"></div><div class="n" style="left:40.4px;top:18.8px;width:4.4px;opacity:0.8"></div><div class="n" style="left:52.8px;top:4.8px;width:4.4px;opacity:0.5"></div><div class="n" style="left:59.0px;top:4.8px;width:4.4px;opacity:0.5"></div><div class="n" style="left:65.2px;top:4.8px;width:4.4px;opacity:0.5"></div><div class="n" style="left:52.8px;top:12.1px;width:4.4px;opacity:0.8"></div><div class="n" style="left:59.0px;top:12.1px;width:4.4px;opacity:0.8"></div><div class="n" style="left:65.2px;top:12.1px;width:4.4px;opacity:0.8"></div><div class="n" style="left:52.8px;top:20.0px;width:4.4px;opacity:0.8"></div><div class="n" style="left:59.0px;top:20.0px;width:4.4px;opacity:0.8"></div><div class="n" style="left:65.2px;top:20.0px;width:4.4px;opacity:0.8"></div><div class="n" style="left:77.6px;top:5.4px;width:4.4px;opacity:0.5"></div><div class="n" style="left:83.8px;top:5.4px;width:4.4px;opacity:0.5"></div><div class="n" style="left:90.0px;top:5.4px;width:4.4px;opacity:0.5"></div><div class="n" style="left:77.6px;top:12.7px;width:4.4px;opacity:0.8"></div><div class="n" style="left:83.8px;top:12.7px;width:4.4px;opacity:0.8"></div><div class="n" style="left:90.0px;top:12.7px;width:4.4px;opacity:0.8"></div><div class="n" style="left:77.6px;top:20.6px;width:4.4px;opacity:0.8"></div><div class="n" style="left:83.8px;top:20.6px;width:4.4px;opacity:0.8"></div><div class="n" style="left:90.0px;top:20.6px;width:4.4px;opacity:0.8"></div><div class="tk" style="left:11.10px"></div><div class="tk" style="left:23.50px"></div><div class="tk" style="left:35.90px"></div><div class="tk" style="left:48.30px"></div><div class="tk" style="left:60.70px"></div><div class="tk" style="left:73.10px"></div><div class="tk" style="left:85.50px"></div></div>
<div class="clip pat" style="left:474.70px;top:505.10px;width:99.20px;height:22.3px"><div class="n" style="left:3.2px;top:2.2px;width:4.4px;opacity:0.5"></div><div class="n" style="left:9.4px;top:2.2px;width:4.4px;opacity:0.5"></div><div class="n" style="left:15.6px;top:2.2px;width:4.4px;opacity:0.5"></div><div class="n" style="left:3.2px;top:9.5px;width:4.4px;opacity:0.8"></div><div class="n" style="left:9.4px;top:9.5px;width:4.4px;opacity:0.8"></div><div class="n" style="left:15.6px;top:9.5px;width:4.4px;opacity:0.8"></div><div class="n" style="left:3.2px;top:17.4px;width:4.4px;opacity:0.8"></div><div class="n" style="left:9.4px;top:17.4px;width:4.4px;opacity:0.8"></div><div class="n" style="left:15.6px;top:17.4px;width:4.4px;opacity:0.8"></div><div class="n" style="left:28.0px;top:3.6px;width:4.4px;opacity:0.5"></div><div class="n" style="left:34.2px;top:3.6px;width:4.4px;opacity:0.5"></div><div class="n" style="left:40.4px;top:3.6px;width:4.4px;opacity:0.5"></div><div class="n" style="left:28.0px;top:10.9px;width:4.4px;opacity:0.8"></div><div class="n" style="left:34.2px;top:10.9px;width:4.4px;opacity:0.8"></div><div class="n" style="left:40.4px;top:10.9px;width:4.4px;opacity:0.8"></div><div class="n" style="left:28.0px;top:18.8px;width:4.4px;opacity:0.8"></div><div class="n" style="left:34.2px;top:18.8px;width:4.4px;opacity:0.8"></div><div class="n" style="left:40.4px;top:18.8px;width:4.4px;opacity:0.8"></div><div class="n" style="left:52.8px;top:4.8px;width:4.4px;opacity:0.5"></div><div class="n" style="left:59.0px;top:4.8px;width:4.4px;opacity:0.5"></div><div class="n" style="left:65.2px;top:4.8px;width:4.4px;opacity:0.5"></div><div class="n" style="left:52.8px;top:12.1px;width:4.4px;opacity:0.8"></div><div class="n" style="left:59.0px;top:12.1px;width:4.4px;opacity:0.8"></div><div class="n" style="left:65.2px;top:12.1px;width:4.4px;opacity:0.8"></div><div class="n" style="left:52.8px;top:20.0px;width:4.4px;opacity:0.8"></div><div class="n" style="left:59.0px;top:20.0px;width:4.4px;opacity:0.8"></div><div class="n" style="left:65.2px;top:20.0px;width:4.4px;opacity:0.8"></div><div class="n" style="left:77.6px;top:5.4px;width:4.4px;opacity:0.5"></div><div class="n" style="left:83.8px;top:5.4px;width:4.4px;opacity:0.5"></div><div class="n" style="left:90.0px;top:5.4px;width:4.4px;opacity:0.5"></div><div class="n" style="left:77.6px;top:12.7px;width:4.4px;opacity:0.8"></div><div class="n" style="left:83.8px;top:12.7px;width:4.4px;opacity:0.8"></div><div class="n" style="left:90.0px;top:12.7px;width:4.4px;opacity:0.8"></div><div class="n" style="left:77.6px;top:20.6px;width:4.4px;opacity:0.8"></div><div class="n" style="left:83.8px;top:20.6px;width:4.4px;opacity:0.8"></div><div class="n" style="left:90.0px;top:20.6px;width:4.4px;opacity:0.8"></div><div class="tk" style="left:11.10px"></div><div class="tk" style="left:23.50px"></div><div class="tk" style="left:35.90px"></div><div class="tk" style="left:48.30px"></div><div class="tk" style="left:60.70px"></div><div class="tk" style="left:73.10px"></div><div class="tk" style="left:85.50px"></div></div>
<div class="clip pat" style="left:573.90px;top:505.10px;width:99.20px;height:22.3px"><div class="n" style="left:3.2px;top:2.2px;width:4.4px;opacity:0.5"></div><div class="n" style="left:9.4px;top:2.2px;width:4.4px;opacity:0.5"></div><div class="n" style="left:15.6px;top:2.2px;width:4.4px;opacity:0.5"></div><div class="n" style="left:3.2px;top:9.5px;width:4.4px;opacity:0.8"></div><div class="n" style="left:9.4px;top:9.5px;width:4.4px;opacity:0.8"></div><div class="n" style="left:15.6px;top:9.5px;width:4.4px;opacity:0.8"></div><div class="n" style="left:3.2px;top:17.4px;width:4.4px;opacity:0.8"></div><div class="n" style="left:9.4px;top:17.4px;width:4.4px;opacity:0.8"></div><div class="n" style="left:15.6px;top:17.4px;width:4.4px;opacity:0.8"></div><div class="n" style="left:28.0px;top:3.6px;width:4.4px;opacity:0.5"></div><div class="n" style="left:34.2px;top:3.6px;width:4.4px;opacity:0.5"></div><div class="n" style="left:40.4px;top:3.6px;width:4.4px;opacity:0.5"></div><div class="n" style="left:28.0px;top:10.9px;width:4.4px;opacity:0.8"></div><div class="n" style="left:34.2px;top:10.9px;width:4.4px;opacity:0.8"></div><div class="n" style="left:40.4px;top:10.9px;width:4.4px;opacity:0.8"></div><div class="n" style="left:28.0px;top:18.8px;width:4.4px;opacity:0.8"></div><div class="n" style="left:34.2px;top:18.8px;width:4.4px;opacity:0.8"></div><div class="n" style="left:40.4px;top:18.8px;width:4.4px;opacity:0.8"></div><div class="n" style="left:52.8px;top:4.8px;width:4.4px;opacity:0.5"></div><div class="n" style="left:59.0px;top:4.8px;width:4.4px;opacity:0.5"></div><div class="n" style="left:65.2px;top:4.8px;width:4.4px;opacity:0.5"></div><div class="n" style="left:52.8px;top:12.1px;width:4.4px;opacity:0.8"></div><div class="n" style="left:59.0px;top:12.1px;width:4.4px;opacity:0.8"></div><div class="n" style="left:65.2px;top:12.1px;width:4.4px;opacity:0.8"></div><div class="n" style="left:52.8px;top:20.0px;width:4.4px;opacity:0.8"></div><div class="n" style="left:59.0px;top:20.0px;width:4.4px;opacity:0.8"></div><div class="n" style="left:65.2px;top:20.0px;width:4.4px;opacity:0.8"></div><div class="n" style="left:77.6px;top:5.4px;width:4.4px;opacity:0.5"></div><div class="n" style="left:83.8px;top:5.4px;width:4.4px;opacity:0.5"></div><div class="n" style="left:90.0px;top:5.4px;width:4.4px;opacity:0.5"></div><div class="n" style="left:77.6px;top:12.7px;width:4.4px;opacity:0.8"></div><div class="n" style="left:83.8px;top:12.7px;width:4.4px;opacity:0.8"></div><div class="n" style="left:90.0px;top:12.7px;width:4.4px;opacity:0.8"></div><div class="n" style="left:77.6px;top:20.6px;width:4.4px;opacity:0.8"></div><div class="n" style="left:83.8px;top:20.6px;width:4.4px;opacity:0.8"></div><div class="n" style="left:90.0px;top:20.6px;width:4.4px;opacity:0.8"></div><div class="tk" style="left:11.10px"></div><div class="tk" style="left:23.50px"></div><div class="tk" style="left:35.90px"></div><div class="tk" style="left:48.30px"></div><div class="tk" style="left:60.70px"></div><div class="tk" style="left:73.10px"></div><div class="tk" style="left:85.50px"></div></div>
<div class="clip pat" style="left:673.10px;top:505.10px;width:99.20px;height:22.3px"><div class="n" style="left:3.2px;top:2.2px;width:4.4px;opacity:0.5"></div><div class="n" style="left:9.4px;top:2.2px;width:4.4px;opacity:0.5"></div><div class="n" style="left:15.6px;top:2.2px;width:4.4px;opacity:0.5"></div><div class="n" style="left:3.2px;top:9.5px;width:4.4px;opacity:0.8"></div><div class="n" style="left:9.4px;top:9.5px;width:4.4px;opacity:0.8"></div><div class="n" style="left:15.6px;top:9.5px;width:4.4px;opacity:0.8"></div><div class="n" style="left:3.2px;top:17.4px;width:4.4px;opacity:0.8"></div><div class="n" style="left:9.4px;top:17.4px;width:4.4px;opacity:0.8"></div><div class="n" style="left:15.6px;top:17.4px;width:4.4px;opacity:0.8"></div><div class="n" style="left:28.0px;top:3.6px;width:4.4px;opacity:0.5"></div><div class="n" style="left:34.2px;top:3.6px;width:4.4px;opacity:0.5"></div><div class="n" style="left:40.4px;top:3.6px;width:4.4px;opacity:0.5"></div><div class="n" style="left:28.0px;top:10.9px;width:4.4px;opacity:0.8"></div><div class="n" style="left:34.2px;top:10.9px;width:4.4px;opacity:0.8"></div><div class="n" style="left:40.4px;top:10.9px;width:4.4px;opacity:0.8"></div><div class="n" style="left:28.0px;top:18.8px;width:4.4px;opacity:0.8"></div><div class="n" style="left:34.2px;top:18.8px;width:4.4px;opacity:0.8"></div><div class="n" style="left:40.4px;top:18.8px;width:4.4px;opacity:0.8"></div><div class="n" style="left:52.8px;top:4.8px;width:4.4px;opacity:0.5"></div><div class="n" style="left:59.0px;top:4.8px;width:4.4px;opacity:0.5"></div><div class="n" style="left:65.2px;top:4.8px;width:4.4px;opacity:0.5"></div><div class="n" style="left:52.8px;top:12.1px;width:4.4px;opacity:0.8"></div><div class="n" style="left:59.0px;top:12.1px;width:4.4px;opacity:0.8"></div><div class="n" style="left:65.2px;top:12.1px;width:4.4px;opacity:0.8"></div><div class="n" style="left:52.8px;top:20.0px;width:4.4px;opacity:0.8"></div><div class="n" style="left:59.0px;top:20.0px;width:4.4px;opacity:0.8"></div><div class="n" style="left:65.2px;top:20.0px;width:4.4px;opacity:0.8"></div><div class="n" style="left:77.6px;top:5.4px;width:4.4px;opacity:0.5"></div><div class="n" style="left:83.8px;top:5.4px;width:4.4px;opacity:0.5"></div><div class="n" style="left:90.0px;top:5.4px;width:4.4px;opacity:0.5"></div><div class="n" style="left:77.6px;top:12.7px;width:4.4px;opacity:0.8"></div><div class="n" style="left:83.8px;top:12.7px;width:4.4px;opacity:0.8"></div><div class="n" style="left:90.0px;top:12.7px;width:4.4px;opacity:0.8"></div><div class="n" style="left:77.6px;top:20.6px;width:4.4px;opacity:0.8"></div><div class="n" style="left:83.8px;top:20.6px;width:4.4px;opacity:0.8"></div><div class="n" style="left:90.0px;top:20.6px;width:4.4px;opacity:0.8"></div><div class="tk" style="left:11.10px"></div><div class="tk" style="left:23.50px"></div><div class="tk" style="left:35.90px"></div><div class="tk" style="left:48.30px"></div><div class="tk" style="left:60.70px"></div><div class="tk" style="left:73.10px"></div><div class="tk" style="left:85.50px"></div></div>
<div class="clip pat" style="left:772.30px;top:505.10px;width:99.20px;height:22.3px"><div class="n" style="left:7.7px;top:2.5px;width:3.6px;opacity:0.75"></div><div class="n" style="left:2.5px;top:5.2px;width:3.6px;opacity:0.75"></div><div class="n" style="left:7.7px;top:5.2px;width:3.6px;opacity:0.75"></div><div class="n" style="left:2.5px;top:9.5px;width:3.6px;opacity:0.75"></div><div class="n" style="left:7.7px;top:9.5px;width:3.6px;opacity:0.75"></div><div class="n" style="left:2.5px;top:12.3px;width:3.6px;opacity:0.75"></div><div class="n" style="left:7.7px;top:12.3px;width:3.6px;opacity:0.75"></div><div class="n" style="left:2.5px;top:16.0px;width:3.6px;opacity:0.75"></div><div class="n" style="left:7.7px;top:18.6px;width:3.6px;opacity:0.75"></div><div class="n" style="left:14.9px;top:3.0px;width:3.6px;opacity:0.75"></div><div class="n" style="left:20.1px;top:3.0px;width:3.6px;opacity:0.75"></div><div class="n" style="left:14.9px;top:5.7px;width:3.6px;opacity:0.75"></div><div class="n" style="left:20.1px;top:5.7px;width:3.6px;opacity:0.75"></div><div class="n" style="left:14.9px;top:10.0px;width:3.6px;opacity:0.75"></div><div class="n" style="left:20.1px;top:10.0px;width:3.6px;opacity:0.75"></div><div class="n" style="left:14.9px;top:12.8px;width:3.6px;opacity:0.75"></div><div class="n" style="left:20.1px;top:16.5px;width:3.6px;opacity:0.75"></div><div class="n" style="left:14.9px;top:19.1px;width:3.6px;opacity:0.75"></div><div class="n" style="left:20.1px;top:19.1px;width:3.6px;opacity:0.75"></div><div class="n" style="left:27.3px;top:3.5px;width:3.6px;opacity:0.75"></div><div class="n" style="left:32.5px;top:3.5px;width:3.6px;opacity:0.75"></div><div class="n" style="left:27.3px;top:6.2px;width:3.6px;opacity:0.75"></div><div class="n" style="left:32.5px;top:6.2px;width:3.6px;opacity:0.75"></div><div class="n" style="left:27.3px;top:10.5px;width:3.6px;opacity:0.75"></div><div class="n" style="left:32.5px;top:13.3px;width:3.6px;opacity:0.75"></div><div class="n" style="left:27.3px;top:17.0px;width:3.6px;opacity:0.75"></div><div class="n" style="left:32.5px;top:17.0px;width:3.6px;opacity:0.75"></div><div class="n" style="left:27.3px;top:19.6px;width:3.6px;opacity:0.75"></div><div class="n" style="left:32.5px;top:19.6px;width:3.6px;opacity:0.75"></div><div class="n" style="left:39.7px;top:2.5px;width:3.6px;opacity:0.75"></div><div class="n" style="left:44.9px;top:2.5px;width:3.6px;opacity:0.75"></div><div class="n" style="left:39.7px;top:5.2px;width:3.6px;opacity:0.75"></div><div class="n" style="left:44.9px;top:9.5px;width:3.6px;opacity:0.75"></div><div class="n" style="left:39.7px;top:12.3px;width:3.6px;opacity:0.75"></div><div class="n" style="left:44.9px;top:12.3px;width:3.6px;opacity:0.75"></div><div class="n" style="left:39.7px;top:16.0px;width:3.6px;opacity:0.75"></div><div class="n" style="left:44.9px;top:16.0px;width:3.6px;opacity:0.75"></div><div class="n" style="left:39.7px;top:18.6px;width:3.6px;opacity:0.75"></div><div class="n" style="left:44.9px;top:18.6px;width:3.6px;opacity:0.75"></div><div class="n" style="left:52.1px;top:3.0px;width:3.6px;opacity:0.75"></div><div class="n" style="left:57.3px;top:5.7px;width:3.6px;opacity:0.75"></div><div class="n" style="left:52.1px;top:10.0px;width:3.6px;opacity:0.75"></div><div class="n" style="left:57.3px;top:10.0px;width:3.6px;opacity:0.75"></div><div class="n" style="left:52.1px;top:12.8px;width:3.6px;opacity:0.75"></div><div class="n" style="left:57.3px;top:12.8px;width:3.6px;opacity:0.75"></div><div class="n" style="left:52.1px;top:16.5px;width:3.6px;opacity:0.75"></div><div class="n" style="left:57.3px;top:16.5px;width:3.6px;opacity:0.75"></div><div class="n" style="left:52.1px;top:19.1px;width:3.6px;opacity:0.75"></div><div class="n" style="left:69.7px;top:3.5px;width:3.6px;opacity:0.75"></div><div class="n" style="left:64.5px;top:6.2px;width:3.6px;opacity:0.75"></div><div class="n" style="left:69.7px;top:6.2px;width:3.6px;opacity:0.75"></div><div class="n" style="left:64.5px;top:10.5px;width:3.6px;opacity:0.75"></div><div class="n" style="left:69.7px;top:10.5px;width:3.6px;opacity:0.75"></div><div class="n" style="left:64.5px;top:13.3px;width:3.6px;opacity:0.75"></div><div class="n" style="left:69.7px;top:13.3px;width:3.6px;opacity:0.75"></div><div class="n" style="left:64.5px;top:17.0px;width:3.6px;opacity:0.75"></div><div class="n" style="left:69.7px;top:19.6px;width:3.6px;opacity:0.75"></div><div class="n" style="left:76.9px;top:2.5px;width:3.6px;opacity:0.75"></div><div class="n" style="left:82.1px;top:2.5px;width:3.6px;opacity:0.75"></div><div class="n" style="left:76.9px;top:5.2px;width:3.6px;opacity:0.75"></div><div class="n" style="left:82.1px;top:5.2px;width:3.6px;opacity:0.75"></div><div class="n" style="left:76.9px;top:9.5px;width:3.6px;opacity:0.75"></div><div class="n" style="left:82.1px;top:9.5px;width:3.6px;opacity:0.75"></div><div class="n" style="left:76.9px;top:12.3px;width:3.6px;opacity:0.75"></div><div class="n" style="left:82.1px;top:16.0px;width:3.6px;opacity:0.75"></div><div class="n" style="left:76.9px;top:18.6px;width:3.6px;opacity:0.75"></div><div class="n" style="left:82.1px;top:18.6px;width:3.6px;opacity:0.75"></div><div class="n" style="left:89.3px;top:3.0px;width:3.6px;opacity:0.75"></div><div class="n" style="left:94.5px;top:3.0px;width:3.6px;opacity:0.75"></div><div class="n" style="left:89.3px;top:5.7px;width:3.6px;opacity:0.75"></div><div class="n" style="left:94.5px;top:5.7px;width:3.6px;opacity:0.75"></div><div class="n" style="left:89.3px;top:10.0px;width:3.6px;opacity:0.75"></div><div class="n" style="left:94.5px;top:12.8px;width:3.6px;opacity:0.75"></div><div class="n" style="left:89.3px;top:16.5px;width:3.6px;opacity:0.75"></div><div class="n" style="left:94.5px;top:16.5px;width:3.6px;opacity:0.75"></div><div class="n" style="left:89.3px;top:19.1px;width:3.6px;opacity:0.75"></div><div class="n" style="left:94.5px;top:19.1px;width:3.6px;opacity:0.75"></div><div class="tk" style="left:11.10px"></div><div class="tk" style="left:23.50px"></div><div class="tk" style="left:35.90px"></div><div class="tk" style="left:48.30px"></div><div class="tk" style="left:60.70px"></div><div class="tk" style="left:73.10px"></div><div class="tk" style="left:85.50px"></div></div>
<div class="clip pat" style="left:1268.30px;top:505.10px;width:12.70px;height:22.3px"><div class="n" style="left:3.2px;top:2.2px;width:4.4px;opacity:0.5"></div><div class="n" style="left:9.4px;top:2.2px;width:4.4px;opacity:0.5"></div><div class="n" style="left:15.6px;top:2.2px;width:4.4px;opacity:0.5"></div><div class="n" style="left:3.2px;top:9.5px;width:4.4px;opacity:0.8"></div><div class="n" style="left:9.4px;top:9.5px;width:4.4px;opacity:0.8"></div><div class="n" style="left:15.6px;top:9.5px;width:4.4px;opacity:0.8"></div><div class="n" style="left:3.2px;top:17.4px;width:4.4px;opacity:0.8"></div><div class="n" style="left:9.4px;top:17.4px;width:4.4px;opacity:0.8"></div><div class="n" style="left:15.6px;top:17.4px;width:4.4px;opacity:0.8"></div><div class="n" style="left:28.0px;top:3.6px;width:4.4px;opacity:0.5"></div><div class="n" style="left:34.2px;top:3.6px;width:4.4px;opacity:0.5"></div><div class="n" style="left:40.4px;top:3.6px;width:4.4px;opacity:0.5"></div><div class="n" style="left:28.0px;top:10.9px;width:4.4px;opacity:0.8"></div><div class="n" style="left:34.2px;top:10.9px;width:4.4px;opacity:0.8"></div><div class="n" style="left:40.4px;top:10.9px;width:4.4px;opacity:0.8"></div><div class="n" style="left:28.0px;top:18.8px;width:4.4px;opacity:0.8"></div><div class="n" style="left:34.2px;top:18.8px;width:4.4px;opacity:0.8"></div><div class="n" style="left:40.4px;top:18.8px;width:4.4px;opacity:0.8"></div><div class="n" style="left:52.8px;top:4.8px;width:4.4px;opacity:0.5"></div><div class="n" style="left:59.0px;top:4.8px;width:4.4px;opacity:0.5"></div><div class="n" style="left:65.2px;top:4.8px;width:4.4px;opacity:0.5"></div><div class="n" style="left:52.8px;top:12.1px;width:4.4px;opacity:0.8"></div><div class="n" style="left:59.0px;top:12.1px;width:4.4px;opacity:0.8"></div><div class="n" style="left:65.2px;top:12.1px;width:4.4px;opacity:0.8"></div><div class="n" style="left:52.8px;top:20.0px;width:4.4px;opacity:0.8"></div><div class="n" style="left:59.0px;top:20.0px;width:4.4px;opacity:0.8"></div><div class="n" style="left:65.2px;top:20.0px;width:4.4px;opacity:0.8"></div><div class="n" style="left:77.6px;top:5.4px;width:4.4px;opacity:0.5"></div><div class="n" style="left:83.8px;top:5.4px;width:4.4px;opacity:0.5"></div><div class="n" style="left:90.0px;top:5.4px;width:4.4px;opacity:0.5"></div><div class="n" style="left:77.6px;top:12.7px;width:4.4px;opacity:0.8"></div><div class="n" style="left:83.8px;top:12.7px;width:4.4px;opacity:0.8"></div><div class="n" style="left:90.0px;top:12.7px;width:4.4px;opacity:0.8"></div><div class="n" style="left:77.6px;top:20.6px;width:4.4px;opacity:0.8"></div><div class="n" style="left:83.8px;top:20.6px;width:4.4px;opacity:0.8"></div><div class="n" style="left:90.0px;top:20.6px;width:4.4px;opacity:0.8"></div></div>
<div class="clip pat" style="left:363.10px;top:529.90px;width:24.80px;height:22.3px"><div class="n" style="left:0.0px;top:10.0px;width:22.3px;opacity:0.95"></div><div class="tk" style="left:11.10px"></div></div>
<div class="clip pat" style="left:561.50px;top:529.90px;width:24.80px;height:22.3px"><div class="n" style="left:0.0px;top:10.0px;width:22.3px;opacity:0.95"></div><div class="tk" style="left:11.10px"></div></div>
<div class="clip pat" style="left:660.70px;top:529.90px;width:12.40px;height:22.3px"><div class="n" style="left:0.0px;top:10.0px;width:9.9px;opacity:0.95"></div></div>
<div class="clip pat" style="left:759.90px;top:529.90px;width:12.40px;height:22.3px"><div class="n" style="left:0.0px;top:10.0px;width:9.9px;opacity:0.95"></div></div>
<div class="clip pat" style="left:859.10px;top:529.90px;width:24.80px;height:22.3px"><div class="n" style="left:0.0px;top:10.0px;width:22.3px;opacity:0.95"></div><div class="tk" style="left:11.10px"></div></div>
<div class="clip pat" style="left:1057.50px;top:529.90px;width:24.80px;height:22.3px"><div class="n" style="left:0.0px;top:10.0px;width:22.3px;opacity:0.95"></div><div class="tk" style="left:11.10px"></div></div>
<div class="clip pat" style="left:363.10px;top:554.70px;width:12.40px;height:22.3px"><div class="n" style="left:0.0px;top:10.0px;width:9.9px;opacity:0.95"></div></div>
<div class="clip pat" style="left:561.50px;top:554.70px;width:12.40px;height:22.3px"><div class="n" style="left:0.0px;top:10.0px;width:9.9px;opacity:0.95"></div></div>
<div class="clip pat" style="left:660.70px;top:554.70px;width:12.40px;height:22.3px"></div>
<div class="clip pat" style="left:859.10px;top:554.70px;width:12.40px;height:22.3px"></div>
<div class="clip pat" style="left:1255.90px;top:554.70px;width:12.40px;height:22.3px"></div>
<div class="clip pat" style="left:251.50px;top:579.50px;width:49.60px;height:22.3px"><div class="n" style="left:0.0px;top:10.0px;width:47.1px;opacity:0.95"></div><div class="tk" style="left:11.10px"></div><div class="tk" style="left:23.50px"></div><div class="tk" style="left:35.90px"></div></div>
<div class="clip pat" style="left:325.90px;top:604.30px;width:49.60px;height:22.3px"><div class="n" style="left:0.0px;top:10.0px;width:47.1px;opacity:0.95"></div><div class="tk" style="left:11.10px"></div><div class="tk" style="left:23.50px"></div><div class="tk" style="left:35.90px"></div></div>
<div class="clip pat" style="left:177.10px;top:629.10px;width:49.60px;height:22.3px"><div class="n" style="left:0.0px;top:10.0px;width:47.1px;opacity:0.95"></div><div class="tk" style="left:11.10px"></div><div class="tk" style="left:23.50px"></div><div class="tk" style="left:35.90px"></div></div>
<div class="clip pat" style="left:623.50px;top:703.50px;width:24.80px;height:22.3px"><div class="tk" style="left:11.10px"></div></div>
<div class="abs" style="left:0;top:709.400px;width:1280px;height:10.600px;background:linear-gradient(#2a2a2a 0,#3b3b3b 12%,#333 60%,#2b2b2b 88%,#1c1c1c 100%)"></div>
<div class="abs" style="left:-3px;top:710px;width:114.300px;height:8.500px;border-radius:1.500px;background:linear-gradient(#cfcfcf,#bdbdbd 40%,#a6a6a6)"></div>
<svg class="abs" style="left:699.300px;top:464.200px" width="10.200" height="15.300" viewBox="0 0 12 18"><path d="M1.500 1.500 L1.500 13.500 L4.300 11 L6.300 15.800 L8.200 15 L6.200 10.300 L9.800 10 Z" fill="#fff" stroke="#111" stroke-width=".9"/></svg>
</div></body></html>
